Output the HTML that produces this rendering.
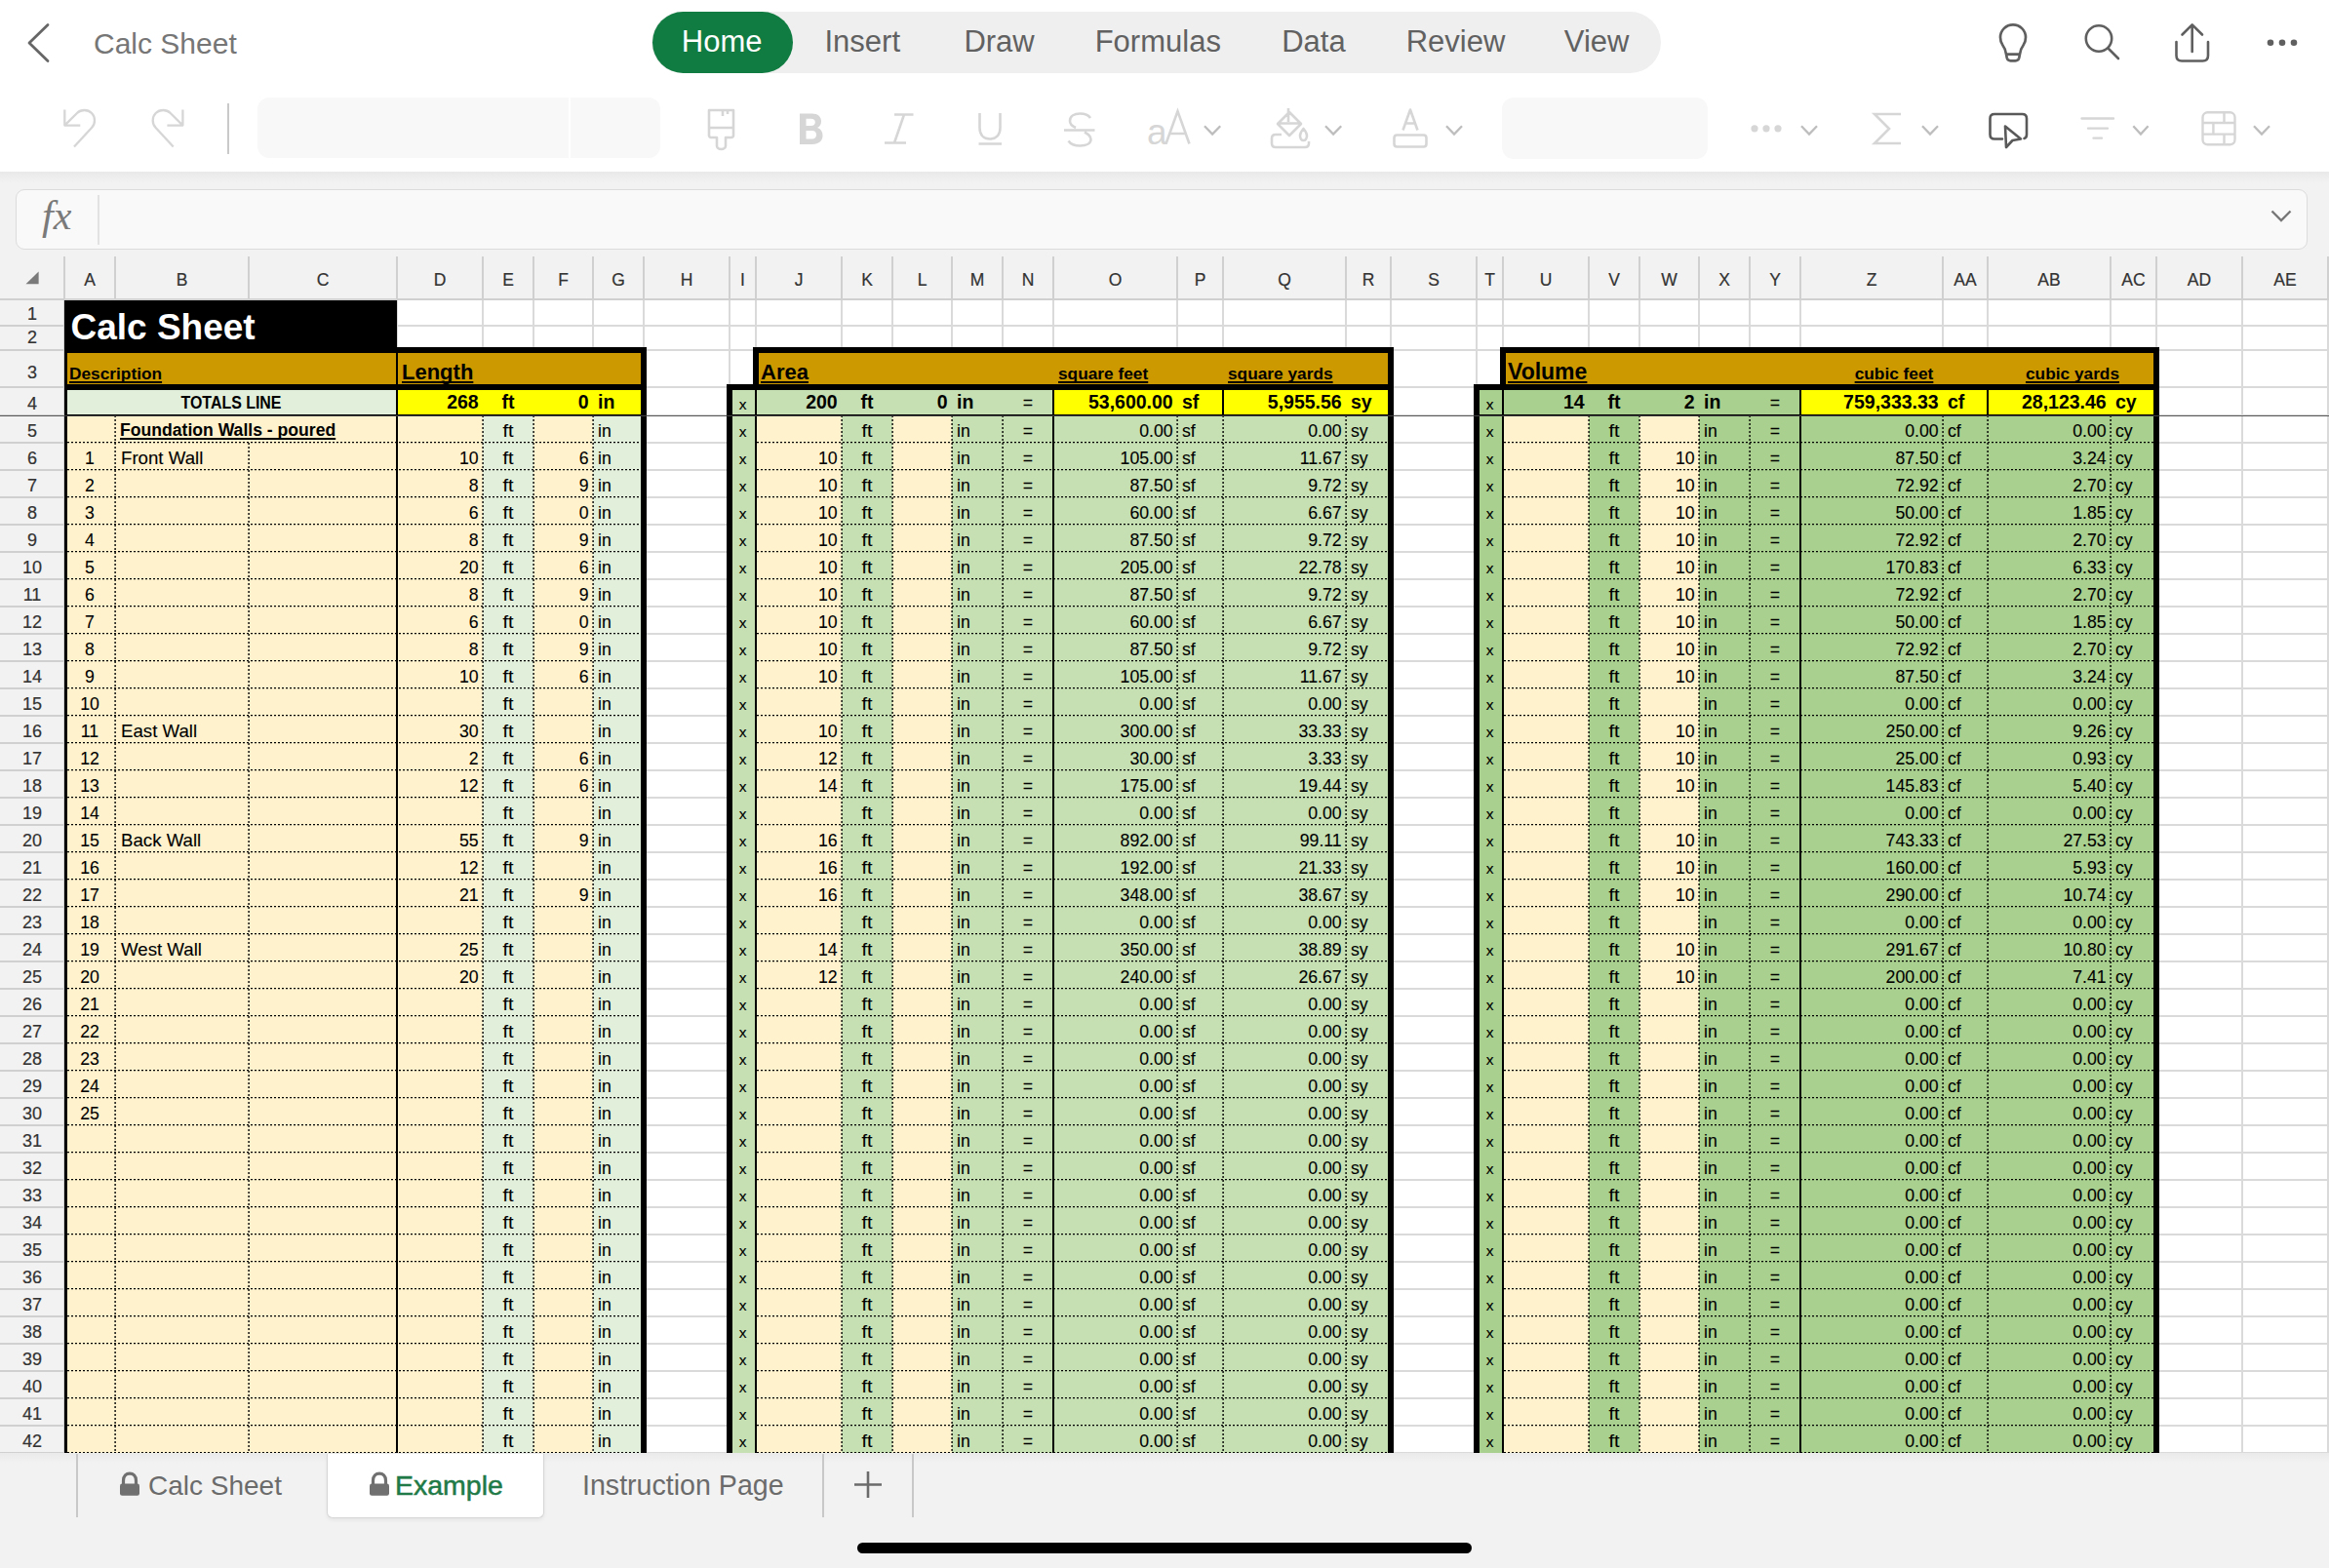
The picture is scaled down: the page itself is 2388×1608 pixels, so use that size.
<!DOCTYPE html>
<html><head><meta charset="utf-8"><title>Calc Sheet</title>
<style>
html,body{margin:0;padding:0;}
body{width:2388px;height:1608px;position:relative;overflow:hidden;background:#fff;font-family:"Liberation Sans", sans-serif;}
div{box-sizing:border-box;}
.hd{position:absolute;height:1.3px;background:repeating-linear-gradient(90deg,#000 0,#000 2px,transparent 2px,transparent 4px);}
.vd{position:absolute;width:1.3px;background:repeating-linear-gradient(180deg,#000 0,#000 2px,transparent 2px,transparent 4px);}
svg{position:absolute;overflow:visible;}
</style></head><body>

<svg style="left:0;top:0" width="2388" height="176" viewBox="0 0 2388 176">
<polyline points="49,25.5 30,44 49,62.5" fill="none" stroke="#666" stroke-width="2.8" stroke-linecap="round" stroke-linejoin="round"/>
<rect x="668" y="12" width="1035" height="63" rx="31.5" fill="#EFEFEF"/>
<rect x="669" y="12" width="144" height="63" rx="31.5" fill="#107C41"/>
<path d="M2056.5,55.6 L2071.5,55.6 M2057,55.6 C2056.5,51.5 2055.5,49 2053.5,46.5 C2051.8,44.3 2051,41.5 2051,38.3 A13,13 0 1 1 2077,38.3 C2077,41.5 2076.2,44.3 2074.5,46.5 C2072.5,49 2071.5,51.5 2071,55.6 L2070.2,59.5 C2069.7,61.5 2068.5,62.3 2066.5,62.3 L2061.5,62.3 C2059.5,62.3 2058.3,61.5 2057.8,59.5 Z" fill="none" stroke="#5f5f5f" stroke-width="2.7" stroke-linejoin="round"/>
<circle cx="2152" cy="39.5" r="13.2" fill="none" stroke="#5f5f5f" stroke-width="2.6"/>
<line x1="2162" y1="50" x2="2172" y2="60" stroke="#5f5f5f" stroke-width="2.6" stroke-linecap="round"/>
<path d="M2231.5,43 L2231.5,57 C2231.5,60.5 2233.5,62.5 2237,62.5 L2258.5,62.5 C2262,62.5 2264,60.5 2264,57 L2264,43" fill="none" stroke="#5f5f5f" stroke-width="2.6" stroke-linecap="round"/>
<path d="M2247.7,53 L2247.7,25.5 M2237.5,35.5 L2247.7,25.3 L2258,35.5" fill="none" stroke="#5f5f5f" stroke-width="2.6" stroke-linecap="round" stroke-linejoin="round"/>
<circle cx="2328" cy="43.8" r="3.3" fill="#5f5f5f"/>
<circle cx="2340" cy="43.8" r="3.3" fill="#5f5f5f"/>
<circle cx="2352" cy="43.8" r="3.3" fill="#5f5f5f"/>
<path d="M66.3,112.5 L66.3,128.6 L82.3,128.6 M66.5,128.4 L79,116 C83,112 90,112 94,116 C98,120 98,127 94,131 L76,150.5" fill="none" stroke="#D6D6D6" stroke-width="2.3" stroke-linejoin="round"/>
<g transform="translate(253.7,0) scale(-1,1)"><path d="M66.3,112.5 L66.3,128.6 L82.3,128.6 M66.5,128.4 L79,116 C83,112 90,112 94,116 C98,120 98,127 94,131 L76,150.5" fill="none" stroke="#D6D6D6" stroke-width="2.3" stroke-linejoin="round"/></g>
<rect x="233" y="106" width="2" height="52" fill="#C9C9C9"/>
<rect x="264" y="100" width="319" height="62" rx="12" fill="#F8F8F8"/>
<rect x="571" y="100" width="12" height="62" fill="#F8F8F8"/>
<rect x="585" y="100" width="92" height="62" rx="12" fill="#F8F8F8"/>
<rect x="585" y="100" width="12" height="62" fill="#F8F8F8"/>
<path d="M727,113 L752,113 L752,139 C752,140 751,141 750,141 L744,141 L744,149.5 C744,151.5 742,153 739.5,153 C737,153 735,151.5 735,149.5 L735,141 L729,141 C728,141 727,140 727,139 Z M727,131 L752,131 M741,113.5 L741,119 M746,113.5 L746,117" fill="none" stroke="#D6D6D6" stroke-width="2.6" stroke-linejoin="round"/>
<path d="M820,116.5 L832.5,116.5 C839,116.5 842,120 842,124.5 C842,127.5 840.5,130 838,131 C841.5,132 843.5,135 843.5,139 C843.5,144.5 839.5,148 833,148 L820,148 Z M826.5,121.8 L826.5,129 L831.5,129 C834.5,129 835.8,127.5 835.8,125.3 C835.8,123 834.5,121.8 831.5,121.8 Z M826.5,134 L826.5,142.5 L832.5,142.5 C835.5,142.5 837,141 837,138.3 C837,135.5 835.5,134 832.5,134 Z" fill="#D6D6D6" fill-rule="evenodd"/>
<path d="M917,117.5 L936.5,117.5 M907,146.5 L929,146.5 M927,117.5 L917,146.5" fill="none" stroke="#D6D6D6" stroke-width="2.6"/>
<path d="M1004.5,116 L1004.5,131 C1004.5,138.5 1009,142.5 1015,142.5 C1021,142.5 1025.5,138.5 1025.5,131 L1025.5,116 M1003.5,147.5 L1027,147.5" fill="none" stroke="#D6D6D6" stroke-width="2.6"/>
<path d="M1118,121 C1116,118 1112,116.5 1107.5,116.5 C1101,116.5 1097,119.5 1097,124 C1097,127.5 1099.5,129.5 1103,131 M1112,135.5 C1116,137.5 1118.5,139.5 1118.5,143 C1118.5,147 1114,149.5 1107.5,149.5 C1101.5,149.5 1097.5,147.5 1095.5,144.5 M1091,133.5 L1122.5,133.5" fill="none" stroke="#D6D6D6" stroke-width="2.6"/>
<text x="1176" y="147.5" font-family="Liberation Sans" font-size="37" fill="#D6D6D6">a</text>
<path d="M1195.5,147.5 L1207.5,114 L1219.5,147.5 M1199.5,137 L1215.5,137" fill="none" stroke="#D6D6D6" stroke-width="2.6"/>
<polyline points="1235,129.3 1243.1,137.5 1251.2,129.3" fill="none" stroke="#BDBDBD" stroke-width="2.3"/>
<path d="M1321,111 L1321,125 M1310,127 L1322,115 L1334,127 L1322,139 Z M1310.5,126.5 L1333.5,126.5 M1340,139 C1340,142 1338.5,144 1336.5,144 C1334.5,144 1333,142 1333,139 C1333,136 1336.5,132 1336.5,132 C1336.5,132 1340,136 1340,139 Z M1314,138 L1308,138 C1305,138 1304,140 1304,142 L1304,147 C1304,149.5 1305.5,151 1308,151 L1338,151 C1340.5,151 1342,149.5 1342,147 L1342,145" fill="none" stroke="#D6D6D6" stroke-width="2.6" stroke-linejoin="round"/>
<polyline points="1359,129.3 1367.1,137.5 1375.2,129.3" fill="none" stroke="#BDBDBD" stroke-width="2.3"/>
<path d="M1438.5,133.5 L1446,112.5 L1453.5,133.5 M1441,126.5 L1451,126.5 M1432.5,138.5 L1459.5,138.5 C1461.5,138.5 1462.5,139.5 1462.5,141.5 L1462.5,147.5 C1462.5,149.5 1461.5,150.5 1459.5,150.5 L1432.5,150.5 C1430.5,150.5 1429.5,149.5 1429.5,147.5 L1429.5,141.5 C1429.5,139.5 1430.5,138.5 1432.5,138.5 Z" fill="none" stroke="#D6D6D6" stroke-width="2.6" stroke-linejoin="round"/>
<polyline points="1483,129.3 1491.0,137.5 1499,129.3" fill="none" stroke="#BDBDBD" stroke-width="2.3"/>
<rect x="1540" y="100" width="211" height="63" rx="12" fill="#F8F8F8"/>
<circle cx="1799" cy="131.8" r="3.6" fill="#D6D6D6"/>
<circle cx="1811" cy="131.8" r="3.6" fill="#D6D6D6"/>
<circle cx="1823" cy="131.8" r="3.6" fill="#D6D6D6"/>
<polyline points="1847,129.3 1855.0,137.5 1863,129.3" fill="none" stroke="#BDBDBD" stroke-width="2.3"/>
<path d="M1949,117 L1922,117 L1937,132 L1922,147 L1949,147" fill="none" stroke="#D6D6D6" stroke-width="2.6"/>
<polyline points="1971,129.3 1979.0,137.5 1987,129.3" fill="none" stroke="#BDBDBD" stroke-width="2.3"/>
<path d="M2053,142.5 L2045,142.5 C2042,142.5 2040.5,141 2040.5,138 L2040.5,121.5 C2040.5,118.5 2042,117 2045,117 L2073.5,117 C2076.5,117 2078,118.5 2078,121.5 L2078,138 C2078,140 2077.5,141.5 2075.5,142" fill="none" stroke="#595959" stroke-width="2.6" stroke-linecap="round"/>
<path d="M2056,129.5 L2072,142.5 L2063.5,144 L2057,151 Z" fill="none" stroke="#595959" stroke-width="2.6" stroke-linejoin="round"/>
<path d="M2134.5,121.5 L2167,121.5 M2141,131.6 L2161,131.6 M2146.5,141.6 L2155,141.6" fill="none" stroke="#D6D6D6" stroke-width="2.4" stroke-linecap="round"/>
<polyline points="2187.3,129.3 2194.95,137.5 2202.6,129.3" fill="none" stroke="#BDBDBD" stroke-width="2.3"/>
<rect x="2258.5" y="115.3" width="33" height="33" rx="5" fill="none" stroke="#D6D6D6" stroke-width="2.4"/>
<path d="M2258.5,126 L2291.5,126 M2258.5,137.6 L2291.5,137.6 M2280.5,115.3 L2280.5,126 M2269.4,126 L2269.4,137.6 M2280.5,137.6 L2280.5,148.3" fill="none" stroke="#D6D6D6" stroke-width="2.4"/>
<polyline points="2311,129.3 2319.0,137.5 2327,129.3" fill="none" stroke="#BDBDBD" stroke-width="2.3"/>
</svg>
<div style="position:absolute;top:29.81px;font-size:30px;line-height:30px;white-space:nowrap;color:#767676;left:96.00px;">Calc Sheet</div>
<div style="position:absolute;top:26.96px;font-size:31px;line-height:31px;white-space:nowrap;color:#fff;left:698.80px;">Home</div>
<div style="position:absolute;top:26.96px;font-size:31px;line-height:31px;white-space:nowrap;color:#616161;left:845.50px;">Insert</div>
<div style="position:absolute;top:26.96px;font-size:31px;line-height:31px;white-space:nowrap;color:#616161;left:988.40px;">Draw</div>
<div style="position:absolute;top:26.96px;font-size:31px;line-height:31px;white-space:nowrap;color:#616161;left:1122.70px;">Formulas</div>
<div style="position:absolute;top:26.96px;font-size:31px;line-height:31px;white-space:nowrap;color:#616161;left:1314.20px;">Data</div>
<div style="position:absolute;top:26.96px;font-size:31px;line-height:31px;white-space:nowrap;color:#616161;left:1441.70px;">Review</div>
<div style="position:absolute;top:26.96px;font-size:31px;line-height:31px;white-space:nowrap;color:#616161;left:1603.80px;">View</div>
<div style="position:absolute;left:0px;top:176px;width:2388px;height:86px;background:#F2F2F2;"></div>
<div style="position:absolute;left:0px;top:176px;width:2388px;height:12px;background:linear-gradient(#E9E9E9,#F2F2F2);"></div>
<div style="position:absolute;left:16px;top:194px;width:2350px;height:62px;border:1.5px solid #DCDCDC;border-radius:9px;background:#F9F9F9"></div>
<div style="position:absolute;left:100px;top:200px;width:2px;height:51px;background:#E2E2E2;"></div>
<div style="position:absolute;top:200.45px;font-size:42px;line-height:42px;white-space:nowrap;color:#7A7A7A;font-style:italic;font-family:'Liberation Serif', serif;left:43.00px;">fx</div>
<svg style="left:0;top:0" width="2388" height="262"><polyline points="2329.5,216.5 2339,226 2348.5,216.5" fill="none" stroke="#777" stroke-width="2.4"/></svg>
<div style="position:absolute;left:0px;top:262px;width:2388px;height:45px;background:#F2F2F2;"></div>
<div style="position:absolute;left:0px;top:306px;width:2388px;height:2px;background:#D0D0D0;"></div>
<div style="position:absolute;left:65px;top:263px;width:2px;height:44px;background:#D0D0D0;"></div>
<div style="position:absolute;left:117px;top:263px;width:2px;height:44px;background:#D0D0D0;"></div>
<div style="position:absolute;left:254px;top:263px;width:2px;height:44px;background:#D0D0D0;"></div>
<div style="position:absolute;left:406px;top:263px;width:2px;height:44px;background:#D0D0D0;"></div>
<div style="position:absolute;left:494px;top:263px;width:2px;height:44px;background:#D0D0D0;"></div>
<div style="position:absolute;left:546px;top:263px;width:2px;height:44px;background:#D0D0D0;"></div>
<div style="position:absolute;left:607px;top:263px;width:2px;height:44px;background:#D0D0D0;"></div>
<div style="position:absolute;left:659px;top:263px;width:2px;height:44px;background:#D0D0D0;"></div>
<div style="position:absolute;left:747px;top:263px;width:2px;height:44px;background:#D0D0D0;"></div>
<div style="position:absolute;left:774px;top:263px;width:2px;height:44px;background:#D0D0D0;"></div>
<div style="position:absolute;left:862px;top:263px;width:2px;height:44px;background:#D0D0D0;"></div>
<div style="position:absolute;left:914px;top:263px;width:2px;height:44px;background:#D0D0D0;"></div>
<div style="position:absolute;left:975px;top:263px;width:2px;height:44px;background:#D0D0D0;"></div>
<div style="position:absolute;left:1027px;top:263px;width:2px;height:44px;background:#D0D0D0;"></div>
<div style="position:absolute;left:1079px;top:263px;width:2px;height:44px;background:#D0D0D0;"></div>
<div style="position:absolute;left:1206px;top:263px;width:2px;height:44px;background:#D0D0D0;"></div>
<div style="position:absolute;left:1253px;top:263px;width:2px;height:44px;background:#D0D0D0;"></div>
<div style="position:absolute;left:1379px;top:263px;width:2px;height:44px;background:#D0D0D0;"></div>
<div style="position:absolute;left:1425px;top:263px;width:2px;height:44px;background:#D0D0D0;"></div>
<div style="position:absolute;left:1513px;top:263px;width:2px;height:44px;background:#D0D0D0;"></div>
<div style="position:absolute;left:1540px;top:263px;width:2px;height:44px;background:#D0D0D0;"></div>
<div style="position:absolute;left:1628px;top:263px;width:2px;height:44px;background:#D0D0D0;"></div>
<div style="position:absolute;left:1680px;top:263px;width:2px;height:44px;background:#D0D0D0;"></div>
<div style="position:absolute;left:1741px;top:263px;width:2px;height:44px;background:#D0D0D0;"></div>
<div style="position:absolute;left:1793px;top:263px;width:2px;height:44px;background:#D0D0D0;"></div>
<div style="position:absolute;left:1845px;top:263px;width:2px;height:44px;background:#D0D0D0;"></div>
<div style="position:absolute;left:1991px;top:263px;width:2px;height:44px;background:#D0D0D0;"></div>
<div style="position:absolute;left:2037px;top:263px;width:2px;height:44px;background:#D0D0D0;"></div>
<div style="position:absolute;left:2163px;top:263px;width:2px;height:44px;background:#D0D0D0;"></div>
<div style="position:absolute;left:2210px;top:263px;width:2px;height:44px;background:#D0D0D0;"></div>
<div style="position:absolute;left:2298px;top:263px;width:2px;height:44px;background:#D0D0D0;"></div>
<div style="position:absolute;left:2386px;top:263px;width:2px;height:44px;background:#D0D0D0;"></div>
<svg style="left:0;top:0" width="80" height="310"><polygon points="26.5,291.2 39.6,291.2 39.6,278.5" fill="#7A7A7A"/></svg>
<div style="position:absolute;top:278.59px;font-size:17.5px;line-height:17.5px;white-space:nowrap;color:#333;left:-208.00px;width:600px;text-align:center;-webkit-text-stroke:0.2px #333;">A</div>
<div style="position:absolute;top:278.59px;font-size:17.5px;line-height:17.5px;white-space:nowrap;color:#333;left:-113.50px;width:600px;text-align:center;-webkit-text-stroke:0.2px #333;">B</div>
<div style="position:absolute;top:278.59px;font-size:17.5px;line-height:17.5px;white-space:nowrap;color:#333;left:31.00px;width:600px;text-align:center;-webkit-text-stroke:0.2px #333;">C</div>
<div style="position:absolute;top:278.59px;font-size:17.5px;line-height:17.5px;white-space:nowrap;color:#333;left:151.00px;width:600px;text-align:center;-webkit-text-stroke:0.2px #333;">D</div>
<div style="position:absolute;top:278.59px;font-size:17.5px;line-height:17.5px;white-space:nowrap;color:#333;left:221.00px;width:600px;text-align:center;-webkit-text-stroke:0.2px #333;">E</div>
<div style="position:absolute;top:278.59px;font-size:17.5px;line-height:17.5px;white-space:nowrap;color:#333;left:277.50px;width:600px;text-align:center;-webkit-text-stroke:0.2px #333;">F</div>
<div style="position:absolute;top:278.59px;font-size:17.5px;line-height:17.5px;white-space:nowrap;color:#333;left:334.00px;width:600px;text-align:center;-webkit-text-stroke:0.2px #333;">G</div>
<div style="position:absolute;top:278.59px;font-size:17.5px;line-height:17.5px;white-space:nowrap;color:#333;left:404.00px;width:600px;text-align:center;-webkit-text-stroke:0.2px #333;">H</div>
<div style="position:absolute;top:278.59px;font-size:17.5px;line-height:17.5px;white-space:nowrap;color:#333;left:461.50px;width:600px;text-align:center;-webkit-text-stroke:0.2px #333;">I</div>
<div style="position:absolute;top:278.59px;font-size:17.5px;line-height:17.5px;white-space:nowrap;color:#333;left:519.00px;width:600px;text-align:center;-webkit-text-stroke:0.2px #333;">J</div>
<div style="position:absolute;top:278.59px;font-size:17.5px;line-height:17.5px;white-space:nowrap;color:#333;left:589.00px;width:600px;text-align:center;-webkit-text-stroke:0.2px #333;">K</div>
<div style="position:absolute;top:278.59px;font-size:17.5px;line-height:17.5px;white-space:nowrap;color:#333;left:645.50px;width:600px;text-align:center;-webkit-text-stroke:0.2px #333;">L</div>
<div style="position:absolute;top:278.59px;font-size:17.5px;line-height:17.5px;white-space:nowrap;color:#333;left:702.00px;width:600px;text-align:center;-webkit-text-stroke:0.2px #333;">M</div>
<div style="position:absolute;top:278.59px;font-size:17.5px;line-height:17.5px;white-space:nowrap;color:#333;left:754.00px;width:600px;text-align:center;-webkit-text-stroke:0.2px #333;">N</div>
<div style="position:absolute;top:278.59px;font-size:17.5px;line-height:17.5px;white-space:nowrap;color:#333;left:843.50px;width:600px;text-align:center;-webkit-text-stroke:0.2px #333;">O</div>
<div style="position:absolute;top:278.59px;font-size:17.5px;line-height:17.5px;white-space:nowrap;color:#333;left:930.50px;width:600px;text-align:center;-webkit-text-stroke:0.2px #333;">P</div>
<div style="position:absolute;top:278.59px;font-size:17.5px;line-height:17.5px;white-space:nowrap;color:#333;left:1017.00px;width:600px;text-align:center;-webkit-text-stroke:0.2px #333;">Q</div>
<div style="position:absolute;top:278.59px;font-size:17.5px;line-height:17.5px;white-space:nowrap;color:#333;left:1103.00px;width:600px;text-align:center;-webkit-text-stroke:0.2px #333;">R</div>
<div style="position:absolute;top:278.59px;font-size:17.5px;line-height:17.5px;white-space:nowrap;color:#333;left:1170.00px;width:600px;text-align:center;-webkit-text-stroke:0.2px #333;">S</div>
<div style="position:absolute;top:278.59px;font-size:17.5px;line-height:17.5px;white-space:nowrap;color:#333;left:1227.50px;width:600px;text-align:center;-webkit-text-stroke:0.2px #333;">T</div>
<div style="position:absolute;top:278.59px;font-size:17.5px;line-height:17.5px;white-space:nowrap;color:#333;left:1285.00px;width:600px;text-align:center;-webkit-text-stroke:0.2px #333;">U</div>
<div style="position:absolute;top:278.59px;font-size:17.5px;line-height:17.5px;white-space:nowrap;color:#333;left:1355.00px;width:600px;text-align:center;-webkit-text-stroke:0.2px #333;">V</div>
<div style="position:absolute;top:278.59px;font-size:17.5px;line-height:17.5px;white-space:nowrap;color:#333;left:1411.50px;width:600px;text-align:center;-webkit-text-stroke:0.2px #333;">W</div>
<div style="position:absolute;top:278.59px;font-size:17.5px;line-height:17.5px;white-space:nowrap;color:#333;left:1468.00px;width:600px;text-align:center;-webkit-text-stroke:0.2px #333;">X</div>
<div style="position:absolute;top:278.59px;font-size:17.5px;line-height:17.5px;white-space:nowrap;color:#333;left:1520.00px;width:600px;text-align:center;-webkit-text-stroke:0.2px #333;">Y</div>
<div style="position:absolute;top:278.59px;font-size:17.5px;line-height:17.5px;white-space:nowrap;color:#333;left:1619.00px;width:600px;text-align:center;-webkit-text-stroke:0.2px #333;">Z</div>
<div style="position:absolute;top:278.59px;font-size:17.5px;line-height:17.5px;white-space:nowrap;color:#333;left:1715.00px;width:600px;text-align:center;-webkit-text-stroke:0.2px #333;">AA</div>
<div style="position:absolute;top:278.59px;font-size:17.5px;line-height:17.5px;white-space:nowrap;color:#333;left:1801.00px;width:600px;text-align:center;-webkit-text-stroke:0.2px #333;">AB</div>
<div style="position:absolute;top:278.59px;font-size:17.5px;line-height:17.5px;white-space:nowrap;color:#333;left:1887.50px;width:600px;text-align:center;-webkit-text-stroke:0.2px #333;">AC</div>
<div style="position:absolute;top:278.59px;font-size:17.5px;line-height:17.5px;white-space:nowrap;color:#333;left:1955.00px;width:600px;text-align:center;-webkit-text-stroke:0.2px #333;">AD</div>
<div style="position:absolute;top:278.59px;font-size:17.5px;line-height:17.5px;white-space:nowrap;color:#333;left:2043.00px;width:600px;text-align:center;-webkit-text-stroke:0.2px #333;">AE</div>
<div style="position:absolute;left:0px;top:308px;width:66px;height:1182px;background:#F2F2F2;"></div>
<div style="position:absolute;left:65px;top:308px;width:2px;height:1182px;background:#D0D0D0;"></div>
<div style="position:absolute;left:0px;top:333.25px;width:65px;height:1.5px;background:#D0D0D0;"></div>
<div style="position:absolute;top:312.76px;font-size:18px;line-height:18px;white-space:nowrap;color:#333;left:-267.00px;width:600px;text-align:center;-webkit-text-stroke:0.2px #333;">1</div>
<div style="position:absolute;left:0px;top:358.25px;width:65px;height:1.5px;background:#D0D0D0;"></div>
<div style="position:absolute;top:336.56px;font-size:18px;line-height:18px;white-space:nowrap;color:#333;left:-267.00px;width:600px;text-align:center;-webkit-text-stroke:0.2px #333;">2</div>
<div style="position:absolute;left:0px;top:396.25px;width:65px;height:1.5px;background:#D0D0D0;"></div>
<div style="position:absolute;top:373.36px;font-size:18px;line-height:18px;white-space:nowrap;color:#333;left:-267.00px;width:600px;text-align:center;-webkit-text-stroke:0.2px #333;">3</div>
<div style="position:absolute;left:0px;top:425.25px;width:65px;height:1.5px;background:#D0D0D0;"></div>
<div style="position:absolute;top:404.76px;font-size:18px;line-height:18px;white-space:nowrap;color:#333;left:-267.00px;width:600px;text-align:center;-webkit-text-stroke:0.2px #333;">4</div>
<div style="position:absolute;left:0px;top:453.25px;width:65px;height:1.5px;background:#D0D0D0;"></div>
<div style="position:absolute;top:432.76px;font-size:18px;line-height:18px;white-space:nowrap;color:#333;left:-267.00px;width:600px;text-align:center;-webkit-text-stroke:0.2px #333;">5</div>
<div style="position:absolute;left:0px;top:481.25px;width:65px;height:1.5px;background:#D0D0D0;"></div>
<div style="position:absolute;top:460.76px;font-size:18px;line-height:18px;white-space:nowrap;color:#333;left:-267.00px;width:600px;text-align:center;-webkit-text-stroke:0.2px #333;">6</div>
<div style="position:absolute;left:0px;top:509.25px;width:65px;height:1.5px;background:#D0D0D0;"></div>
<div style="position:absolute;top:488.76px;font-size:18px;line-height:18px;white-space:nowrap;color:#333;left:-267.00px;width:600px;text-align:center;-webkit-text-stroke:0.2px #333;">7</div>
<div style="position:absolute;left:0px;top:537.25px;width:65px;height:1.5px;background:#D0D0D0;"></div>
<div style="position:absolute;top:516.76px;font-size:18px;line-height:18px;white-space:nowrap;color:#333;left:-267.00px;width:600px;text-align:center;-webkit-text-stroke:0.2px #333;">8</div>
<div style="position:absolute;left:0px;top:565.25px;width:65px;height:1.5px;background:#D0D0D0;"></div>
<div style="position:absolute;top:544.76px;font-size:18px;line-height:18px;white-space:nowrap;color:#333;left:-267.00px;width:600px;text-align:center;-webkit-text-stroke:0.2px #333;">9</div>
<div style="position:absolute;left:0px;top:593.25px;width:65px;height:1.5px;background:#D0D0D0;"></div>
<div style="position:absolute;top:572.76px;font-size:18px;line-height:18px;white-space:nowrap;color:#333;left:-267.00px;width:600px;text-align:center;-webkit-text-stroke:0.2px #333;">10</div>
<div style="position:absolute;left:0px;top:621.25px;width:65px;height:1.5px;background:#D0D0D0;"></div>
<div style="position:absolute;top:600.76px;font-size:18px;line-height:18px;white-space:nowrap;color:#333;left:-267.00px;width:600px;text-align:center;-webkit-text-stroke:0.2px #333;">11</div>
<div style="position:absolute;left:0px;top:649.25px;width:65px;height:1.5px;background:#D0D0D0;"></div>
<div style="position:absolute;top:628.76px;font-size:18px;line-height:18px;white-space:nowrap;color:#333;left:-267.00px;width:600px;text-align:center;-webkit-text-stroke:0.2px #333;">12</div>
<div style="position:absolute;left:0px;top:677.25px;width:65px;height:1.5px;background:#D0D0D0;"></div>
<div style="position:absolute;top:656.76px;font-size:18px;line-height:18px;white-space:nowrap;color:#333;left:-267.00px;width:600px;text-align:center;-webkit-text-stroke:0.2px #333;">13</div>
<div style="position:absolute;left:0px;top:705.25px;width:65px;height:1.5px;background:#D0D0D0;"></div>
<div style="position:absolute;top:684.76px;font-size:18px;line-height:18px;white-space:nowrap;color:#333;left:-267.00px;width:600px;text-align:center;-webkit-text-stroke:0.2px #333;">14</div>
<div style="position:absolute;left:0px;top:733.25px;width:65px;height:1.5px;background:#D0D0D0;"></div>
<div style="position:absolute;top:712.76px;font-size:18px;line-height:18px;white-space:nowrap;color:#333;left:-267.00px;width:600px;text-align:center;-webkit-text-stroke:0.2px #333;">15</div>
<div style="position:absolute;left:0px;top:761.25px;width:65px;height:1.5px;background:#D0D0D0;"></div>
<div style="position:absolute;top:740.76px;font-size:18px;line-height:18px;white-space:nowrap;color:#333;left:-267.00px;width:600px;text-align:center;-webkit-text-stroke:0.2px #333;">16</div>
<div style="position:absolute;left:0px;top:789.25px;width:65px;height:1.5px;background:#D0D0D0;"></div>
<div style="position:absolute;top:768.76px;font-size:18px;line-height:18px;white-space:nowrap;color:#333;left:-267.00px;width:600px;text-align:center;-webkit-text-stroke:0.2px #333;">17</div>
<div style="position:absolute;left:0px;top:817.25px;width:65px;height:1.5px;background:#D0D0D0;"></div>
<div style="position:absolute;top:796.76px;font-size:18px;line-height:18px;white-space:nowrap;color:#333;left:-267.00px;width:600px;text-align:center;-webkit-text-stroke:0.2px #333;">18</div>
<div style="position:absolute;left:0px;top:845.25px;width:65px;height:1.5px;background:#D0D0D0;"></div>
<div style="position:absolute;top:824.76px;font-size:18px;line-height:18px;white-space:nowrap;color:#333;left:-267.00px;width:600px;text-align:center;-webkit-text-stroke:0.2px #333;">19</div>
<div style="position:absolute;left:0px;top:873.25px;width:65px;height:1.5px;background:#D0D0D0;"></div>
<div style="position:absolute;top:852.76px;font-size:18px;line-height:18px;white-space:nowrap;color:#333;left:-267.00px;width:600px;text-align:center;-webkit-text-stroke:0.2px #333;">20</div>
<div style="position:absolute;left:0px;top:901.25px;width:65px;height:1.5px;background:#D0D0D0;"></div>
<div style="position:absolute;top:880.76px;font-size:18px;line-height:18px;white-space:nowrap;color:#333;left:-267.00px;width:600px;text-align:center;-webkit-text-stroke:0.2px #333;">21</div>
<div style="position:absolute;left:0px;top:929.25px;width:65px;height:1.5px;background:#D0D0D0;"></div>
<div style="position:absolute;top:908.76px;font-size:18px;line-height:18px;white-space:nowrap;color:#333;left:-267.00px;width:600px;text-align:center;-webkit-text-stroke:0.2px #333;">22</div>
<div style="position:absolute;left:0px;top:957.25px;width:65px;height:1.5px;background:#D0D0D0;"></div>
<div style="position:absolute;top:936.76px;font-size:18px;line-height:18px;white-space:nowrap;color:#333;left:-267.00px;width:600px;text-align:center;-webkit-text-stroke:0.2px #333;">23</div>
<div style="position:absolute;left:0px;top:985.25px;width:65px;height:1.5px;background:#D0D0D0;"></div>
<div style="position:absolute;top:964.76px;font-size:18px;line-height:18px;white-space:nowrap;color:#333;left:-267.00px;width:600px;text-align:center;-webkit-text-stroke:0.2px #333;">24</div>
<div style="position:absolute;left:0px;top:1013.25px;width:65px;height:1.5px;background:#D0D0D0;"></div>
<div style="position:absolute;top:992.76px;font-size:18px;line-height:18px;white-space:nowrap;color:#333;left:-267.00px;width:600px;text-align:center;-webkit-text-stroke:0.2px #333;">25</div>
<div style="position:absolute;left:0px;top:1041.25px;width:65px;height:1.5px;background:#D0D0D0;"></div>
<div style="position:absolute;top:1020.76px;font-size:18px;line-height:18px;white-space:nowrap;color:#333;left:-267.00px;width:600px;text-align:center;-webkit-text-stroke:0.2px #333;">26</div>
<div style="position:absolute;left:0px;top:1069.25px;width:65px;height:1.5px;background:#D0D0D0;"></div>
<div style="position:absolute;top:1048.76px;font-size:18px;line-height:18px;white-space:nowrap;color:#333;left:-267.00px;width:600px;text-align:center;-webkit-text-stroke:0.2px #333;">27</div>
<div style="position:absolute;left:0px;top:1097.25px;width:65px;height:1.5px;background:#D0D0D0;"></div>
<div style="position:absolute;top:1076.76px;font-size:18px;line-height:18px;white-space:nowrap;color:#333;left:-267.00px;width:600px;text-align:center;-webkit-text-stroke:0.2px #333;">28</div>
<div style="position:absolute;left:0px;top:1125.25px;width:65px;height:1.5px;background:#D0D0D0;"></div>
<div style="position:absolute;top:1104.76px;font-size:18px;line-height:18px;white-space:nowrap;color:#333;left:-267.00px;width:600px;text-align:center;-webkit-text-stroke:0.2px #333;">29</div>
<div style="position:absolute;left:0px;top:1153.25px;width:65px;height:1.5px;background:#D0D0D0;"></div>
<div style="position:absolute;top:1132.76px;font-size:18px;line-height:18px;white-space:nowrap;color:#333;left:-267.00px;width:600px;text-align:center;-webkit-text-stroke:0.2px #333;">30</div>
<div style="position:absolute;left:0px;top:1181.25px;width:65px;height:1.5px;background:#D0D0D0;"></div>
<div style="position:absolute;top:1160.76px;font-size:18px;line-height:18px;white-space:nowrap;color:#333;left:-267.00px;width:600px;text-align:center;-webkit-text-stroke:0.2px #333;">31</div>
<div style="position:absolute;left:0px;top:1209.25px;width:65px;height:1.5px;background:#D0D0D0;"></div>
<div style="position:absolute;top:1188.76px;font-size:18px;line-height:18px;white-space:nowrap;color:#333;left:-267.00px;width:600px;text-align:center;-webkit-text-stroke:0.2px #333;">32</div>
<div style="position:absolute;left:0px;top:1237.25px;width:65px;height:1.5px;background:#D0D0D0;"></div>
<div style="position:absolute;top:1216.76px;font-size:18px;line-height:18px;white-space:nowrap;color:#333;left:-267.00px;width:600px;text-align:center;-webkit-text-stroke:0.2px #333;">33</div>
<div style="position:absolute;left:0px;top:1265.25px;width:65px;height:1.5px;background:#D0D0D0;"></div>
<div style="position:absolute;top:1244.76px;font-size:18px;line-height:18px;white-space:nowrap;color:#333;left:-267.00px;width:600px;text-align:center;-webkit-text-stroke:0.2px #333;">34</div>
<div style="position:absolute;left:0px;top:1293.25px;width:65px;height:1.5px;background:#D0D0D0;"></div>
<div style="position:absolute;top:1272.76px;font-size:18px;line-height:18px;white-space:nowrap;color:#333;left:-267.00px;width:600px;text-align:center;-webkit-text-stroke:0.2px #333;">35</div>
<div style="position:absolute;left:0px;top:1321.25px;width:65px;height:1.5px;background:#D0D0D0;"></div>
<div style="position:absolute;top:1300.76px;font-size:18px;line-height:18px;white-space:nowrap;color:#333;left:-267.00px;width:600px;text-align:center;-webkit-text-stroke:0.2px #333;">36</div>
<div style="position:absolute;left:0px;top:1349.25px;width:65px;height:1.5px;background:#D0D0D0;"></div>
<div style="position:absolute;top:1328.76px;font-size:18px;line-height:18px;white-space:nowrap;color:#333;left:-267.00px;width:600px;text-align:center;-webkit-text-stroke:0.2px #333;">37</div>
<div style="position:absolute;left:0px;top:1377.25px;width:65px;height:1.5px;background:#D0D0D0;"></div>
<div style="position:absolute;top:1356.76px;font-size:18px;line-height:18px;white-space:nowrap;color:#333;left:-267.00px;width:600px;text-align:center;-webkit-text-stroke:0.2px #333;">38</div>
<div style="position:absolute;left:0px;top:1405.25px;width:65px;height:1.5px;background:#D0D0D0;"></div>
<div style="position:absolute;top:1384.76px;font-size:18px;line-height:18px;white-space:nowrap;color:#333;left:-267.00px;width:600px;text-align:center;-webkit-text-stroke:0.2px #333;">39</div>
<div style="position:absolute;left:0px;top:1433.25px;width:65px;height:1.5px;background:#D0D0D0;"></div>
<div style="position:absolute;top:1412.76px;font-size:18px;line-height:18px;white-space:nowrap;color:#333;left:-267.00px;width:600px;text-align:center;-webkit-text-stroke:0.2px #333;">40</div>
<div style="position:absolute;left:0px;top:1461.25px;width:65px;height:1.5px;background:#D0D0D0;"></div>
<div style="position:absolute;top:1440.76px;font-size:18px;line-height:18px;white-space:nowrap;color:#333;left:-267.00px;width:600px;text-align:center;-webkit-text-stroke:0.2px #333;">41</div>
<div style="position:absolute;left:0px;top:1489.25px;width:65px;height:1.5px;background:#D0D0D0;"></div>
<div style="position:absolute;top:1468.76px;font-size:18px;line-height:18px;white-space:nowrap;color:#333;left:-267.00px;width:600px;text-align:center;-webkit-text-stroke:0.2px #333;">42</div>
<div style="position:absolute;left:117px;top:308px;width:2px;height:1182px;background:#DADADA;"></div>
<div style="position:absolute;left:254px;top:308px;width:2px;height:1182px;background:#DADADA;"></div>
<div style="position:absolute;left:406px;top:308px;width:2px;height:1182px;background:#DADADA;"></div>
<div style="position:absolute;left:494px;top:308px;width:2px;height:1182px;background:#DADADA;"></div>
<div style="position:absolute;left:546px;top:308px;width:2px;height:1182px;background:#DADADA;"></div>
<div style="position:absolute;left:607px;top:308px;width:2px;height:1182px;background:#DADADA;"></div>
<div style="position:absolute;left:659px;top:308px;width:2px;height:1182px;background:#DADADA;"></div>
<div style="position:absolute;left:747px;top:308px;width:2px;height:1182px;background:#DADADA;"></div>
<div style="position:absolute;left:774px;top:308px;width:2px;height:1182px;background:#DADADA;"></div>
<div style="position:absolute;left:862px;top:308px;width:2px;height:1182px;background:#DADADA;"></div>
<div style="position:absolute;left:914px;top:308px;width:2px;height:1182px;background:#DADADA;"></div>
<div style="position:absolute;left:975px;top:308px;width:2px;height:1182px;background:#DADADA;"></div>
<div style="position:absolute;left:1027px;top:308px;width:2px;height:1182px;background:#DADADA;"></div>
<div style="position:absolute;left:1079px;top:308px;width:2px;height:1182px;background:#DADADA;"></div>
<div style="position:absolute;left:1206px;top:308px;width:2px;height:1182px;background:#DADADA;"></div>
<div style="position:absolute;left:1253px;top:308px;width:2px;height:1182px;background:#DADADA;"></div>
<div style="position:absolute;left:1379px;top:308px;width:2px;height:1182px;background:#DADADA;"></div>
<div style="position:absolute;left:1425px;top:308px;width:2px;height:1182px;background:#DADADA;"></div>
<div style="position:absolute;left:1513px;top:308px;width:2px;height:1182px;background:#DADADA;"></div>
<div style="position:absolute;left:1540px;top:308px;width:2px;height:1182px;background:#DADADA;"></div>
<div style="position:absolute;left:1628px;top:308px;width:2px;height:1182px;background:#DADADA;"></div>
<div style="position:absolute;left:1680px;top:308px;width:2px;height:1182px;background:#DADADA;"></div>
<div style="position:absolute;left:1741px;top:308px;width:2px;height:1182px;background:#DADADA;"></div>
<div style="position:absolute;left:1793px;top:308px;width:2px;height:1182px;background:#DADADA;"></div>
<div style="position:absolute;left:1845px;top:308px;width:2px;height:1182px;background:#DADADA;"></div>
<div style="position:absolute;left:1991px;top:308px;width:2px;height:1182px;background:#DADADA;"></div>
<div style="position:absolute;left:2037px;top:308px;width:2px;height:1182px;background:#DADADA;"></div>
<div style="position:absolute;left:2163px;top:308px;width:2px;height:1182px;background:#DADADA;"></div>
<div style="position:absolute;left:2210px;top:308px;width:2px;height:1182px;background:#DADADA;"></div>
<div style="position:absolute;left:2298px;top:308px;width:2px;height:1182px;background:#DADADA;"></div>
<div style="position:absolute;left:2386px;top:308px;width:2px;height:1182px;background:#DADADA;"></div>
<div style="position:absolute;left:67px;top:333px;width:2321px;height:2px;background:#DADADA;"></div>
<div style="position:absolute;left:67px;top:358px;width:2321px;height:2px;background:#DADADA;"></div>
<div style="position:absolute;left:67px;top:396px;width:2321px;height:2px;background:#DADADA;"></div>
<div style="position:absolute;left:67px;top:425px;width:2321px;height:2px;background:#DADADA;"></div>
<div style="position:absolute;left:67px;top:453px;width:2321px;height:2px;background:#DADADA;"></div>
<div style="position:absolute;left:67px;top:481px;width:2321px;height:2px;background:#DADADA;"></div>
<div style="position:absolute;left:67px;top:509px;width:2321px;height:2px;background:#DADADA;"></div>
<div style="position:absolute;left:67px;top:537px;width:2321px;height:2px;background:#DADADA;"></div>
<div style="position:absolute;left:67px;top:565px;width:2321px;height:2px;background:#DADADA;"></div>
<div style="position:absolute;left:67px;top:593px;width:2321px;height:2px;background:#DADADA;"></div>
<div style="position:absolute;left:67px;top:621px;width:2321px;height:2px;background:#DADADA;"></div>
<div style="position:absolute;left:67px;top:649px;width:2321px;height:2px;background:#DADADA;"></div>
<div style="position:absolute;left:67px;top:677px;width:2321px;height:2px;background:#DADADA;"></div>
<div style="position:absolute;left:67px;top:705px;width:2321px;height:2px;background:#DADADA;"></div>
<div style="position:absolute;left:67px;top:733px;width:2321px;height:2px;background:#DADADA;"></div>
<div style="position:absolute;left:67px;top:761px;width:2321px;height:2px;background:#DADADA;"></div>
<div style="position:absolute;left:67px;top:789px;width:2321px;height:2px;background:#DADADA;"></div>
<div style="position:absolute;left:67px;top:817px;width:2321px;height:2px;background:#DADADA;"></div>
<div style="position:absolute;left:67px;top:845px;width:2321px;height:2px;background:#DADADA;"></div>
<div style="position:absolute;left:67px;top:873px;width:2321px;height:2px;background:#DADADA;"></div>
<div style="position:absolute;left:67px;top:901px;width:2321px;height:2px;background:#DADADA;"></div>
<div style="position:absolute;left:67px;top:929px;width:2321px;height:2px;background:#DADADA;"></div>
<div style="position:absolute;left:67px;top:957px;width:2321px;height:2px;background:#DADADA;"></div>
<div style="position:absolute;left:67px;top:985px;width:2321px;height:2px;background:#DADADA;"></div>
<div style="position:absolute;left:67px;top:1013px;width:2321px;height:2px;background:#DADADA;"></div>
<div style="position:absolute;left:67px;top:1041px;width:2321px;height:2px;background:#DADADA;"></div>
<div style="position:absolute;left:67px;top:1069px;width:2321px;height:2px;background:#DADADA;"></div>
<div style="position:absolute;left:67px;top:1097px;width:2321px;height:2px;background:#DADADA;"></div>
<div style="position:absolute;left:67px;top:1125px;width:2321px;height:2px;background:#DADADA;"></div>
<div style="position:absolute;left:67px;top:1153px;width:2321px;height:2px;background:#DADADA;"></div>
<div style="position:absolute;left:67px;top:1181px;width:2321px;height:2px;background:#DADADA;"></div>
<div style="position:absolute;left:67px;top:1209px;width:2321px;height:2px;background:#DADADA;"></div>
<div style="position:absolute;left:67px;top:1237px;width:2321px;height:2px;background:#DADADA;"></div>
<div style="position:absolute;left:67px;top:1265px;width:2321px;height:2px;background:#DADADA;"></div>
<div style="position:absolute;left:67px;top:1293px;width:2321px;height:2px;background:#DADADA;"></div>
<div style="position:absolute;left:67px;top:1321px;width:2321px;height:2px;background:#DADADA;"></div>
<div style="position:absolute;left:67px;top:1349px;width:2321px;height:2px;background:#DADADA;"></div>
<div style="position:absolute;left:67px;top:1377px;width:2321px;height:2px;background:#DADADA;"></div>
<div style="position:absolute;left:67px;top:1405px;width:2321px;height:2px;background:#DADADA;"></div>
<div style="position:absolute;left:67px;top:1433px;width:2321px;height:2px;background:#DADADA;"></div>
<div style="position:absolute;left:67px;top:1461px;width:2321px;height:2px;background:#DADADA;"></div>
<div style="position:absolute;left:67px;top:1489px;width:2321px;height:2px;background:#DADADA;"></div>
<div style="position:absolute;left:66px;top:308px;width:341px;height:51px;background:#000;"></div>
<div style="position:absolute;left:66px;top:359px;width:594px;height:38px;background:#CC9900;"></div>
<div style="position:absolute;left:775px;top:359px;width:651px;height:38px;background:#CC9900;"></div>
<div style="position:absolute;left:1541px;top:359px;width:670px;height:38px;background:#CC9900;"></div>
<div style="position:absolute;left:66px;top:397px;width:341px;height:29px;background:#E2EFDA;"></div>
<div style="position:absolute;left:407px;top:397px;width:253px;height:29px;background:#FFFF00;"></div>
<div style="position:absolute;left:748px;top:397px;width:332px;height:29px;background:#C6E0B4;"></div>
<div style="position:absolute;left:1080px;top:397px;width:346px;height:29px;background:#FFFF00;"></div>
<div style="position:absolute;left:1514px;top:397px;width:332px;height:29px;background:#A9D08E;"></div>
<div style="position:absolute;left:1846px;top:397px;width:365px;height:29px;background:#FFFF00;"></div>
<div style="position:absolute;left:66px;top:426px;width:429px;height:1064px;background:#FFF2CC;"></div>
<div style="position:absolute;left:495px;top:426px;width:52px;height:1064px;background:#E2EFDA;"></div>
<div style="position:absolute;left:547px;top:426px;width:61px;height:1064px;background:#FFF2CC;"></div>
<div style="position:absolute;left:608px;top:426px;width:52px;height:1064px;background:#E2EFDA;"></div>
<div style="position:absolute;left:748px;top:426px;width:27px;height:1064px;background:#C6E0B4;"></div>
<div style="position:absolute;left:775px;top:426px;width:88px;height:1064px;background:#FFF2CC;"></div>
<div style="position:absolute;left:863px;top:426px;width:52px;height:1064px;background:#C6E0B4;"></div>
<div style="position:absolute;left:915px;top:426px;width:61px;height:1064px;background:#FFF2CC;"></div>
<div style="position:absolute;left:976px;top:426px;width:450px;height:1064px;background:#C6E0B4;"></div>
<div style="position:absolute;left:1514px;top:426px;width:27px;height:1064px;background:#A9D08E;"></div>
<div style="position:absolute;left:1541px;top:426px;width:88px;height:1064px;background:#FFF2CC;"></div>
<div style="position:absolute;left:1629px;top:426px;width:52px;height:1064px;background:#A9D08E;"></div>
<div style="position:absolute;left:1681px;top:426px;width:61px;height:1064px;background:#FFF2CC;"></div>
<div style="position:absolute;left:1742px;top:426px;width:469px;height:1064px;background:#A9D08E;"></div>
<svg style="left:0;top:0" width="2388" height="1608"><path d="M118.10,426V1490M255.10,454V1490M495.10,426V1490M547.10,426V1490M608.10,426V1490M863.10,426V1490M915.10,426V1490M976.10,426V1490M1028.10,426V1490M1207.10,426V1490M1254.10,426V1490M1380.10,426V1490M1629.10,426V1490M1681.10,426V1490M1742.10,426V1490M1794.10,426V1490M1992.10,426V1490M2038.10,426V1490M2164.10,426V1490M69,453.60H657M776,453.60H1423M1542,453.60H2208M69,481.60H657M776,481.60H1423M1542,481.60H2208M69,509.60H657M776,509.60H1423M1542,509.60H2208M69,537.60H657M776,537.60H1423M1542,537.60H2208M69,565.60H657M776,565.60H1423M1542,565.60H2208M69,593.60H657M776,593.60H1423M1542,593.60H2208M69,621.60H657M776,621.60H1423M1542,621.60H2208M69,649.60H657M776,649.60H1423M1542,649.60H2208M69,677.60H657M776,677.60H1423M1542,677.60H2208M69,705.60H657M776,705.60H1423M1542,705.60H2208M69,733.60H657M776,733.60H1423M1542,733.60H2208M69,761.60H657M776,761.60H1423M1542,761.60H2208M69,789.60H657M776,789.60H1423M1542,789.60H2208M69,817.60H657M776,817.60H1423M1542,817.60H2208M69,845.60H657M776,845.60H1423M1542,845.60H2208M69,873.60H657M776,873.60H1423M1542,873.60H2208M69,901.60H657M776,901.60H1423M1542,901.60H2208M69,929.60H657M776,929.60H1423M1542,929.60H2208M69,957.60H657M776,957.60H1423M1542,957.60H2208M69,985.60H657M776,985.60H1423M1542,985.60H2208M69,1013.60H657M776,1013.60H1423M1542,1013.60H2208M69,1041.60H657M776,1041.60H1423M1542,1041.60H2208M69,1069.60H657M776,1069.60H1423M1542,1069.60H2208M69,1097.60H657M776,1097.60H1423M1542,1097.60H2208M69,1125.60H657M776,1125.60H1423M1542,1125.60H2208M69,1153.60H657M776,1153.60H1423M1542,1153.60H2208M69,1181.60H657M776,1181.60H1423M1542,1181.60H2208M69,1209.60H657M776,1209.60H1423M1542,1209.60H2208M69,1237.60H657M776,1237.60H1423M1542,1237.60H2208M69,1265.60H657M776,1265.60H1423M1542,1265.60H2208M69,1293.60H657M776,1293.60H1423M1542,1293.60H2208M69,1321.60H657M776,1321.60H1423M1542,1321.60H2208M69,1349.60H657M776,1349.60H1423M1542,1349.60H2208M69,1377.60H657M776,1377.60H1423M1542,1377.60H2208M69,1405.60H657M776,1405.60H1423M1542,1405.60H2208M69,1433.60H657M776,1433.60H1423M1542,1433.60H2208M69,1461.60H657M776,1461.60H1423M1542,1461.60H2208M69,1489.60H657M776,1489.60H1423M1542,1489.60H2208" stroke="#000" stroke-width="1.4" stroke-dasharray="2 2" fill="none"/></svg>
<div style="position:absolute;left:406.0px;top:359px;width:2.0px;height:1131px;background:#000;"></div>
<div style="position:absolute;left:774.0px;top:397px;width:2.0px;height:1093px;background:#000;"></div>
<div style="position:absolute;left:1079.0px;top:397px;width:2.0px;height:1093px;background:#000;"></div>
<div style="position:absolute;left:1540.0px;top:397px;width:2.0px;height:1093px;background:#000;"></div>
<div style="position:absolute;left:1845.0px;top:397px;width:2.0px;height:1093px;background:#000;"></div>
<div style="position:absolute;left:1253.0px;top:397px;width:2.0px;height:29px;background:#000;"></div>
<div style="position:absolute;left:2037.0px;top:397px;width:2.0px;height:29px;background:#000;"></div>
<div style="position:absolute;left:66px;top:425.0px;width:597px;height:2.0px;background:#000;"></div>
<div style="position:absolute;left:745px;top:425.0px;width:684px;height:2.0px;background:#000;"></div>
<div style="position:absolute;left:1511px;top:425.0px;width:703px;height:2.0px;background:#000;"></div>
<div style="position:absolute;left:66px;top:308px;width:3px;height:1182px;background:#000;"></div>
<div style="position:absolute;left:66px;top:356.0px;width:597px;height:6.0px;background:#000;"></div>
<div style="position:absolute;left:66px;top:394.0px;width:597px;height:6.0px;background:#000;"></div>
<div style="position:absolute;left:772px;top:356.0px;width:657px;height:6.0px;background:#000;"></div>
<div style="position:absolute;left:745px;top:394.0px;width:684px;height:6.0px;background:#000;"></div>
<div style="position:absolute;left:1538px;top:356.0px;width:676px;height:6.0px;background:#000;"></div>
<div style="position:absolute;left:1511px;top:394.0px;width:703px;height:6.0px;background:#000;"></div>
<div style="position:absolute;left:657.0px;top:356px;width:6.0px;height:1134px;background:#000;"></div>
<div style="position:absolute;left:772.0px;top:356px;width:6.0px;height:44px;background:#000;"></div>
<div style="position:absolute;left:745.0px;top:394px;width:6.0px;height:1096px;background:#000;"></div>
<div style="position:absolute;left:1423.0px;top:356px;width:6.0px;height:1134px;background:#000;"></div>
<div style="position:absolute;left:1538.0px;top:356px;width:6.0px;height:44px;background:#000;"></div>
<div style="position:absolute;left:1511.0px;top:394px;width:6.0px;height:1096px;background:#000;"></div>
<div style="position:absolute;left:2208.0px;top:356px;width:6.0px;height:1134px;background:#000;"></div>
<div style="position:absolute;left:0px;top:425.5px;width:2388px;height:1.5px;background:#4A4A4A;opacity:0.9"></div>
<div style="position:absolute;top:316.68px;font-size:37px;line-height:37px;white-space:nowrap;color:#fff;font-weight:bold;left:72.50px;">Calc Sheet</div>
<div style="position:absolute;top:374.66px;font-size:17.3px;line-height:17.3px;white-space:nowrap;color:#000;font-weight:bold;text-decoration:underline;text-decoration-thickness:1.6px;text-underline-offset:1.5px;text-decoration-skip-ink:none;left:71.00px;">Description</div>
<div style="position:absolute;top:370.68px;font-size:22px;line-height:22px;white-space:nowrap;color:#000;font-weight:bold;text-decoration:underline;text-decoration-thickness:1.6px;text-underline-offset:1.5px;text-decoration-skip-ink:none;left:412.00px;">Length</div>
<div style="position:absolute;top:370.68px;font-size:22px;line-height:22px;white-space:nowrap;color:#000;font-weight:bold;text-decoration:underline;text-decoration-thickness:1.6px;text-underline-offset:1.5px;text-decoration-skip-ink:none;left:780.00px;">Area</div>
<div style="position:absolute;top:374.66px;font-size:17.3px;line-height:17.3px;white-space:nowrap;color:#000;font-weight:bold;text-decoration:underline;text-decoration-thickness:1.6px;text-underline-offset:1.5px;text-decoration-skip-ink:none;left:1085.00px;">square feet</div>
<div style="position:absolute;top:374.66px;font-size:17.3px;line-height:17.3px;white-space:nowrap;color:#000;font-weight:bold;text-decoration:underline;text-decoration-thickness:1.6px;text-underline-offset:1.5px;text-decoration-skip-ink:none;left:1259.00px;">square yards</div>
<div style="position:absolute;top:369.83px;font-size:23px;line-height:23px;white-space:nowrap;color:#000;font-weight:bold;text-decoration:underline;text-decoration-thickness:1.6px;text-underline-offset:1.5px;text-decoration-skip-ink:none;left:1546.00px;">Volume</div>
<div style="position:absolute;top:374.66px;font-size:17.3px;line-height:17.3px;white-space:nowrap;color:#000;font-weight:bold;text-decoration:underline;text-decoration-thickness:1.6px;text-underline-offset:1.5px;text-decoration-skip-ink:none;left:1642.00px;width:600px;text-align:center;">cubic feet</div>
<div style="position:absolute;top:374.66px;font-size:17.3px;line-height:17.3px;white-space:nowrap;color:#000;font-weight:bold;text-decoration:underline;text-decoration-thickness:1.6px;text-underline-offset:1.5px;text-decoration-skip-ink:none;left:1825.00px;width:600px;text-align:center;">cubic yards</div>
<div style="position:absolute;top:405.19px;font-size:17.5px;line-height:17.5px;white-space:nowrap;color:#000;font-weight:bold;left:-63.50px;width:600px;text-align:center;transform:scaleX(0.91);transform-origin:center 0;">TOTALS LINE</div>
<div style="position:absolute;top:403.49px;font-size:19.5px;line-height:19.5px;white-space:nowrap;color:#000;font-weight:bold;right:1897.30px;">268</div>
<div style="position:absolute;top:403.49px;font-size:19.5px;line-height:19.5px;white-space:nowrap;color:#000;font-weight:bold;left:221.00px;width:600px;text-align:center;">ft</div>
<div style="position:absolute;top:403.49px;font-size:19.5px;line-height:19.5px;white-space:nowrap;color:#000;font-weight:bold;right:1784.30px;">0</div>
<div style="position:absolute;top:403.49px;font-size:19.5px;line-height:19.5px;white-space:nowrap;color:#000;font-weight:bold;left:613.00px;">in</div>
<div style="position:absolute;top:406.58px;font-size:15.5px;line-height:15.5px;white-space:nowrap;color:#000;left:461.50px;width:600px;text-align:center;-webkit-text-stroke:0.1px #000;">x</div>
<div style="position:absolute;top:403.49px;font-size:19.5px;line-height:19.5px;white-space:nowrap;color:#000;font-weight:bold;right:1529.30px;">200</div>
<div style="position:absolute;top:403.49px;font-size:19.5px;line-height:19.5px;white-space:nowrap;color:#000;font-weight:bold;left:589.00px;width:600px;text-align:center;">ft</div>
<div style="position:absolute;top:403.49px;font-size:19.5px;line-height:19.5px;white-space:nowrap;color:#000;font-weight:bold;right:1416.30px;">0</div>
<div style="position:absolute;top:403.49px;font-size:19.5px;line-height:19.5px;white-space:nowrap;color:#000;font-weight:bold;left:981.00px;">in</div>
<div style="position:absolute;top:405.02px;font-size:17.7px;line-height:17.7px;white-space:nowrap;color:#000;left:754.00px;width:600px;text-align:center;-webkit-text-stroke:0.1px #000;">=</div>
<div style="position:absolute;top:403.49px;font-size:19.5px;line-height:19.5px;white-space:nowrap;color:#000;font-weight:bold;right:1185.30px;">53,600.00</div>
<div style="position:absolute;top:403.49px;font-size:19.5px;line-height:19.5px;white-space:nowrap;color:#000;font-weight:bold;left:1212.00px;">sf</div>
<div style="position:absolute;top:403.49px;font-size:19.5px;line-height:19.5px;white-space:nowrap;color:#000;font-weight:bold;right:1012.30px;">5,955.56</div>
<div style="position:absolute;top:403.49px;font-size:19.5px;line-height:19.5px;white-space:nowrap;color:#000;font-weight:bold;left:1385.00px;">sy</div>
<div style="position:absolute;top:406.58px;font-size:15.5px;line-height:15.5px;white-space:nowrap;color:#000;left:1227.50px;width:600px;text-align:center;-webkit-text-stroke:0.1px #000;">x</div>
<div style="position:absolute;top:403.49px;font-size:19.5px;line-height:19.5px;white-space:nowrap;color:#000;font-weight:bold;right:763.30px;">14</div>
<div style="position:absolute;top:403.49px;font-size:19.5px;line-height:19.5px;white-space:nowrap;color:#000;font-weight:bold;left:1355.00px;width:600px;text-align:center;">ft</div>
<div style="position:absolute;top:403.49px;font-size:19.5px;line-height:19.5px;white-space:nowrap;color:#000;font-weight:bold;right:650.30px;">2</div>
<div style="position:absolute;top:403.49px;font-size:19.5px;line-height:19.5px;white-space:nowrap;color:#000;font-weight:bold;left:1747.00px;">in</div>
<div style="position:absolute;top:405.02px;font-size:17.7px;line-height:17.7px;white-space:nowrap;color:#000;left:1520.00px;width:600px;text-align:center;-webkit-text-stroke:0.1px #000;">=</div>
<div style="position:absolute;top:403.49px;font-size:19.5px;line-height:19.5px;white-space:nowrap;color:#000;font-weight:bold;right:400.30px;">759,333.33</div>
<div style="position:absolute;top:403.49px;font-size:19.5px;line-height:19.5px;white-space:nowrap;color:#000;font-weight:bold;left:1997.00px;">cf</div>
<div style="position:absolute;top:403.49px;font-size:19.5px;line-height:19.5px;white-space:nowrap;color:#000;font-weight:bold;right:228.30px;">28,123.46</div>
<div style="position:absolute;top:403.49px;font-size:19.5px;line-height:19.5px;white-space:nowrap;color:#000;font-weight:bold;left:2169.00px;">cy</div>
<div style="position:absolute;top:433.82px;font-size:17.7px;line-height:17.7px;white-space:nowrap;color:#000;left:221.00px;width:600px;text-align:center;transform:scaleX(1.12);transform-origin:center 0;-webkit-text-stroke:0.1px #000;">ft</div>
<div style="position:absolute;top:433.82px;font-size:17.7px;line-height:17.7px;white-space:nowrap;color:#000;left:613.00px;-webkit-text-stroke:0.1px #000;">in</div>
<div style="position:absolute;top:435.38px;font-size:15.5px;line-height:15.5px;white-space:nowrap;color:#000;left:461.50px;width:600px;text-align:center;-webkit-text-stroke:0.1px #000;">x</div>
<div style="position:absolute;top:433.82px;font-size:17.7px;line-height:17.7px;white-space:nowrap;color:#000;left:589.00px;width:600px;text-align:center;transform:scaleX(1.12);transform-origin:center 0;-webkit-text-stroke:0.1px #000;">ft</div>
<div style="position:absolute;top:433.82px;font-size:17.7px;line-height:17.7px;white-space:nowrap;color:#000;left:981.00px;-webkit-text-stroke:0.1px #000;">in</div>
<div style="position:absolute;top:433.82px;font-size:17.7px;line-height:17.7px;white-space:nowrap;color:#000;left:754.00px;width:600px;text-align:center;-webkit-text-stroke:0.1px #000;">=</div>
<div style="position:absolute;top:433.82px;font-size:17.7px;line-height:17.7px;white-space:nowrap;color:#000;right:1185.30px;-webkit-text-stroke:0.1px #000;">0.00</div>
<div style="position:absolute;top:433.82px;font-size:17.7px;line-height:17.7px;white-space:nowrap;color:#000;left:1212.00px;-webkit-text-stroke:0.1px #000;">sf</div>
<div style="position:absolute;top:433.82px;font-size:17.7px;line-height:17.7px;white-space:nowrap;color:#000;right:1012.30px;-webkit-text-stroke:0.1px #000;">0.00</div>
<div style="position:absolute;top:433.82px;font-size:17.7px;line-height:17.7px;white-space:nowrap;color:#000;left:1385.00px;-webkit-text-stroke:0.1px #000;">sy</div>
<div style="position:absolute;top:435.38px;font-size:15.5px;line-height:15.5px;white-space:nowrap;color:#000;left:1227.50px;width:600px;text-align:center;-webkit-text-stroke:0.1px #000;">x</div>
<div style="position:absolute;top:433.82px;font-size:17.7px;line-height:17.7px;white-space:nowrap;color:#000;left:1355.00px;width:600px;text-align:center;transform:scaleX(1.12);transform-origin:center 0;-webkit-text-stroke:0.1px #000;">ft</div>
<div style="position:absolute;top:433.82px;font-size:17.7px;line-height:17.7px;white-space:nowrap;color:#000;left:1747.00px;-webkit-text-stroke:0.1px #000;">in</div>
<div style="position:absolute;top:433.82px;font-size:17.7px;line-height:17.7px;white-space:nowrap;color:#000;left:1520.00px;width:600px;text-align:center;-webkit-text-stroke:0.1px #000;">=</div>
<div style="position:absolute;top:433.82px;font-size:17.7px;line-height:17.7px;white-space:nowrap;color:#000;right:400.30px;-webkit-text-stroke:0.1px #000;">0.00</div>
<div style="position:absolute;top:433.82px;font-size:17.7px;line-height:17.7px;white-space:nowrap;color:#000;left:1997.00px;-webkit-text-stroke:0.1px #000;">cf</div>
<div style="position:absolute;top:433.82px;font-size:17.7px;line-height:17.7px;white-space:nowrap;color:#000;right:228.30px;-webkit-text-stroke:0.1px #000;">0.00</div>
<div style="position:absolute;top:433.82px;font-size:17.7px;line-height:17.7px;white-space:nowrap;color:#000;left:2169.00px;-webkit-text-stroke:0.1px #000;">cy</div>
<div style="position:absolute;top:461.82px;font-size:17.7px;line-height:17.7px;white-space:nowrap;color:#000;left:-208.00px;width:600px;text-align:center;-webkit-text-stroke:0.1px #000;">1</div>
<div style="position:absolute;top:461.82px;font-size:17.7px;line-height:17.7px;white-space:nowrap;color:#000;left:124.00px;transform:scaleX(1.055);transform-origin:left 0;-webkit-text-stroke:0.1px #000;">Front Wall</div>
<div style="position:absolute;top:461.82px;font-size:17.7px;line-height:17.7px;white-space:nowrap;color:#000;right:1897.30px;-webkit-text-stroke:0.1px #000;">10</div>
<div style="position:absolute;top:461.82px;font-size:17.7px;line-height:17.7px;white-space:nowrap;color:#000;left:221.00px;width:600px;text-align:center;transform:scaleX(1.12);transform-origin:center 0;-webkit-text-stroke:0.1px #000;">ft</div>
<div style="position:absolute;top:461.82px;font-size:17.7px;line-height:17.7px;white-space:nowrap;color:#000;right:1784.30px;-webkit-text-stroke:0.1px #000;">6</div>
<div style="position:absolute;top:461.82px;font-size:17.7px;line-height:17.7px;white-space:nowrap;color:#000;left:613.00px;-webkit-text-stroke:0.1px #000;">in</div>
<div style="position:absolute;top:463.38px;font-size:15.5px;line-height:15.5px;white-space:nowrap;color:#000;left:461.50px;width:600px;text-align:center;-webkit-text-stroke:0.1px #000;">x</div>
<div style="position:absolute;top:461.82px;font-size:17.7px;line-height:17.7px;white-space:nowrap;color:#000;right:1529.30px;-webkit-text-stroke:0.1px #000;">10</div>
<div style="position:absolute;top:461.82px;font-size:17.7px;line-height:17.7px;white-space:nowrap;color:#000;left:589.00px;width:600px;text-align:center;transform:scaleX(1.12);transform-origin:center 0;-webkit-text-stroke:0.1px #000;">ft</div>
<div style="position:absolute;top:461.82px;font-size:17.7px;line-height:17.7px;white-space:nowrap;color:#000;left:981.00px;-webkit-text-stroke:0.1px #000;">in</div>
<div style="position:absolute;top:461.82px;font-size:17.7px;line-height:17.7px;white-space:nowrap;color:#000;left:754.00px;width:600px;text-align:center;-webkit-text-stroke:0.1px #000;">=</div>
<div style="position:absolute;top:461.82px;font-size:17.7px;line-height:17.7px;white-space:nowrap;color:#000;right:1185.30px;-webkit-text-stroke:0.1px #000;">105.00</div>
<div style="position:absolute;top:461.82px;font-size:17.7px;line-height:17.7px;white-space:nowrap;color:#000;left:1212.00px;-webkit-text-stroke:0.1px #000;">sf</div>
<div style="position:absolute;top:461.82px;font-size:17.7px;line-height:17.7px;white-space:nowrap;color:#000;right:1012.30px;-webkit-text-stroke:0.1px #000;">11.67</div>
<div style="position:absolute;top:461.82px;font-size:17.7px;line-height:17.7px;white-space:nowrap;color:#000;left:1385.00px;-webkit-text-stroke:0.1px #000;">sy</div>
<div style="position:absolute;top:463.38px;font-size:15.5px;line-height:15.5px;white-space:nowrap;color:#000;left:1227.50px;width:600px;text-align:center;-webkit-text-stroke:0.1px #000;">x</div>
<div style="position:absolute;top:461.82px;font-size:17.7px;line-height:17.7px;white-space:nowrap;color:#000;left:1355.00px;width:600px;text-align:center;transform:scaleX(1.12);transform-origin:center 0;-webkit-text-stroke:0.1px #000;">ft</div>
<div style="position:absolute;top:461.82px;font-size:17.7px;line-height:17.7px;white-space:nowrap;color:#000;right:650.30px;-webkit-text-stroke:0.1px #000;">10</div>
<div style="position:absolute;top:461.82px;font-size:17.7px;line-height:17.7px;white-space:nowrap;color:#000;left:1747.00px;-webkit-text-stroke:0.1px #000;">in</div>
<div style="position:absolute;top:461.82px;font-size:17.7px;line-height:17.7px;white-space:nowrap;color:#000;left:1520.00px;width:600px;text-align:center;-webkit-text-stroke:0.1px #000;">=</div>
<div style="position:absolute;top:461.82px;font-size:17.7px;line-height:17.7px;white-space:nowrap;color:#000;right:400.30px;-webkit-text-stroke:0.1px #000;">87.50</div>
<div style="position:absolute;top:461.82px;font-size:17.7px;line-height:17.7px;white-space:nowrap;color:#000;left:1997.00px;-webkit-text-stroke:0.1px #000;">cf</div>
<div style="position:absolute;top:461.82px;font-size:17.7px;line-height:17.7px;white-space:nowrap;color:#000;right:228.30px;-webkit-text-stroke:0.1px #000;">3.24</div>
<div style="position:absolute;top:461.82px;font-size:17.7px;line-height:17.7px;white-space:nowrap;color:#000;left:2169.00px;-webkit-text-stroke:0.1px #000;">cy</div>
<div style="position:absolute;top:489.82px;font-size:17.7px;line-height:17.7px;white-space:nowrap;color:#000;left:-208.00px;width:600px;text-align:center;-webkit-text-stroke:0.1px #000;">2</div>
<div style="position:absolute;top:489.82px;font-size:17.7px;line-height:17.7px;white-space:nowrap;color:#000;right:1897.30px;-webkit-text-stroke:0.1px #000;">8</div>
<div style="position:absolute;top:489.82px;font-size:17.7px;line-height:17.7px;white-space:nowrap;color:#000;left:221.00px;width:600px;text-align:center;transform:scaleX(1.12);transform-origin:center 0;-webkit-text-stroke:0.1px #000;">ft</div>
<div style="position:absolute;top:489.82px;font-size:17.7px;line-height:17.7px;white-space:nowrap;color:#000;right:1784.30px;-webkit-text-stroke:0.1px #000;">9</div>
<div style="position:absolute;top:489.82px;font-size:17.7px;line-height:17.7px;white-space:nowrap;color:#000;left:613.00px;-webkit-text-stroke:0.1px #000;">in</div>
<div style="position:absolute;top:491.38px;font-size:15.5px;line-height:15.5px;white-space:nowrap;color:#000;left:461.50px;width:600px;text-align:center;-webkit-text-stroke:0.1px #000;">x</div>
<div style="position:absolute;top:489.82px;font-size:17.7px;line-height:17.7px;white-space:nowrap;color:#000;right:1529.30px;-webkit-text-stroke:0.1px #000;">10</div>
<div style="position:absolute;top:489.82px;font-size:17.7px;line-height:17.7px;white-space:nowrap;color:#000;left:589.00px;width:600px;text-align:center;transform:scaleX(1.12);transform-origin:center 0;-webkit-text-stroke:0.1px #000;">ft</div>
<div style="position:absolute;top:489.82px;font-size:17.7px;line-height:17.7px;white-space:nowrap;color:#000;left:981.00px;-webkit-text-stroke:0.1px #000;">in</div>
<div style="position:absolute;top:489.82px;font-size:17.7px;line-height:17.7px;white-space:nowrap;color:#000;left:754.00px;width:600px;text-align:center;-webkit-text-stroke:0.1px #000;">=</div>
<div style="position:absolute;top:489.82px;font-size:17.7px;line-height:17.7px;white-space:nowrap;color:#000;right:1185.30px;-webkit-text-stroke:0.1px #000;">87.50</div>
<div style="position:absolute;top:489.82px;font-size:17.7px;line-height:17.7px;white-space:nowrap;color:#000;left:1212.00px;-webkit-text-stroke:0.1px #000;">sf</div>
<div style="position:absolute;top:489.82px;font-size:17.7px;line-height:17.7px;white-space:nowrap;color:#000;right:1012.30px;-webkit-text-stroke:0.1px #000;">9.72</div>
<div style="position:absolute;top:489.82px;font-size:17.7px;line-height:17.7px;white-space:nowrap;color:#000;left:1385.00px;-webkit-text-stroke:0.1px #000;">sy</div>
<div style="position:absolute;top:491.38px;font-size:15.5px;line-height:15.5px;white-space:nowrap;color:#000;left:1227.50px;width:600px;text-align:center;-webkit-text-stroke:0.1px #000;">x</div>
<div style="position:absolute;top:489.82px;font-size:17.7px;line-height:17.7px;white-space:nowrap;color:#000;left:1355.00px;width:600px;text-align:center;transform:scaleX(1.12);transform-origin:center 0;-webkit-text-stroke:0.1px #000;">ft</div>
<div style="position:absolute;top:489.82px;font-size:17.7px;line-height:17.7px;white-space:nowrap;color:#000;right:650.30px;-webkit-text-stroke:0.1px #000;">10</div>
<div style="position:absolute;top:489.82px;font-size:17.7px;line-height:17.7px;white-space:nowrap;color:#000;left:1747.00px;-webkit-text-stroke:0.1px #000;">in</div>
<div style="position:absolute;top:489.82px;font-size:17.7px;line-height:17.7px;white-space:nowrap;color:#000;left:1520.00px;width:600px;text-align:center;-webkit-text-stroke:0.1px #000;">=</div>
<div style="position:absolute;top:489.82px;font-size:17.7px;line-height:17.7px;white-space:nowrap;color:#000;right:400.30px;-webkit-text-stroke:0.1px #000;">72.92</div>
<div style="position:absolute;top:489.82px;font-size:17.7px;line-height:17.7px;white-space:nowrap;color:#000;left:1997.00px;-webkit-text-stroke:0.1px #000;">cf</div>
<div style="position:absolute;top:489.82px;font-size:17.7px;line-height:17.7px;white-space:nowrap;color:#000;right:228.30px;-webkit-text-stroke:0.1px #000;">2.70</div>
<div style="position:absolute;top:489.82px;font-size:17.7px;line-height:17.7px;white-space:nowrap;color:#000;left:2169.00px;-webkit-text-stroke:0.1px #000;">cy</div>
<div style="position:absolute;top:517.82px;font-size:17.7px;line-height:17.7px;white-space:nowrap;color:#000;left:-208.00px;width:600px;text-align:center;-webkit-text-stroke:0.1px #000;">3</div>
<div style="position:absolute;top:517.82px;font-size:17.7px;line-height:17.7px;white-space:nowrap;color:#000;right:1897.30px;-webkit-text-stroke:0.1px #000;">6</div>
<div style="position:absolute;top:517.82px;font-size:17.7px;line-height:17.7px;white-space:nowrap;color:#000;left:221.00px;width:600px;text-align:center;transform:scaleX(1.12);transform-origin:center 0;-webkit-text-stroke:0.1px #000;">ft</div>
<div style="position:absolute;top:517.82px;font-size:17.7px;line-height:17.7px;white-space:nowrap;color:#000;right:1784.30px;-webkit-text-stroke:0.1px #000;">0</div>
<div style="position:absolute;top:517.82px;font-size:17.7px;line-height:17.7px;white-space:nowrap;color:#000;left:613.00px;-webkit-text-stroke:0.1px #000;">in</div>
<div style="position:absolute;top:519.38px;font-size:15.5px;line-height:15.5px;white-space:nowrap;color:#000;left:461.50px;width:600px;text-align:center;-webkit-text-stroke:0.1px #000;">x</div>
<div style="position:absolute;top:517.82px;font-size:17.7px;line-height:17.7px;white-space:nowrap;color:#000;right:1529.30px;-webkit-text-stroke:0.1px #000;">10</div>
<div style="position:absolute;top:517.82px;font-size:17.7px;line-height:17.7px;white-space:nowrap;color:#000;left:589.00px;width:600px;text-align:center;transform:scaleX(1.12);transform-origin:center 0;-webkit-text-stroke:0.1px #000;">ft</div>
<div style="position:absolute;top:517.82px;font-size:17.7px;line-height:17.7px;white-space:nowrap;color:#000;left:981.00px;-webkit-text-stroke:0.1px #000;">in</div>
<div style="position:absolute;top:517.82px;font-size:17.7px;line-height:17.7px;white-space:nowrap;color:#000;left:754.00px;width:600px;text-align:center;-webkit-text-stroke:0.1px #000;">=</div>
<div style="position:absolute;top:517.82px;font-size:17.7px;line-height:17.7px;white-space:nowrap;color:#000;right:1185.30px;-webkit-text-stroke:0.1px #000;">60.00</div>
<div style="position:absolute;top:517.82px;font-size:17.7px;line-height:17.7px;white-space:nowrap;color:#000;left:1212.00px;-webkit-text-stroke:0.1px #000;">sf</div>
<div style="position:absolute;top:517.82px;font-size:17.7px;line-height:17.7px;white-space:nowrap;color:#000;right:1012.30px;-webkit-text-stroke:0.1px #000;">6.67</div>
<div style="position:absolute;top:517.82px;font-size:17.7px;line-height:17.7px;white-space:nowrap;color:#000;left:1385.00px;-webkit-text-stroke:0.1px #000;">sy</div>
<div style="position:absolute;top:519.38px;font-size:15.5px;line-height:15.5px;white-space:nowrap;color:#000;left:1227.50px;width:600px;text-align:center;-webkit-text-stroke:0.1px #000;">x</div>
<div style="position:absolute;top:517.82px;font-size:17.7px;line-height:17.7px;white-space:nowrap;color:#000;left:1355.00px;width:600px;text-align:center;transform:scaleX(1.12);transform-origin:center 0;-webkit-text-stroke:0.1px #000;">ft</div>
<div style="position:absolute;top:517.82px;font-size:17.7px;line-height:17.7px;white-space:nowrap;color:#000;right:650.30px;-webkit-text-stroke:0.1px #000;">10</div>
<div style="position:absolute;top:517.82px;font-size:17.7px;line-height:17.7px;white-space:nowrap;color:#000;left:1747.00px;-webkit-text-stroke:0.1px #000;">in</div>
<div style="position:absolute;top:517.82px;font-size:17.7px;line-height:17.7px;white-space:nowrap;color:#000;left:1520.00px;width:600px;text-align:center;-webkit-text-stroke:0.1px #000;">=</div>
<div style="position:absolute;top:517.82px;font-size:17.7px;line-height:17.7px;white-space:nowrap;color:#000;right:400.30px;-webkit-text-stroke:0.1px #000;">50.00</div>
<div style="position:absolute;top:517.82px;font-size:17.7px;line-height:17.7px;white-space:nowrap;color:#000;left:1997.00px;-webkit-text-stroke:0.1px #000;">cf</div>
<div style="position:absolute;top:517.82px;font-size:17.7px;line-height:17.7px;white-space:nowrap;color:#000;right:228.30px;-webkit-text-stroke:0.1px #000;">1.85</div>
<div style="position:absolute;top:517.82px;font-size:17.7px;line-height:17.7px;white-space:nowrap;color:#000;left:2169.00px;-webkit-text-stroke:0.1px #000;">cy</div>
<div style="position:absolute;top:545.82px;font-size:17.7px;line-height:17.7px;white-space:nowrap;color:#000;left:-208.00px;width:600px;text-align:center;-webkit-text-stroke:0.1px #000;">4</div>
<div style="position:absolute;top:545.82px;font-size:17.7px;line-height:17.7px;white-space:nowrap;color:#000;right:1897.30px;-webkit-text-stroke:0.1px #000;">8</div>
<div style="position:absolute;top:545.82px;font-size:17.7px;line-height:17.7px;white-space:nowrap;color:#000;left:221.00px;width:600px;text-align:center;transform:scaleX(1.12);transform-origin:center 0;-webkit-text-stroke:0.1px #000;">ft</div>
<div style="position:absolute;top:545.82px;font-size:17.7px;line-height:17.7px;white-space:nowrap;color:#000;right:1784.30px;-webkit-text-stroke:0.1px #000;">9</div>
<div style="position:absolute;top:545.82px;font-size:17.7px;line-height:17.7px;white-space:nowrap;color:#000;left:613.00px;-webkit-text-stroke:0.1px #000;">in</div>
<div style="position:absolute;top:547.38px;font-size:15.5px;line-height:15.5px;white-space:nowrap;color:#000;left:461.50px;width:600px;text-align:center;-webkit-text-stroke:0.1px #000;">x</div>
<div style="position:absolute;top:545.82px;font-size:17.7px;line-height:17.7px;white-space:nowrap;color:#000;right:1529.30px;-webkit-text-stroke:0.1px #000;">10</div>
<div style="position:absolute;top:545.82px;font-size:17.7px;line-height:17.7px;white-space:nowrap;color:#000;left:589.00px;width:600px;text-align:center;transform:scaleX(1.12);transform-origin:center 0;-webkit-text-stroke:0.1px #000;">ft</div>
<div style="position:absolute;top:545.82px;font-size:17.7px;line-height:17.7px;white-space:nowrap;color:#000;left:981.00px;-webkit-text-stroke:0.1px #000;">in</div>
<div style="position:absolute;top:545.82px;font-size:17.7px;line-height:17.7px;white-space:nowrap;color:#000;left:754.00px;width:600px;text-align:center;-webkit-text-stroke:0.1px #000;">=</div>
<div style="position:absolute;top:545.82px;font-size:17.7px;line-height:17.7px;white-space:nowrap;color:#000;right:1185.30px;-webkit-text-stroke:0.1px #000;">87.50</div>
<div style="position:absolute;top:545.82px;font-size:17.7px;line-height:17.7px;white-space:nowrap;color:#000;left:1212.00px;-webkit-text-stroke:0.1px #000;">sf</div>
<div style="position:absolute;top:545.82px;font-size:17.7px;line-height:17.7px;white-space:nowrap;color:#000;right:1012.30px;-webkit-text-stroke:0.1px #000;">9.72</div>
<div style="position:absolute;top:545.82px;font-size:17.7px;line-height:17.7px;white-space:nowrap;color:#000;left:1385.00px;-webkit-text-stroke:0.1px #000;">sy</div>
<div style="position:absolute;top:547.38px;font-size:15.5px;line-height:15.5px;white-space:nowrap;color:#000;left:1227.50px;width:600px;text-align:center;-webkit-text-stroke:0.1px #000;">x</div>
<div style="position:absolute;top:545.82px;font-size:17.7px;line-height:17.7px;white-space:nowrap;color:#000;left:1355.00px;width:600px;text-align:center;transform:scaleX(1.12);transform-origin:center 0;-webkit-text-stroke:0.1px #000;">ft</div>
<div style="position:absolute;top:545.82px;font-size:17.7px;line-height:17.7px;white-space:nowrap;color:#000;right:650.30px;-webkit-text-stroke:0.1px #000;">10</div>
<div style="position:absolute;top:545.82px;font-size:17.7px;line-height:17.7px;white-space:nowrap;color:#000;left:1747.00px;-webkit-text-stroke:0.1px #000;">in</div>
<div style="position:absolute;top:545.82px;font-size:17.7px;line-height:17.7px;white-space:nowrap;color:#000;left:1520.00px;width:600px;text-align:center;-webkit-text-stroke:0.1px #000;">=</div>
<div style="position:absolute;top:545.82px;font-size:17.7px;line-height:17.7px;white-space:nowrap;color:#000;right:400.30px;-webkit-text-stroke:0.1px #000;">72.92</div>
<div style="position:absolute;top:545.82px;font-size:17.7px;line-height:17.7px;white-space:nowrap;color:#000;left:1997.00px;-webkit-text-stroke:0.1px #000;">cf</div>
<div style="position:absolute;top:545.82px;font-size:17.7px;line-height:17.7px;white-space:nowrap;color:#000;right:228.30px;-webkit-text-stroke:0.1px #000;">2.70</div>
<div style="position:absolute;top:545.82px;font-size:17.7px;line-height:17.7px;white-space:nowrap;color:#000;left:2169.00px;-webkit-text-stroke:0.1px #000;">cy</div>
<div style="position:absolute;top:573.82px;font-size:17.7px;line-height:17.7px;white-space:nowrap;color:#000;left:-208.00px;width:600px;text-align:center;-webkit-text-stroke:0.1px #000;">5</div>
<div style="position:absolute;top:573.82px;font-size:17.7px;line-height:17.7px;white-space:nowrap;color:#000;right:1897.30px;-webkit-text-stroke:0.1px #000;">20</div>
<div style="position:absolute;top:573.82px;font-size:17.7px;line-height:17.7px;white-space:nowrap;color:#000;left:221.00px;width:600px;text-align:center;transform:scaleX(1.12);transform-origin:center 0;-webkit-text-stroke:0.1px #000;">ft</div>
<div style="position:absolute;top:573.82px;font-size:17.7px;line-height:17.7px;white-space:nowrap;color:#000;right:1784.30px;-webkit-text-stroke:0.1px #000;">6</div>
<div style="position:absolute;top:573.82px;font-size:17.7px;line-height:17.7px;white-space:nowrap;color:#000;left:613.00px;-webkit-text-stroke:0.1px #000;">in</div>
<div style="position:absolute;top:575.38px;font-size:15.5px;line-height:15.5px;white-space:nowrap;color:#000;left:461.50px;width:600px;text-align:center;-webkit-text-stroke:0.1px #000;">x</div>
<div style="position:absolute;top:573.82px;font-size:17.7px;line-height:17.7px;white-space:nowrap;color:#000;right:1529.30px;-webkit-text-stroke:0.1px #000;">10</div>
<div style="position:absolute;top:573.82px;font-size:17.7px;line-height:17.7px;white-space:nowrap;color:#000;left:589.00px;width:600px;text-align:center;transform:scaleX(1.12);transform-origin:center 0;-webkit-text-stroke:0.1px #000;">ft</div>
<div style="position:absolute;top:573.82px;font-size:17.7px;line-height:17.7px;white-space:nowrap;color:#000;left:981.00px;-webkit-text-stroke:0.1px #000;">in</div>
<div style="position:absolute;top:573.82px;font-size:17.7px;line-height:17.7px;white-space:nowrap;color:#000;left:754.00px;width:600px;text-align:center;-webkit-text-stroke:0.1px #000;">=</div>
<div style="position:absolute;top:573.82px;font-size:17.7px;line-height:17.7px;white-space:nowrap;color:#000;right:1185.30px;-webkit-text-stroke:0.1px #000;">205.00</div>
<div style="position:absolute;top:573.82px;font-size:17.7px;line-height:17.7px;white-space:nowrap;color:#000;left:1212.00px;-webkit-text-stroke:0.1px #000;">sf</div>
<div style="position:absolute;top:573.82px;font-size:17.7px;line-height:17.7px;white-space:nowrap;color:#000;right:1012.30px;-webkit-text-stroke:0.1px #000;">22.78</div>
<div style="position:absolute;top:573.82px;font-size:17.7px;line-height:17.7px;white-space:nowrap;color:#000;left:1385.00px;-webkit-text-stroke:0.1px #000;">sy</div>
<div style="position:absolute;top:575.38px;font-size:15.5px;line-height:15.5px;white-space:nowrap;color:#000;left:1227.50px;width:600px;text-align:center;-webkit-text-stroke:0.1px #000;">x</div>
<div style="position:absolute;top:573.82px;font-size:17.7px;line-height:17.7px;white-space:nowrap;color:#000;left:1355.00px;width:600px;text-align:center;transform:scaleX(1.12);transform-origin:center 0;-webkit-text-stroke:0.1px #000;">ft</div>
<div style="position:absolute;top:573.82px;font-size:17.7px;line-height:17.7px;white-space:nowrap;color:#000;right:650.30px;-webkit-text-stroke:0.1px #000;">10</div>
<div style="position:absolute;top:573.82px;font-size:17.7px;line-height:17.7px;white-space:nowrap;color:#000;left:1747.00px;-webkit-text-stroke:0.1px #000;">in</div>
<div style="position:absolute;top:573.82px;font-size:17.7px;line-height:17.7px;white-space:nowrap;color:#000;left:1520.00px;width:600px;text-align:center;-webkit-text-stroke:0.1px #000;">=</div>
<div style="position:absolute;top:573.82px;font-size:17.7px;line-height:17.7px;white-space:nowrap;color:#000;right:400.30px;-webkit-text-stroke:0.1px #000;">170.83</div>
<div style="position:absolute;top:573.82px;font-size:17.7px;line-height:17.7px;white-space:nowrap;color:#000;left:1997.00px;-webkit-text-stroke:0.1px #000;">cf</div>
<div style="position:absolute;top:573.82px;font-size:17.7px;line-height:17.7px;white-space:nowrap;color:#000;right:228.30px;-webkit-text-stroke:0.1px #000;">6.33</div>
<div style="position:absolute;top:573.82px;font-size:17.7px;line-height:17.7px;white-space:nowrap;color:#000;left:2169.00px;-webkit-text-stroke:0.1px #000;">cy</div>
<div style="position:absolute;top:601.82px;font-size:17.7px;line-height:17.7px;white-space:nowrap;color:#000;left:-208.00px;width:600px;text-align:center;-webkit-text-stroke:0.1px #000;">6</div>
<div style="position:absolute;top:601.82px;font-size:17.7px;line-height:17.7px;white-space:nowrap;color:#000;right:1897.30px;-webkit-text-stroke:0.1px #000;">8</div>
<div style="position:absolute;top:601.82px;font-size:17.7px;line-height:17.7px;white-space:nowrap;color:#000;left:221.00px;width:600px;text-align:center;transform:scaleX(1.12);transform-origin:center 0;-webkit-text-stroke:0.1px #000;">ft</div>
<div style="position:absolute;top:601.82px;font-size:17.7px;line-height:17.7px;white-space:nowrap;color:#000;right:1784.30px;-webkit-text-stroke:0.1px #000;">9</div>
<div style="position:absolute;top:601.82px;font-size:17.7px;line-height:17.7px;white-space:nowrap;color:#000;left:613.00px;-webkit-text-stroke:0.1px #000;">in</div>
<div style="position:absolute;top:603.38px;font-size:15.5px;line-height:15.5px;white-space:nowrap;color:#000;left:461.50px;width:600px;text-align:center;-webkit-text-stroke:0.1px #000;">x</div>
<div style="position:absolute;top:601.82px;font-size:17.7px;line-height:17.7px;white-space:nowrap;color:#000;right:1529.30px;-webkit-text-stroke:0.1px #000;">10</div>
<div style="position:absolute;top:601.82px;font-size:17.7px;line-height:17.7px;white-space:nowrap;color:#000;left:589.00px;width:600px;text-align:center;transform:scaleX(1.12);transform-origin:center 0;-webkit-text-stroke:0.1px #000;">ft</div>
<div style="position:absolute;top:601.82px;font-size:17.7px;line-height:17.7px;white-space:nowrap;color:#000;left:981.00px;-webkit-text-stroke:0.1px #000;">in</div>
<div style="position:absolute;top:601.82px;font-size:17.7px;line-height:17.7px;white-space:nowrap;color:#000;left:754.00px;width:600px;text-align:center;-webkit-text-stroke:0.1px #000;">=</div>
<div style="position:absolute;top:601.82px;font-size:17.7px;line-height:17.7px;white-space:nowrap;color:#000;right:1185.30px;-webkit-text-stroke:0.1px #000;">87.50</div>
<div style="position:absolute;top:601.82px;font-size:17.7px;line-height:17.7px;white-space:nowrap;color:#000;left:1212.00px;-webkit-text-stroke:0.1px #000;">sf</div>
<div style="position:absolute;top:601.82px;font-size:17.7px;line-height:17.7px;white-space:nowrap;color:#000;right:1012.30px;-webkit-text-stroke:0.1px #000;">9.72</div>
<div style="position:absolute;top:601.82px;font-size:17.7px;line-height:17.7px;white-space:nowrap;color:#000;left:1385.00px;-webkit-text-stroke:0.1px #000;">sy</div>
<div style="position:absolute;top:603.38px;font-size:15.5px;line-height:15.5px;white-space:nowrap;color:#000;left:1227.50px;width:600px;text-align:center;-webkit-text-stroke:0.1px #000;">x</div>
<div style="position:absolute;top:601.82px;font-size:17.7px;line-height:17.7px;white-space:nowrap;color:#000;left:1355.00px;width:600px;text-align:center;transform:scaleX(1.12);transform-origin:center 0;-webkit-text-stroke:0.1px #000;">ft</div>
<div style="position:absolute;top:601.82px;font-size:17.7px;line-height:17.7px;white-space:nowrap;color:#000;right:650.30px;-webkit-text-stroke:0.1px #000;">10</div>
<div style="position:absolute;top:601.82px;font-size:17.7px;line-height:17.7px;white-space:nowrap;color:#000;left:1747.00px;-webkit-text-stroke:0.1px #000;">in</div>
<div style="position:absolute;top:601.82px;font-size:17.7px;line-height:17.7px;white-space:nowrap;color:#000;left:1520.00px;width:600px;text-align:center;-webkit-text-stroke:0.1px #000;">=</div>
<div style="position:absolute;top:601.82px;font-size:17.7px;line-height:17.7px;white-space:nowrap;color:#000;right:400.30px;-webkit-text-stroke:0.1px #000;">72.92</div>
<div style="position:absolute;top:601.82px;font-size:17.7px;line-height:17.7px;white-space:nowrap;color:#000;left:1997.00px;-webkit-text-stroke:0.1px #000;">cf</div>
<div style="position:absolute;top:601.82px;font-size:17.7px;line-height:17.7px;white-space:nowrap;color:#000;right:228.30px;-webkit-text-stroke:0.1px #000;">2.70</div>
<div style="position:absolute;top:601.82px;font-size:17.7px;line-height:17.7px;white-space:nowrap;color:#000;left:2169.00px;-webkit-text-stroke:0.1px #000;">cy</div>
<div style="position:absolute;top:629.82px;font-size:17.7px;line-height:17.7px;white-space:nowrap;color:#000;left:-208.00px;width:600px;text-align:center;-webkit-text-stroke:0.1px #000;">7</div>
<div style="position:absolute;top:629.82px;font-size:17.7px;line-height:17.7px;white-space:nowrap;color:#000;right:1897.30px;-webkit-text-stroke:0.1px #000;">6</div>
<div style="position:absolute;top:629.82px;font-size:17.7px;line-height:17.7px;white-space:nowrap;color:#000;left:221.00px;width:600px;text-align:center;transform:scaleX(1.12);transform-origin:center 0;-webkit-text-stroke:0.1px #000;">ft</div>
<div style="position:absolute;top:629.82px;font-size:17.7px;line-height:17.7px;white-space:nowrap;color:#000;right:1784.30px;-webkit-text-stroke:0.1px #000;">0</div>
<div style="position:absolute;top:629.82px;font-size:17.7px;line-height:17.7px;white-space:nowrap;color:#000;left:613.00px;-webkit-text-stroke:0.1px #000;">in</div>
<div style="position:absolute;top:631.38px;font-size:15.5px;line-height:15.5px;white-space:nowrap;color:#000;left:461.50px;width:600px;text-align:center;-webkit-text-stroke:0.1px #000;">x</div>
<div style="position:absolute;top:629.82px;font-size:17.7px;line-height:17.7px;white-space:nowrap;color:#000;right:1529.30px;-webkit-text-stroke:0.1px #000;">10</div>
<div style="position:absolute;top:629.82px;font-size:17.7px;line-height:17.7px;white-space:nowrap;color:#000;left:589.00px;width:600px;text-align:center;transform:scaleX(1.12);transform-origin:center 0;-webkit-text-stroke:0.1px #000;">ft</div>
<div style="position:absolute;top:629.82px;font-size:17.7px;line-height:17.7px;white-space:nowrap;color:#000;left:981.00px;-webkit-text-stroke:0.1px #000;">in</div>
<div style="position:absolute;top:629.82px;font-size:17.7px;line-height:17.7px;white-space:nowrap;color:#000;left:754.00px;width:600px;text-align:center;-webkit-text-stroke:0.1px #000;">=</div>
<div style="position:absolute;top:629.82px;font-size:17.7px;line-height:17.7px;white-space:nowrap;color:#000;right:1185.30px;-webkit-text-stroke:0.1px #000;">60.00</div>
<div style="position:absolute;top:629.82px;font-size:17.7px;line-height:17.7px;white-space:nowrap;color:#000;left:1212.00px;-webkit-text-stroke:0.1px #000;">sf</div>
<div style="position:absolute;top:629.82px;font-size:17.7px;line-height:17.7px;white-space:nowrap;color:#000;right:1012.30px;-webkit-text-stroke:0.1px #000;">6.67</div>
<div style="position:absolute;top:629.82px;font-size:17.7px;line-height:17.7px;white-space:nowrap;color:#000;left:1385.00px;-webkit-text-stroke:0.1px #000;">sy</div>
<div style="position:absolute;top:631.38px;font-size:15.5px;line-height:15.5px;white-space:nowrap;color:#000;left:1227.50px;width:600px;text-align:center;-webkit-text-stroke:0.1px #000;">x</div>
<div style="position:absolute;top:629.82px;font-size:17.7px;line-height:17.7px;white-space:nowrap;color:#000;left:1355.00px;width:600px;text-align:center;transform:scaleX(1.12);transform-origin:center 0;-webkit-text-stroke:0.1px #000;">ft</div>
<div style="position:absolute;top:629.82px;font-size:17.7px;line-height:17.7px;white-space:nowrap;color:#000;right:650.30px;-webkit-text-stroke:0.1px #000;">10</div>
<div style="position:absolute;top:629.82px;font-size:17.7px;line-height:17.7px;white-space:nowrap;color:#000;left:1747.00px;-webkit-text-stroke:0.1px #000;">in</div>
<div style="position:absolute;top:629.82px;font-size:17.7px;line-height:17.7px;white-space:nowrap;color:#000;left:1520.00px;width:600px;text-align:center;-webkit-text-stroke:0.1px #000;">=</div>
<div style="position:absolute;top:629.82px;font-size:17.7px;line-height:17.7px;white-space:nowrap;color:#000;right:400.30px;-webkit-text-stroke:0.1px #000;">50.00</div>
<div style="position:absolute;top:629.82px;font-size:17.7px;line-height:17.7px;white-space:nowrap;color:#000;left:1997.00px;-webkit-text-stroke:0.1px #000;">cf</div>
<div style="position:absolute;top:629.82px;font-size:17.7px;line-height:17.7px;white-space:nowrap;color:#000;right:228.30px;-webkit-text-stroke:0.1px #000;">1.85</div>
<div style="position:absolute;top:629.82px;font-size:17.7px;line-height:17.7px;white-space:nowrap;color:#000;left:2169.00px;-webkit-text-stroke:0.1px #000;">cy</div>
<div style="position:absolute;top:657.82px;font-size:17.7px;line-height:17.7px;white-space:nowrap;color:#000;left:-208.00px;width:600px;text-align:center;-webkit-text-stroke:0.1px #000;">8</div>
<div style="position:absolute;top:657.82px;font-size:17.7px;line-height:17.7px;white-space:nowrap;color:#000;right:1897.30px;-webkit-text-stroke:0.1px #000;">8</div>
<div style="position:absolute;top:657.82px;font-size:17.7px;line-height:17.7px;white-space:nowrap;color:#000;left:221.00px;width:600px;text-align:center;transform:scaleX(1.12);transform-origin:center 0;-webkit-text-stroke:0.1px #000;">ft</div>
<div style="position:absolute;top:657.82px;font-size:17.7px;line-height:17.7px;white-space:nowrap;color:#000;right:1784.30px;-webkit-text-stroke:0.1px #000;">9</div>
<div style="position:absolute;top:657.82px;font-size:17.7px;line-height:17.7px;white-space:nowrap;color:#000;left:613.00px;-webkit-text-stroke:0.1px #000;">in</div>
<div style="position:absolute;top:659.38px;font-size:15.5px;line-height:15.5px;white-space:nowrap;color:#000;left:461.50px;width:600px;text-align:center;-webkit-text-stroke:0.1px #000;">x</div>
<div style="position:absolute;top:657.82px;font-size:17.7px;line-height:17.7px;white-space:nowrap;color:#000;right:1529.30px;-webkit-text-stroke:0.1px #000;">10</div>
<div style="position:absolute;top:657.82px;font-size:17.7px;line-height:17.7px;white-space:nowrap;color:#000;left:589.00px;width:600px;text-align:center;transform:scaleX(1.12);transform-origin:center 0;-webkit-text-stroke:0.1px #000;">ft</div>
<div style="position:absolute;top:657.82px;font-size:17.7px;line-height:17.7px;white-space:nowrap;color:#000;left:981.00px;-webkit-text-stroke:0.1px #000;">in</div>
<div style="position:absolute;top:657.82px;font-size:17.7px;line-height:17.7px;white-space:nowrap;color:#000;left:754.00px;width:600px;text-align:center;-webkit-text-stroke:0.1px #000;">=</div>
<div style="position:absolute;top:657.82px;font-size:17.7px;line-height:17.7px;white-space:nowrap;color:#000;right:1185.30px;-webkit-text-stroke:0.1px #000;">87.50</div>
<div style="position:absolute;top:657.82px;font-size:17.7px;line-height:17.7px;white-space:nowrap;color:#000;left:1212.00px;-webkit-text-stroke:0.1px #000;">sf</div>
<div style="position:absolute;top:657.82px;font-size:17.7px;line-height:17.7px;white-space:nowrap;color:#000;right:1012.30px;-webkit-text-stroke:0.1px #000;">9.72</div>
<div style="position:absolute;top:657.82px;font-size:17.7px;line-height:17.7px;white-space:nowrap;color:#000;left:1385.00px;-webkit-text-stroke:0.1px #000;">sy</div>
<div style="position:absolute;top:659.38px;font-size:15.5px;line-height:15.5px;white-space:nowrap;color:#000;left:1227.50px;width:600px;text-align:center;-webkit-text-stroke:0.1px #000;">x</div>
<div style="position:absolute;top:657.82px;font-size:17.7px;line-height:17.7px;white-space:nowrap;color:#000;left:1355.00px;width:600px;text-align:center;transform:scaleX(1.12);transform-origin:center 0;-webkit-text-stroke:0.1px #000;">ft</div>
<div style="position:absolute;top:657.82px;font-size:17.7px;line-height:17.7px;white-space:nowrap;color:#000;right:650.30px;-webkit-text-stroke:0.1px #000;">10</div>
<div style="position:absolute;top:657.82px;font-size:17.7px;line-height:17.7px;white-space:nowrap;color:#000;left:1747.00px;-webkit-text-stroke:0.1px #000;">in</div>
<div style="position:absolute;top:657.82px;font-size:17.7px;line-height:17.7px;white-space:nowrap;color:#000;left:1520.00px;width:600px;text-align:center;-webkit-text-stroke:0.1px #000;">=</div>
<div style="position:absolute;top:657.82px;font-size:17.7px;line-height:17.7px;white-space:nowrap;color:#000;right:400.30px;-webkit-text-stroke:0.1px #000;">72.92</div>
<div style="position:absolute;top:657.82px;font-size:17.7px;line-height:17.7px;white-space:nowrap;color:#000;left:1997.00px;-webkit-text-stroke:0.1px #000;">cf</div>
<div style="position:absolute;top:657.82px;font-size:17.7px;line-height:17.7px;white-space:nowrap;color:#000;right:228.30px;-webkit-text-stroke:0.1px #000;">2.70</div>
<div style="position:absolute;top:657.82px;font-size:17.7px;line-height:17.7px;white-space:nowrap;color:#000;left:2169.00px;-webkit-text-stroke:0.1px #000;">cy</div>
<div style="position:absolute;top:685.82px;font-size:17.7px;line-height:17.7px;white-space:nowrap;color:#000;left:-208.00px;width:600px;text-align:center;-webkit-text-stroke:0.1px #000;">9</div>
<div style="position:absolute;top:685.82px;font-size:17.7px;line-height:17.7px;white-space:nowrap;color:#000;right:1897.30px;-webkit-text-stroke:0.1px #000;">10</div>
<div style="position:absolute;top:685.82px;font-size:17.7px;line-height:17.7px;white-space:nowrap;color:#000;left:221.00px;width:600px;text-align:center;transform:scaleX(1.12);transform-origin:center 0;-webkit-text-stroke:0.1px #000;">ft</div>
<div style="position:absolute;top:685.82px;font-size:17.7px;line-height:17.7px;white-space:nowrap;color:#000;right:1784.30px;-webkit-text-stroke:0.1px #000;">6</div>
<div style="position:absolute;top:685.82px;font-size:17.7px;line-height:17.7px;white-space:nowrap;color:#000;left:613.00px;-webkit-text-stroke:0.1px #000;">in</div>
<div style="position:absolute;top:687.38px;font-size:15.5px;line-height:15.5px;white-space:nowrap;color:#000;left:461.50px;width:600px;text-align:center;-webkit-text-stroke:0.1px #000;">x</div>
<div style="position:absolute;top:685.82px;font-size:17.7px;line-height:17.7px;white-space:nowrap;color:#000;right:1529.30px;-webkit-text-stroke:0.1px #000;">10</div>
<div style="position:absolute;top:685.82px;font-size:17.7px;line-height:17.7px;white-space:nowrap;color:#000;left:589.00px;width:600px;text-align:center;transform:scaleX(1.12);transform-origin:center 0;-webkit-text-stroke:0.1px #000;">ft</div>
<div style="position:absolute;top:685.82px;font-size:17.7px;line-height:17.7px;white-space:nowrap;color:#000;left:981.00px;-webkit-text-stroke:0.1px #000;">in</div>
<div style="position:absolute;top:685.82px;font-size:17.7px;line-height:17.7px;white-space:nowrap;color:#000;left:754.00px;width:600px;text-align:center;-webkit-text-stroke:0.1px #000;">=</div>
<div style="position:absolute;top:685.82px;font-size:17.7px;line-height:17.7px;white-space:nowrap;color:#000;right:1185.30px;-webkit-text-stroke:0.1px #000;">105.00</div>
<div style="position:absolute;top:685.82px;font-size:17.7px;line-height:17.7px;white-space:nowrap;color:#000;left:1212.00px;-webkit-text-stroke:0.1px #000;">sf</div>
<div style="position:absolute;top:685.82px;font-size:17.7px;line-height:17.7px;white-space:nowrap;color:#000;right:1012.30px;-webkit-text-stroke:0.1px #000;">11.67</div>
<div style="position:absolute;top:685.82px;font-size:17.7px;line-height:17.7px;white-space:nowrap;color:#000;left:1385.00px;-webkit-text-stroke:0.1px #000;">sy</div>
<div style="position:absolute;top:687.38px;font-size:15.5px;line-height:15.5px;white-space:nowrap;color:#000;left:1227.50px;width:600px;text-align:center;-webkit-text-stroke:0.1px #000;">x</div>
<div style="position:absolute;top:685.82px;font-size:17.7px;line-height:17.7px;white-space:nowrap;color:#000;left:1355.00px;width:600px;text-align:center;transform:scaleX(1.12);transform-origin:center 0;-webkit-text-stroke:0.1px #000;">ft</div>
<div style="position:absolute;top:685.82px;font-size:17.7px;line-height:17.7px;white-space:nowrap;color:#000;right:650.30px;-webkit-text-stroke:0.1px #000;">10</div>
<div style="position:absolute;top:685.82px;font-size:17.7px;line-height:17.7px;white-space:nowrap;color:#000;left:1747.00px;-webkit-text-stroke:0.1px #000;">in</div>
<div style="position:absolute;top:685.82px;font-size:17.7px;line-height:17.7px;white-space:nowrap;color:#000;left:1520.00px;width:600px;text-align:center;-webkit-text-stroke:0.1px #000;">=</div>
<div style="position:absolute;top:685.82px;font-size:17.7px;line-height:17.7px;white-space:nowrap;color:#000;right:400.30px;-webkit-text-stroke:0.1px #000;">87.50</div>
<div style="position:absolute;top:685.82px;font-size:17.7px;line-height:17.7px;white-space:nowrap;color:#000;left:1997.00px;-webkit-text-stroke:0.1px #000;">cf</div>
<div style="position:absolute;top:685.82px;font-size:17.7px;line-height:17.7px;white-space:nowrap;color:#000;right:228.30px;-webkit-text-stroke:0.1px #000;">3.24</div>
<div style="position:absolute;top:685.82px;font-size:17.7px;line-height:17.7px;white-space:nowrap;color:#000;left:2169.00px;-webkit-text-stroke:0.1px #000;">cy</div>
<div style="position:absolute;top:713.82px;font-size:17.7px;line-height:17.7px;white-space:nowrap;color:#000;left:-208.00px;width:600px;text-align:center;-webkit-text-stroke:0.1px #000;">10</div>
<div style="position:absolute;top:713.82px;font-size:17.7px;line-height:17.7px;white-space:nowrap;color:#000;left:221.00px;width:600px;text-align:center;transform:scaleX(1.12);transform-origin:center 0;-webkit-text-stroke:0.1px #000;">ft</div>
<div style="position:absolute;top:713.82px;font-size:17.7px;line-height:17.7px;white-space:nowrap;color:#000;left:613.00px;-webkit-text-stroke:0.1px #000;">in</div>
<div style="position:absolute;top:715.38px;font-size:15.5px;line-height:15.5px;white-space:nowrap;color:#000;left:461.50px;width:600px;text-align:center;-webkit-text-stroke:0.1px #000;">x</div>
<div style="position:absolute;top:713.82px;font-size:17.7px;line-height:17.7px;white-space:nowrap;color:#000;left:589.00px;width:600px;text-align:center;transform:scaleX(1.12);transform-origin:center 0;-webkit-text-stroke:0.1px #000;">ft</div>
<div style="position:absolute;top:713.82px;font-size:17.7px;line-height:17.7px;white-space:nowrap;color:#000;left:981.00px;-webkit-text-stroke:0.1px #000;">in</div>
<div style="position:absolute;top:713.82px;font-size:17.7px;line-height:17.7px;white-space:nowrap;color:#000;left:754.00px;width:600px;text-align:center;-webkit-text-stroke:0.1px #000;">=</div>
<div style="position:absolute;top:713.82px;font-size:17.7px;line-height:17.7px;white-space:nowrap;color:#000;right:1185.30px;-webkit-text-stroke:0.1px #000;">0.00</div>
<div style="position:absolute;top:713.82px;font-size:17.7px;line-height:17.7px;white-space:nowrap;color:#000;left:1212.00px;-webkit-text-stroke:0.1px #000;">sf</div>
<div style="position:absolute;top:713.82px;font-size:17.7px;line-height:17.7px;white-space:nowrap;color:#000;right:1012.30px;-webkit-text-stroke:0.1px #000;">0.00</div>
<div style="position:absolute;top:713.82px;font-size:17.7px;line-height:17.7px;white-space:nowrap;color:#000;left:1385.00px;-webkit-text-stroke:0.1px #000;">sy</div>
<div style="position:absolute;top:715.38px;font-size:15.5px;line-height:15.5px;white-space:nowrap;color:#000;left:1227.50px;width:600px;text-align:center;-webkit-text-stroke:0.1px #000;">x</div>
<div style="position:absolute;top:713.82px;font-size:17.7px;line-height:17.7px;white-space:nowrap;color:#000;left:1355.00px;width:600px;text-align:center;transform:scaleX(1.12);transform-origin:center 0;-webkit-text-stroke:0.1px #000;">ft</div>
<div style="position:absolute;top:713.82px;font-size:17.7px;line-height:17.7px;white-space:nowrap;color:#000;left:1747.00px;-webkit-text-stroke:0.1px #000;">in</div>
<div style="position:absolute;top:713.82px;font-size:17.7px;line-height:17.7px;white-space:nowrap;color:#000;left:1520.00px;width:600px;text-align:center;-webkit-text-stroke:0.1px #000;">=</div>
<div style="position:absolute;top:713.82px;font-size:17.7px;line-height:17.7px;white-space:nowrap;color:#000;right:400.30px;-webkit-text-stroke:0.1px #000;">0.00</div>
<div style="position:absolute;top:713.82px;font-size:17.7px;line-height:17.7px;white-space:nowrap;color:#000;left:1997.00px;-webkit-text-stroke:0.1px #000;">cf</div>
<div style="position:absolute;top:713.82px;font-size:17.7px;line-height:17.7px;white-space:nowrap;color:#000;right:228.30px;-webkit-text-stroke:0.1px #000;">0.00</div>
<div style="position:absolute;top:713.82px;font-size:17.7px;line-height:17.7px;white-space:nowrap;color:#000;left:2169.00px;-webkit-text-stroke:0.1px #000;">cy</div>
<div style="position:absolute;top:741.82px;font-size:17.7px;line-height:17.7px;white-space:nowrap;color:#000;left:-208.00px;width:600px;text-align:center;-webkit-text-stroke:0.1px #000;">11</div>
<div style="position:absolute;top:741.82px;font-size:17.7px;line-height:17.7px;white-space:nowrap;color:#000;left:124.00px;transform:scaleX(1.055);transform-origin:left 0;-webkit-text-stroke:0.1px #000;">East Wall</div>
<div style="position:absolute;top:741.82px;font-size:17.7px;line-height:17.7px;white-space:nowrap;color:#000;right:1897.30px;-webkit-text-stroke:0.1px #000;">30</div>
<div style="position:absolute;top:741.82px;font-size:17.7px;line-height:17.7px;white-space:nowrap;color:#000;left:221.00px;width:600px;text-align:center;transform:scaleX(1.12);transform-origin:center 0;-webkit-text-stroke:0.1px #000;">ft</div>
<div style="position:absolute;top:741.82px;font-size:17.7px;line-height:17.7px;white-space:nowrap;color:#000;left:613.00px;-webkit-text-stroke:0.1px #000;">in</div>
<div style="position:absolute;top:743.38px;font-size:15.5px;line-height:15.5px;white-space:nowrap;color:#000;left:461.50px;width:600px;text-align:center;-webkit-text-stroke:0.1px #000;">x</div>
<div style="position:absolute;top:741.82px;font-size:17.7px;line-height:17.7px;white-space:nowrap;color:#000;right:1529.30px;-webkit-text-stroke:0.1px #000;">10</div>
<div style="position:absolute;top:741.82px;font-size:17.7px;line-height:17.7px;white-space:nowrap;color:#000;left:589.00px;width:600px;text-align:center;transform:scaleX(1.12);transform-origin:center 0;-webkit-text-stroke:0.1px #000;">ft</div>
<div style="position:absolute;top:741.82px;font-size:17.7px;line-height:17.7px;white-space:nowrap;color:#000;left:981.00px;-webkit-text-stroke:0.1px #000;">in</div>
<div style="position:absolute;top:741.82px;font-size:17.7px;line-height:17.7px;white-space:nowrap;color:#000;left:754.00px;width:600px;text-align:center;-webkit-text-stroke:0.1px #000;">=</div>
<div style="position:absolute;top:741.82px;font-size:17.7px;line-height:17.7px;white-space:nowrap;color:#000;right:1185.30px;-webkit-text-stroke:0.1px #000;">300.00</div>
<div style="position:absolute;top:741.82px;font-size:17.7px;line-height:17.7px;white-space:nowrap;color:#000;left:1212.00px;-webkit-text-stroke:0.1px #000;">sf</div>
<div style="position:absolute;top:741.82px;font-size:17.7px;line-height:17.7px;white-space:nowrap;color:#000;right:1012.30px;-webkit-text-stroke:0.1px #000;">33.33</div>
<div style="position:absolute;top:741.82px;font-size:17.7px;line-height:17.7px;white-space:nowrap;color:#000;left:1385.00px;-webkit-text-stroke:0.1px #000;">sy</div>
<div style="position:absolute;top:743.38px;font-size:15.5px;line-height:15.5px;white-space:nowrap;color:#000;left:1227.50px;width:600px;text-align:center;-webkit-text-stroke:0.1px #000;">x</div>
<div style="position:absolute;top:741.82px;font-size:17.7px;line-height:17.7px;white-space:nowrap;color:#000;left:1355.00px;width:600px;text-align:center;transform:scaleX(1.12);transform-origin:center 0;-webkit-text-stroke:0.1px #000;">ft</div>
<div style="position:absolute;top:741.82px;font-size:17.7px;line-height:17.7px;white-space:nowrap;color:#000;right:650.30px;-webkit-text-stroke:0.1px #000;">10</div>
<div style="position:absolute;top:741.82px;font-size:17.7px;line-height:17.7px;white-space:nowrap;color:#000;left:1747.00px;-webkit-text-stroke:0.1px #000;">in</div>
<div style="position:absolute;top:741.82px;font-size:17.7px;line-height:17.7px;white-space:nowrap;color:#000;left:1520.00px;width:600px;text-align:center;-webkit-text-stroke:0.1px #000;">=</div>
<div style="position:absolute;top:741.82px;font-size:17.7px;line-height:17.7px;white-space:nowrap;color:#000;right:400.30px;-webkit-text-stroke:0.1px #000;">250.00</div>
<div style="position:absolute;top:741.82px;font-size:17.7px;line-height:17.7px;white-space:nowrap;color:#000;left:1997.00px;-webkit-text-stroke:0.1px #000;">cf</div>
<div style="position:absolute;top:741.82px;font-size:17.7px;line-height:17.7px;white-space:nowrap;color:#000;right:228.30px;-webkit-text-stroke:0.1px #000;">9.26</div>
<div style="position:absolute;top:741.82px;font-size:17.7px;line-height:17.7px;white-space:nowrap;color:#000;left:2169.00px;-webkit-text-stroke:0.1px #000;">cy</div>
<div style="position:absolute;top:769.82px;font-size:17.7px;line-height:17.7px;white-space:nowrap;color:#000;left:-208.00px;width:600px;text-align:center;-webkit-text-stroke:0.1px #000;">12</div>
<div style="position:absolute;top:769.82px;font-size:17.7px;line-height:17.7px;white-space:nowrap;color:#000;right:1897.30px;-webkit-text-stroke:0.1px #000;">2</div>
<div style="position:absolute;top:769.82px;font-size:17.7px;line-height:17.7px;white-space:nowrap;color:#000;left:221.00px;width:600px;text-align:center;transform:scaleX(1.12);transform-origin:center 0;-webkit-text-stroke:0.1px #000;">ft</div>
<div style="position:absolute;top:769.82px;font-size:17.7px;line-height:17.7px;white-space:nowrap;color:#000;right:1784.30px;-webkit-text-stroke:0.1px #000;">6</div>
<div style="position:absolute;top:769.82px;font-size:17.7px;line-height:17.7px;white-space:nowrap;color:#000;left:613.00px;-webkit-text-stroke:0.1px #000;">in</div>
<div style="position:absolute;top:771.38px;font-size:15.5px;line-height:15.5px;white-space:nowrap;color:#000;left:461.50px;width:600px;text-align:center;-webkit-text-stroke:0.1px #000;">x</div>
<div style="position:absolute;top:769.82px;font-size:17.7px;line-height:17.7px;white-space:nowrap;color:#000;right:1529.30px;-webkit-text-stroke:0.1px #000;">12</div>
<div style="position:absolute;top:769.82px;font-size:17.7px;line-height:17.7px;white-space:nowrap;color:#000;left:589.00px;width:600px;text-align:center;transform:scaleX(1.12);transform-origin:center 0;-webkit-text-stroke:0.1px #000;">ft</div>
<div style="position:absolute;top:769.82px;font-size:17.7px;line-height:17.7px;white-space:nowrap;color:#000;left:981.00px;-webkit-text-stroke:0.1px #000;">in</div>
<div style="position:absolute;top:769.82px;font-size:17.7px;line-height:17.7px;white-space:nowrap;color:#000;left:754.00px;width:600px;text-align:center;-webkit-text-stroke:0.1px #000;">=</div>
<div style="position:absolute;top:769.82px;font-size:17.7px;line-height:17.7px;white-space:nowrap;color:#000;right:1185.30px;-webkit-text-stroke:0.1px #000;">30.00</div>
<div style="position:absolute;top:769.82px;font-size:17.7px;line-height:17.7px;white-space:nowrap;color:#000;left:1212.00px;-webkit-text-stroke:0.1px #000;">sf</div>
<div style="position:absolute;top:769.82px;font-size:17.7px;line-height:17.7px;white-space:nowrap;color:#000;right:1012.30px;-webkit-text-stroke:0.1px #000;">3.33</div>
<div style="position:absolute;top:769.82px;font-size:17.7px;line-height:17.7px;white-space:nowrap;color:#000;left:1385.00px;-webkit-text-stroke:0.1px #000;">sy</div>
<div style="position:absolute;top:771.38px;font-size:15.5px;line-height:15.5px;white-space:nowrap;color:#000;left:1227.50px;width:600px;text-align:center;-webkit-text-stroke:0.1px #000;">x</div>
<div style="position:absolute;top:769.82px;font-size:17.7px;line-height:17.7px;white-space:nowrap;color:#000;left:1355.00px;width:600px;text-align:center;transform:scaleX(1.12);transform-origin:center 0;-webkit-text-stroke:0.1px #000;">ft</div>
<div style="position:absolute;top:769.82px;font-size:17.7px;line-height:17.7px;white-space:nowrap;color:#000;right:650.30px;-webkit-text-stroke:0.1px #000;">10</div>
<div style="position:absolute;top:769.82px;font-size:17.7px;line-height:17.7px;white-space:nowrap;color:#000;left:1747.00px;-webkit-text-stroke:0.1px #000;">in</div>
<div style="position:absolute;top:769.82px;font-size:17.7px;line-height:17.7px;white-space:nowrap;color:#000;left:1520.00px;width:600px;text-align:center;-webkit-text-stroke:0.1px #000;">=</div>
<div style="position:absolute;top:769.82px;font-size:17.7px;line-height:17.7px;white-space:nowrap;color:#000;right:400.30px;-webkit-text-stroke:0.1px #000;">25.00</div>
<div style="position:absolute;top:769.82px;font-size:17.7px;line-height:17.7px;white-space:nowrap;color:#000;left:1997.00px;-webkit-text-stroke:0.1px #000;">cf</div>
<div style="position:absolute;top:769.82px;font-size:17.7px;line-height:17.7px;white-space:nowrap;color:#000;right:228.30px;-webkit-text-stroke:0.1px #000;">0.93</div>
<div style="position:absolute;top:769.82px;font-size:17.7px;line-height:17.7px;white-space:nowrap;color:#000;left:2169.00px;-webkit-text-stroke:0.1px #000;">cy</div>
<div style="position:absolute;top:797.82px;font-size:17.7px;line-height:17.7px;white-space:nowrap;color:#000;left:-208.00px;width:600px;text-align:center;-webkit-text-stroke:0.1px #000;">13</div>
<div style="position:absolute;top:797.82px;font-size:17.7px;line-height:17.7px;white-space:nowrap;color:#000;right:1897.30px;-webkit-text-stroke:0.1px #000;">12</div>
<div style="position:absolute;top:797.82px;font-size:17.7px;line-height:17.7px;white-space:nowrap;color:#000;left:221.00px;width:600px;text-align:center;transform:scaleX(1.12);transform-origin:center 0;-webkit-text-stroke:0.1px #000;">ft</div>
<div style="position:absolute;top:797.82px;font-size:17.7px;line-height:17.7px;white-space:nowrap;color:#000;right:1784.30px;-webkit-text-stroke:0.1px #000;">6</div>
<div style="position:absolute;top:797.82px;font-size:17.7px;line-height:17.7px;white-space:nowrap;color:#000;left:613.00px;-webkit-text-stroke:0.1px #000;">in</div>
<div style="position:absolute;top:799.38px;font-size:15.5px;line-height:15.5px;white-space:nowrap;color:#000;left:461.50px;width:600px;text-align:center;-webkit-text-stroke:0.1px #000;">x</div>
<div style="position:absolute;top:797.82px;font-size:17.7px;line-height:17.7px;white-space:nowrap;color:#000;right:1529.30px;-webkit-text-stroke:0.1px #000;">14</div>
<div style="position:absolute;top:797.82px;font-size:17.7px;line-height:17.7px;white-space:nowrap;color:#000;left:589.00px;width:600px;text-align:center;transform:scaleX(1.12);transform-origin:center 0;-webkit-text-stroke:0.1px #000;">ft</div>
<div style="position:absolute;top:797.82px;font-size:17.7px;line-height:17.7px;white-space:nowrap;color:#000;left:981.00px;-webkit-text-stroke:0.1px #000;">in</div>
<div style="position:absolute;top:797.82px;font-size:17.7px;line-height:17.7px;white-space:nowrap;color:#000;left:754.00px;width:600px;text-align:center;-webkit-text-stroke:0.1px #000;">=</div>
<div style="position:absolute;top:797.82px;font-size:17.7px;line-height:17.7px;white-space:nowrap;color:#000;right:1185.30px;-webkit-text-stroke:0.1px #000;">175.00</div>
<div style="position:absolute;top:797.82px;font-size:17.7px;line-height:17.7px;white-space:nowrap;color:#000;left:1212.00px;-webkit-text-stroke:0.1px #000;">sf</div>
<div style="position:absolute;top:797.82px;font-size:17.7px;line-height:17.7px;white-space:nowrap;color:#000;right:1012.30px;-webkit-text-stroke:0.1px #000;">19.44</div>
<div style="position:absolute;top:797.82px;font-size:17.7px;line-height:17.7px;white-space:nowrap;color:#000;left:1385.00px;-webkit-text-stroke:0.1px #000;">sy</div>
<div style="position:absolute;top:799.38px;font-size:15.5px;line-height:15.5px;white-space:nowrap;color:#000;left:1227.50px;width:600px;text-align:center;-webkit-text-stroke:0.1px #000;">x</div>
<div style="position:absolute;top:797.82px;font-size:17.7px;line-height:17.7px;white-space:nowrap;color:#000;left:1355.00px;width:600px;text-align:center;transform:scaleX(1.12);transform-origin:center 0;-webkit-text-stroke:0.1px #000;">ft</div>
<div style="position:absolute;top:797.82px;font-size:17.7px;line-height:17.7px;white-space:nowrap;color:#000;right:650.30px;-webkit-text-stroke:0.1px #000;">10</div>
<div style="position:absolute;top:797.82px;font-size:17.7px;line-height:17.7px;white-space:nowrap;color:#000;left:1747.00px;-webkit-text-stroke:0.1px #000;">in</div>
<div style="position:absolute;top:797.82px;font-size:17.7px;line-height:17.7px;white-space:nowrap;color:#000;left:1520.00px;width:600px;text-align:center;-webkit-text-stroke:0.1px #000;">=</div>
<div style="position:absolute;top:797.82px;font-size:17.7px;line-height:17.7px;white-space:nowrap;color:#000;right:400.30px;-webkit-text-stroke:0.1px #000;">145.83</div>
<div style="position:absolute;top:797.82px;font-size:17.7px;line-height:17.7px;white-space:nowrap;color:#000;left:1997.00px;-webkit-text-stroke:0.1px #000;">cf</div>
<div style="position:absolute;top:797.82px;font-size:17.7px;line-height:17.7px;white-space:nowrap;color:#000;right:228.30px;-webkit-text-stroke:0.1px #000;">5.40</div>
<div style="position:absolute;top:797.82px;font-size:17.7px;line-height:17.7px;white-space:nowrap;color:#000;left:2169.00px;-webkit-text-stroke:0.1px #000;">cy</div>
<div style="position:absolute;top:825.82px;font-size:17.7px;line-height:17.7px;white-space:nowrap;color:#000;left:-208.00px;width:600px;text-align:center;-webkit-text-stroke:0.1px #000;">14</div>
<div style="position:absolute;top:825.82px;font-size:17.7px;line-height:17.7px;white-space:nowrap;color:#000;left:221.00px;width:600px;text-align:center;transform:scaleX(1.12);transform-origin:center 0;-webkit-text-stroke:0.1px #000;">ft</div>
<div style="position:absolute;top:825.82px;font-size:17.7px;line-height:17.7px;white-space:nowrap;color:#000;left:613.00px;-webkit-text-stroke:0.1px #000;">in</div>
<div style="position:absolute;top:827.38px;font-size:15.5px;line-height:15.5px;white-space:nowrap;color:#000;left:461.50px;width:600px;text-align:center;-webkit-text-stroke:0.1px #000;">x</div>
<div style="position:absolute;top:825.82px;font-size:17.7px;line-height:17.7px;white-space:nowrap;color:#000;left:589.00px;width:600px;text-align:center;transform:scaleX(1.12);transform-origin:center 0;-webkit-text-stroke:0.1px #000;">ft</div>
<div style="position:absolute;top:825.82px;font-size:17.7px;line-height:17.7px;white-space:nowrap;color:#000;left:981.00px;-webkit-text-stroke:0.1px #000;">in</div>
<div style="position:absolute;top:825.82px;font-size:17.7px;line-height:17.7px;white-space:nowrap;color:#000;left:754.00px;width:600px;text-align:center;-webkit-text-stroke:0.1px #000;">=</div>
<div style="position:absolute;top:825.82px;font-size:17.7px;line-height:17.7px;white-space:nowrap;color:#000;right:1185.30px;-webkit-text-stroke:0.1px #000;">0.00</div>
<div style="position:absolute;top:825.82px;font-size:17.7px;line-height:17.7px;white-space:nowrap;color:#000;left:1212.00px;-webkit-text-stroke:0.1px #000;">sf</div>
<div style="position:absolute;top:825.82px;font-size:17.7px;line-height:17.7px;white-space:nowrap;color:#000;right:1012.30px;-webkit-text-stroke:0.1px #000;">0.00</div>
<div style="position:absolute;top:825.82px;font-size:17.7px;line-height:17.7px;white-space:nowrap;color:#000;left:1385.00px;-webkit-text-stroke:0.1px #000;">sy</div>
<div style="position:absolute;top:827.38px;font-size:15.5px;line-height:15.5px;white-space:nowrap;color:#000;left:1227.50px;width:600px;text-align:center;-webkit-text-stroke:0.1px #000;">x</div>
<div style="position:absolute;top:825.82px;font-size:17.7px;line-height:17.7px;white-space:nowrap;color:#000;left:1355.00px;width:600px;text-align:center;transform:scaleX(1.12);transform-origin:center 0;-webkit-text-stroke:0.1px #000;">ft</div>
<div style="position:absolute;top:825.82px;font-size:17.7px;line-height:17.7px;white-space:nowrap;color:#000;left:1747.00px;-webkit-text-stroke:0.1px #000;">in</div>
<div style="position:absolute;top:825.82px;font-size:17.7px;line-height:17.7px;white-space:nowrap;color:#000;left:1520.00px;width:600px;text-align:center;-webkit-text-stroke:0.1px #000;">=</div>
<div style="position:absolute;top:825.82px;font-size:17.7px;line-height:17.7px;white-space:nowrap;color:#000;right:400.30px;-webkit-text-stroke:0.1px #000;">0.00</div>
<div style="position:absolute;top:825.82px;font-size:17.7px;line-height:17.7px;white-space:nowrap;color:#000;left:1997.00px;-webkit-text-stroke:0.1px #000;">cf</div>
<div style="position:absolute;top:825.82px;font-size:17.7px;line-height:17.7px;white-space:nowrap;color:#000;right:228.30px;-webkit-text-stroke:0.1px #000;">0.00</div>
<div style="position:absolute;top:825.82px;font-size:17.7px;line-height:17.7px;white-space:nowrap;color:#000;left:2169.00px;-webkit-text-stroke:0.1px #000;">cy</div>
<div style="position:absolute;top:853.82px;font-size:17.7px;line-height:17.7px;white-space:nowrap;color:#000;left:-208.00px;width:600px;text-align:center;-webkit-text-stroke:0.1px #000;">15</div>
<div style="position:absolute;top:853.82px;font-size:17.7px;line-height:17.7px;white-space:nowrap;color:#000;left:124.00px;transform:scaleX(1.055);transform-origin:left 0;-webkit-text-stroke:0.1px #000;">Back Wall</div>
<div style="position:absolute;top:853.82px;font-size:17.7px;line-height:17.7px;white-space:nowrap;color:#000;right:1897.30px;-webkit-text-stroke:0.1px #000;">55</div>
<div style="position:absolute;top:853.82px;font-size:17.7px;line-height:17.7px;white-space:nowrap;color:#000;left:221.00px;width:600px;text-align:center;transform:scaleX(1.12);transform-origin:center 0;-webkit-text-stroke:0.1px #000;">ft</div>
<div style="position:absolute;top:853.82px;font-size:17.7px;line-height:17.7px;white-space:nowrap;color:#000;right:1784.30px;-webkit-text-stroke:0.1px #000;">9</div>
<div style="position:absolute;top:853.82px;font-size:17.7px;line-height:17.7px;white-space:nowrap;color:#000;left:613.00px;-webkit-text-stroke:0.1px #000;">in</div>
<div style="position:absolute;top:855.38px;font-size:15.5px;line-height:15.5px;white-space:nowrap;color:#000;left:461.50px;width:600px;text-align:center;-webkit-text-stroke:0.1px #000;">x</div>
<div style="position:absolute;top:853.82px;font-size:17.7px;line-height:17.7px;white-space:nowrap;color:#000;right:1529.30px;-webkit-text-stroke:0.1px #000;">16</div>
<div style="position:absolute;top:853.82px;font-size:17.7px;line-height:17.7px;white-space:nowrap;color:#000;left:589.00px;width:600px;text-align:center;transform:scaleX(1.12);transform-origin:center 0;-webkit-text-stroke:0.1px #000;">ft</div>
<div style="position:absolute;top:853.82px;font-size:17.7px;line-height:17.7px;white-space:nowrap;color:#000;left:981.00px;-webkit-text-stroke:0.1px #000;">in</div>
<div style="position:absolute;top:853.82px;font-size:17.7px;line-height:17.7px;white-space:nowrap;color:#000;left:754.00px;width:600px;text-align:center;-webkit-text-stroke:0.1px #000;">=</div>
<div style="position:absolute;top:853.82px;font-size:17.7px;line-height:17.7px;white-space:nowrap;color:#000;right:1185.30px;-webkit-text-stroke:0.1px #000;">892.00</div>
<div style="position:absolute;top:853.82px;font-size:17.7px;line-height:17.7px;white-space:nowrap;color:#000;left:1212.00px;-webkit-text-stroke:0.1px #000;">sf</div>
<div style="position:absolute;top:853.82px;font-size:17.7px;line-height:17.7px;white-space:nowrap;color:#000;right:1012.30px;-webkit-text-stroke:0.1px #000;">99.11</div>
<div style="position:absolute;top:853.82px;font-size:17.7px;line-height:17.7px;white-space:nowrap;color:#000;left:1385.00px;-webkit-text-stroke:0.1px #000;">sy</div>
<div style="position:absolute;top:855.38px;font-size:15.5px;line-height:15.5px;white-space:nowrap;color:#000;left:1227.50px;width:600px;text-align:center;-webkit-text-stroke:0.1px #000;">x</div>
<div style="position:absolute;top:853.82px;font-size:17.7px;line-height:17.7px;white-space:nowrap;color:#000;left:1355.00px;width:600px;text-align:center;transform:scaleX(1.12);transform-origin:center 0;-webkit-text-stroke:0.1px #000;">ft</div>
<div style="position:absolute;top:853.82px;font-size:17.7px;line-height:17.7px;white-space:nowrap;color:#000;right:650.30px;-webkit-text-stroke:0.1px #000;">10</div>
<div style="position:absolute;top:853.82px;font-size:17.7px;line-height:17.7px;white-space:nowrap;color:#000;left:1747.00px;-webkit-text-stroke:0.1px #000;">in</div>
<div style="position:absolute;top:853.82px;font-size:17.7px;line-height:17.7px;white-space:nowrap;color:#000;left:1520.00px;width:600px;text-align:center;-webkit-text-stroke:0.1px #000;">=</div>
<div style="position:absolute;top:853.82px;font-size:17.7px;line-height:17.7px;white-space:nowrap;color:#000;right:400.30px;-webkit-text-stroke:0.1px #000;">743.33</div>
<div style="position:absolute;top:853.82px;font-size:17.7px;line-height:17.7px;white-space:nowrap;color:#000;left:1997.00px;-webkit-text-stroke:0.1px #000;">cf</div>
<div style="position:absolute;top:853.82px;font-size:17.7px;line-height:17.7px;white-space:nowrap;color:#000;right:228.30px;-webkit-text-stroke:0.1px #000;">27.53</div>
<div style="position:absolute;top:853.82px;font-size:17.7px;line-height:17.7px;white-space:nowrap;color:#000;left:2169.00px;-webkit-text-stroke:0.1px #000;">cy</div>
<div style="position:absolute;top:881.82px;font-size:17.7px;line-height:17.7px;white-space:nowrap;color:#000;left:-208.00px;width:600px;text-align:center;-webkit-text-stroke:0.1px #000;">16</div>
<div style="position:absolute;top:881.82px;font-size:17.7px;line-height:17.7px;white-space:nowrap;color:#000;right:1897.30px;-webkit-text-stroke:0.1px #000;">12</div>
<div style="position:absolute;top:881.82px;font-size:17.7px;line-height:17.7px;white-space:nowrap;color:#000;left:221.00px;width:600px;text-align:center;transform:scaleX(1.12);transform-origin:center 0;-webkit-text-stroke:0.1px #000;">ft</div>
<div style="position:absolute;top:881.82px;font-size:17.7px;line-height:17.7px;white-space:nowrap;color:#000;left:613.00px;-webkit-text-stroke:0.1px #000;">in</div>
<div style="position:absolute;top:883.38px;font-size:15.5px;line-height:15.5px;white-space:nowrap;color:#000;left:461.50px;width:600px;text-align:center;-webkit-text-stroke:0.1px #000;">x</div>
<div style="position:absolute;top:881.82px;font-size:17.7px;line-height:17.7px;white-space:nowrap;color:#000;right:1529.30px;-webkit-text-stroke:0.1px #000;">16</div>
<div style="position:absolute;top:881.82px;font-size:17.7px;line-height:17.7px;white-space:nowrap;color:#000;left:589.00px;width:600px;text-align:center;transform:scaleX(1.12);transform-origin:center 0;-webkit-text-stroke:0.1px #000;">ft</div>
<div style="position:absolute;top:881.82px;font-size:17.7px;line-height:17.7px;white-space:nowrap;color:#000;left:981.00px;-webkit-text-stroke:0.1px #000;">in</div>
<div style="position:absolute;top:881.82px;font-size:17.7px;line-height:17.7px;white-space:nowrap;color:#000;left:754.00px;width:600px;text-align:center;-webkit-text-stroke:0.1px #000;">=</div>
<div style="position:absolute;top:881.82px;font-size:17.7px;line-height:17.7px;white-space:nowrap;color:#000;right:1185.30px;-webkit-text-stroke:0.1px #000;">192.00</div>
<div style="position:absolute;top:881.82px;font-size:17.7px;line-height:17.7px;white-space:nowrap;color:#000;left:1212.00px;-webkit-text-stroke:0.1px #000;">sf</div>
<div style="position:absolute;top:881.82px;font-size:17.7px;line-height:17.7px;white-space:nowrap;color:#000;right:1012.30px;-webkit-text-stroke:0.1px #000;">21.33</div>
<div style="position:absolute;top:881.82px;font-size:17.7px;line-height:17.7px;white-space:nowrap;color:#000;left:1385.00px;-webkit-text-stroke:0.1px #000;">sy</div>
<div style="position:absolute;top:883.38px;font-size:15.5px;line-height:15.5px;white-space:nowrap;color:#000;left:1227.50px;width:600px;text-align:center;-webkit-text-stroke:0.1px #000;">x</div>
<div style="position:absolute;top:881.82px;font-size:17.7px;line-height:17.7px;white-space:nowrap;color:#000;left:1355.00px;width:600px;text-align:center;transform:scaleX(1.12);transform-origin:center 0;-webkit-text-stroke:0.1px #000;">ft</div>
<div style="position:absolute;top:881.82px;font-size:17.7px;line-height:17.7px;white-space:nowrap;color:#000;right:650.30px;-webkit-text-stroke:0.1px #000;">10</div>
<div style="position:absolute;top:881.82px;font-size:17.7px;line-height:17.7px;white-space:nowrap;color:#000;left:1747.00px;-webkit-text-stroke:0.1px #000;">in</div>
<div style="position:absolute;top:881.82px;font-size:17.7px;line-height:17.7px;white-space:nowrap;color:#000;left:1520.00px;width:600px;text-align:center;-webkit-text-stroke:0.1px #000;">=</div>
<div style="position:absolute;top:881.82px;font-size:17.7px;line-height:17.7px;white-space:nowrap;color:#000;right:400.30px;-webkit-text-stroke:0.1px #000;">160.00</div>
<div style="position:absolute;top:881.82px;font-size:17.7px;line-height:17.7px;white-space:nowrap;color:#000;left:1997.00px;-webkit-text-stroke:0.1px #000;">cf</div>
<div style="position:absolute;top:881.82px;font-size:17.7px;line-height:17.7px;white-space:nowrap;color:#000;right:228.30px;-webkit-text-stroke:0.1px #000;">5.93</div>
<div style="position:absolute;top:881.82px;font-size:17.7px;line-height:17.7px;white-space:nowrap;color:#000;left:2169.00px;-webkit-text-stroke:0.1px #000;">cy</div>
<div style="position:absolute;top:909.82px;font-size:17.7px;line-height:17.7px;white-space:nowrap;color:#000;left:-208.00px;width:600px;text-align:center;-webkit-text-stroke:0.1px #000;">17</div>
<div style="position:absolute;top:909.82px;font-size:17.7px;line-height:17.7px;white-space:nowrap;color:#000;right:1897.30px;-webkit-text-stroke:0.1px #000;">21</div>
<div style="position:absolute;top:909.82px;font-size:17.7px;line-height:17.7px;white-space:nowrap;color:#000;left:221.00px;width:600px;text-align:center;transform:scaleX(1.12);transform-origin:center 0;-webkit-text-stroke:0.1px #000;">ft</div>
<div style="position:absolute;top:909.82px;font-size:17.7px;line-height:17.7px;white-space:nowrap;color:#000;right:1784.30px;-webkit-text-stroke:0.1px #000;">9</div>
<div style="position:absolute;top:909.82px;font-size:17.7px;line-height:17.7px;white-space:nowrap;color:#000;left:613.00px;-webkit-text-stroke:0.1px #000;">in</div>
<div style="position:absolute;top:911.38px;font-size:15.5px;line-height:15.5px;white-space:nowrap;color:#000;left:461.50px;width:600px;text-align:center;-webkit-text-stroke:0.1px #000;">x</div>
<div style="position:absolute;top:909.82px;font-size:17.7px;line-height:17.7px;white-space:nowrap;color:#000;right:1529.30px;-webkit-text-stroke:0.1px #000;">16</div>
<div style="position:absolute;top:909.82px;font-size:17.7px;line-height:17.7px;white-space:nowrap;color:#000;left:589.00px;width:600px;text-align:center;transform:scaleX(1.12);transform-origin:center 0;-webkit-text-stroke:0.1px #000;">ft</div>
<div style="position:absolute;top:909.82px;font-size:17.7px;line-height:17.7px;white-space:nowrap;color:#000;left:981.00px;-webkit-text-stroke:0.1px #000;">in</div>
<div style="position:absolute;top:909.82px;font-size:17.7px;line-height:17.7px;white-space:nowrap;color:#000;left:754.00px;width:600px;text-align:center;-webkit-text-stroke:0.1px #000;">=</div>
<div style="position:absolute;top:909.82px;font-size:17.7px;line-height:17.7px;white-space:nowrap;color:#000;right:1185.30px;-webkit-text-stroke:0.1px #000;">348.00</div>
<div style="position:absolute;top:909.82px;font-size:17.7px;line-height:17.7px;white-space:nowrap;color:#000;left:1212.00px;-webkit-text-stroke:0.1px #000;">sf</div>
<div style="position:absolute;top:909.82px;font-size:17.7px;line-height:17.7px;white-space:nowrap;color:#000;right:1012.30px;-webkit-text-stroke:0.1px #000;">38.67</div>
<div style="position:absolute;top:909.82px;font-size:17.7px;line-height:17.7px;white-space:nowrap;color:#000;left:1385.00px;-webkit-text-stroke:0.1px #000;">sy</div>
<div style="position:absolute;top:911.38px;font-size:15.5px;line-height:15.5px;white-space:nowrap;color:#000;left:1227.50px;width:600px;text-align:center;-webkit-text-stroke:0.1px #000;">x</div>
<div style="position:absolute;top:909.82px;font-size:17.7px;line-height:17.7px;white-space:nowrap;color:#000;left:1355.00px;width:600px;text-align:center;transform:scaleX(1.12);transform-origin:center 0;-webkit-text-stroke:0.1px #000;">ft</div>
<div style="position:absolute;top:909.82px;font-size:17.7px;line-height:17.7px;white-space:nowrap;color:#000;right:650.30px;-webkit-text-stroke:0.1px #000;">10</div>
<div style="position:absolute;top:909.82px;font-size:17.7px;line-height:17.7px;white-space:nowrap;color:#000;left:1747.00px;-webkit-text-stroke:0.1px #000;">in</div>
<div style="position:absolute;top:909.82px;font-size:17.7px;line-height:17.7px;white-space:nowrap;color:#000;left:1520.00px;width:600px;text-align:center;-webkit-text-stroke:0.1px #000;">=</div>
<div style="position:absolute;top:909.82px;font-size:17.7px;line-height:17.7px;white-space:nowrap;color:#000;right:400.30px;-webkit-text-stroke:0.1px #000;">290.00</div>
<div style="position:absolute;top:909.82px;font-size:17.7px;line-height:17.7px;white-space:nowrap;color:#000;left:1997.00px;-webkit-text-stroke:0.1px #000;">cf</div>
<div style="position:absolute;top:909.82px;font-size:17.7px;line-height:17.7px;white-space:nowrap;color:#000;right:228.30px;-webkit-text-stroke:0.1px #000;">10.74</div>
<div style="position:absolute;top:909.82px;font-size:17.7px;line-height:17.7px;white-space:nowrap;color:#000;left:2169.00px;-webkit-text-stroke:0.1px #000;">cy</div>
<div style="position:absolute;top:937.82px;font-size:17.7px;line-height:17.7px;white-space:nowrap;color:#000;left:-208.00px;width:600px;text-align:center;-webkit-text-stroke:0.1px #000;">18</div>
<div style="position:absolute;top:937.82px;font-size:17.7px;line-height:17.7px;white-space:nowrap;color:#000;left:221.00px;width:600px;text-align:center;transform:scaleX(1.12);transform-origin:center 0;-webkit-text-stroke:0.1px #000;">ft</div>
<div style="position:absolute;top:937.82px;font-size:17.7px;line-height:17.7px;white-space:nowrap;color:#000;left:613.00px;-webkit-text-stroke:0.1px #000;">in</div>
<div style="position:absolute;top:939.38px;font-size:15.5px;line-height:15.5px;white-space:nowrap;color:#000;left:461.50px;width:600px;text-align:center;-webkit-text-stroke:0.1px #000;">x</div>
<div style="position:absolute;top:937.82px;font-size:17.7px;line-height:17.7px;white-space:nowrap;color:#000;left:589.00px;width:600px;text-align:center;transform:scaleX(1.12);transform-origin:center 0;-webkit-text-stroke:0.1px #000;">ft</div>
<div style="position:absolute;top:937.82px;font-size:17.7px;line-height:17.7px;white-space:nowrap;color:#000;left:981.00px;-webkit-text-stroke:0.1px #000;">in</div>
<div style="position:absolute;top:937.82px;font-size:17.7px;line-height:17.7px;white-space:nowrap;color:#000;left:754.00px;width:600px;text-align:center;-webkit-text-stroke:0.1px #000;">=</div>
<div style="position:absolute;top:937.82px;font-size:17.7px;line-height:17.7px;white-space:nowrap;color:#000;right:1185.30px;-webkit-text-stroke:0.1px #000;">0.00</div>
<div style="position:absolute;top:937.82px;font-size:17.7px;line-height:17.7px;white-space:nowrap;color:#000;left:1212.00px;-webkit-text-stroke:0.1px #000;">sf</div>
<div style="position:absolute;top:937.82px;font-size:17.7px;line-height:17.7px;white-space:nowrap;color:#000;right:1012.30px;-webkit-text-stroke:0.1px #000;">0.00</div>
<div style="position:absolute;top:937.82px;font-size:17.7px;line-height:17.7px;white-space:nowrap;color:#000;left:1385.00px;-webkit-text-stroke:0.1px #000;">sy</div>
<div style="position:absolute;top:939.38px;font-size:15.5px;line-height:15.5px;white-space:nowrap;color:#000;left:1227.50px;width:600px;text-align:center;-webkit-text-stroke:0.1px #000;">x</div>
<div style="position:absolute;top:937.82px;font-size:17.7px;line-height:17.7px;white-space:nowrap;color:#000;left:1355.00px;width:600px;text-align:center;transform:scaleX(1.12);transform-origin:center 0;-webkit-text-stroke:0.1px #000;">ft</div>
<div style="position:absolute;top:937.82px;font-size:17.7px;line-height:17.7px;white-space:nowrap;color:#000;left:1747.00px;-webkit-text-stroke:0.1px #000;">in</div>
<div style="position:absolute;top:937.82px;font-size:17.7px;line-height:17.7px;white-space:nowrap;color:#000;left:1520.00px;width:600px;text-align:center;-webkit-text-stroke:0.1px #000;">=</div>
<div style="position:absolute;top:937.82px;font-size:17.7px;line-height:17.7px;white-space:nowrap;color:#000;right:400.30px;-webkit-text-stroke:0.1px #000;">0.00</div>
<div style="position:absolute;top:937.82px;font-size:17.7px;line-height:17.7px;white-space:nowrap;color:#000;left:1997.00px;-webkit-text-stroke:0.1px #000;">cf</div>
<div style="position:absolute;top:937.82px;font-size:17.7px;line-height:17.7px;white-space:nowrap;color:#000;right:228.30px;-webkit-text-stroke:0.1px #000;">0.00</div>
<div style="position:absolute;top:937.82px;font-size:17.7px;line-height:17.7px;white-space:nowrap;color:#000;left:2169.00px;-webkit-text-stroke:0.1px #000;">cy</div>
<div style="position:absolute;top:965.82px;font-size:17.7px;line-height:17.7px;white-space:nowrap;color:#000;left:-208.00px;width:600px;text-align:center;-webkit-text-stroke:0.1px #000;">19</div>
<div style="position:absolute;top:965.82px;font-size:17.7px;line-height:17.7px;white-space:nowrap;color:#000;left:124.00px;transform:scaleX(1.055);transform-origin:left 0;-webkit-text-stroke:0.1px #000;">West Wall</div>
<div style="position:absolute;top:965.82px;font-size:17.7px;line-height:17.7px;white-space:nowrap;color:#000;right:1897.30px;-webkit-text-stroke:0.1px #000;">25</div>
<div style="position:absolute;top:965.82px;font-size:17.7px;line-height:17.7px;white-space:nowrap;color:#000;left:221.00px;width:600px;text-align:center;transform:scaleX(1.12);transform-origin:center 0;-webkit-text-stroke:0.1px #000;">ft</div>
<div style="position:absolute;top:965.82px;font-size:17.7px;line-height:17.7px;white-space:nowrap;color:#000;left:613.00px;-webkit-text-stroke:0.1px #000;">in</div>
<div style="position:absolute;top:967.38px;font-size:15.5px;line-height:15.5px;white-space:nowrap;color:#000;left:461.50px;width:600px;text-align:center;-webkit-text-stroke:0.1px #000;">x</div>
<div style="position:absolute;top:965.82px;font-size:17.7px;line-height:17.7px;white-space:nowrap;color:#000;right:1529.30px;-webkit-text-stroke:0.1px #000;">14</div>
<div style="position:absolute;top:965.82px;font-size:17.7px;line-height:17.7px;white-space:nowrap;color:#000;left:589.00px;width:600px;text-align:center;transform:scaleX(1.12);transform-origin:center 0;-webkit-text-stroke:0.1px #000;">ft</div>
<div style="position:absolute;top:965.82px;font-size:17.7px;line-height:17.7px;white-space:nowrap;color:#000;left:981.00px;-webkit-text-stroke:0.1px #000;">in</div>
<div style="position:absolute;top:965.82px;font-size:17.7px;line-height:17.7px;white-space:nowrap;color:#000;left:754.00px;width:600px;text-align:center;-webkit-text-stroke:0.1px #000;">=</div>
<div style="position:absolute;top:965.82px;font-size:17.7px;line-height:17.7px;white-space:nowrap;color:#000;right:1185.30px;-webkit-text-stroke:0.1px #000;">350.00</div>
<div style="position:absolute;top:965.82px;font-size:17.7px;line-height:17.7px;white-space:nowrap;color:#000;left:1212.00px;-webkit-text-stroke:0.1px #000;">sf</div>
<div style="position:absolute;top:965.82px;font-size:17.7px;line-height:17.7px;white-space:nowrap;color:#000;right:1012.30px;-webkit-text-stroke:0.1px #000;">38.89</div>
<div style="position:absolute;top:965.82px;font-size:17.7px;line-height:17.7px;white-space:nowrap;color:#000;left:1385.00px;-webkit-text-stroke:0.1px #000;">sy</div>
<div style="position:absolute;top:967.38px;font-size:15.5px;line-height:15.5px;white-space:nowrap;color:#000;left:1227.50px;width:600px;text-align:center;-webkit-text-stroke:0.1px #000;">x</div>
<div style="position:absolute;top:965.82px;font-size:17.7px;line-height:17.7px;white-space:nowrap;color:#000;left:1355.00px;width:600px;text-align:center;transform:scaleX(1.12);transform-origin:center 0;-webkit-text-stroke:0.1px #000;">ft</div>
<div style="position:absolute;top:965.82px;font-size:17.7px;line-height:17.7px;white-space:nowrap;color:#000;right:650.30px;-webkit-text-stroke:0.1px #000;">10</div>
<div style="position:absolute;top:965.82px;font-size:17.7px;line-height:17.7px;white-space:nowrap;color:#000;left:1747.00px;-webkit-text-stroke:0.1px #000;">in</div>
<div style="position:absolute;top:965.82px;font-size:17.7px;line-height:17.7px;white-space:nowrap;color:#000;left:1520.00px;width:600px;text-align:center;-webkit-text-stroke:0.1px #000;">=</div>
<div style="position:absolute;top:965.82px;font-size:17.7px;line-height:17.7px;white-space:nowrap;color:#000;right:400.30px;-webkit-text-stroke:0.1px #000;">291.67</div>
<div style="position:absolute;top:965.82px;font-size:17.7px;line-height:17.7px;white-space:nowrap;color:#000;left:1997.00px;-webkit-text-stroke:0.1px #000;">cf</div>
<div style="position:absolute;top:965.82px;font-size:17.7px;line-height:17.7px;white-space:nowrap;color:#000;right:228.30px;-webkit-text-stroke:0.1px #000;">10.80</div>
<div style="position:absolute;top:965.82px;font-size:17.7px;line-height:17.7px;white-space:nowrap;color:#000;left:2169.00px;-webkit-text-stroke:0.1px #000;">cy</div>
<div style="position:absolute;top:993.82px;font-size:17.7px;line-height:17.7px;white-space:nowrap;color:#000;left:-208.00px;width:600px;text-align:center;-webkit-text-stroke:0.1px #000;">20</div>
<div style="position:absolute;top:993.82px;font-size:17.7px;line-height:17.7px;white-space:nowrap;color:#000;right:1897.30px;-webkit-text-stroke:0.1px #000;">20</div>
<div style="position:absolute;top:993.82px;font-size:17.7px;line-height:17.7px;white-space:nowrap;color:#000;left:221.00px;width:600px;text-align:center;transform:scaleX(1.12);transform-origin:center 0;-webkit-text-stroke:0.1px #000;">ft</div>
<div style="position:absolute;top:993.82px;font-size:17.7px;line-height:17.7px;white-space:nowrap;color:#000;left:613.00px;-webkit-text-stroke:0.1px #000;">in</div>
<div style="position:absolute;top:995.38px;font-size:15.5px;line-height:15.5px;white-space:nowrap;color:#000;left:461.50px;width:600px;text-align:center;-webkit-text-stroke:0.1px #000;">x</div>
<div style="position:absolute;top:993.82px;font-size:17.7px;line-height:17.7px;white-space:nowrap;color:#000;right:1529.30px;-webkit-text-stroke:0.1px #000;">12</div>
<div style="position:absolute;top:993.82px;font-size:17.7px;line-height:17.7px;white-space:nowrap;color:#000;left:589.00px;width:600px;text-align:center;transform:scaleX(1.12);transform-origin:center 0;-webkit-text-stroke:0.1px #000;">ft</div>
<div style="position:absolute;top:993.82px;font-size:17.7px;line-height:17.7px;white-space:nowrap;color:#000;left:981.00px;-webkit-text-stroke:0.1px #000;">in</div>
<div style="position:absolute;top:993.82px;font-size:17.7px;line-height:17.7px;white-space:nowrap;color:#000;left:754.00px;width:600px;text-align:center;-webkit-text-stroke:0.1px #000;">=</div>
<div style="position:absolute;top:993.82px;font-size:17.7px;line-height:17.7px;white-space:nowrap;color:#000;right:1185.30px;-webkit-text-stroke:0.1px #000;">240.00</div>
<div style="position:absolute;top:993.82px;font-size:17.7px;line-height:17.7px;white-space:nowrap;color:#000;left:1212.00px;-webkit-text-stroke:0.1px #000;">sf</div>
<div style="position:absolute;top:993.82px;font-size:17.7px;line-height:17.7px;white-space:nowrap;color:#000;right:1012.30px;-webkit-text-stroke:0.1px #000;">26.67</div>
<div style="position:absolute;top:993.82px;font-size:17.7px;line-height:17.7px;white-space:nowrap;color:#000;left:1385.00px;-webkit-text-stroke:0.1px #000;">sy</div>
<div style="position:absolute;top:995.38px;font-size:15.5px;line-height:15.5px;white-space:nowrap;color:#000;left:1227.50px;width:600px;text-align:center;-webkit-text-stroke:0.1px #000;">x</div>
<div style="position:absolute;top:993.82px;font-size:17.7px;line-height:17.7px;white-space:nowrap;color:#000;left:1355.00px;width:600px;text-align:center;transform:scaleX(1.12);transform-origin:center 0;-webkit-text-stroke:0.1px #000;">ft</div>
<div style="position:absolute;top:993.82px;font-size:17.7px;line-height:17.7px;white-space:nowrap;color:#000;right:650.30px;-webkit-text-stroke:0.1px #000;">10</div>
<div style="position:absolute;top:993.82px;font-size:17.7px;line-height:17.7px;white-space:nowrap;color:#000;left:1747.00px;-webkit-text-stroke:0.1px #000;">in</div>
<div style="position:absolute;top:993.82px;font-size:17.7px;line-height:17.7px;white-space:nowrap;color:#000;left:1520.00px;width:600px;text-align:center;-webkit-text-stroke:0.1px #000;">=</div>
<div style="position:absolute;top:993.82px;font-size:17.7px;line-height:17.7px;white-space:nowrap;color:#000;right:400.30px;-webkit-text-stroke:0.1px #000;">200.00</div>
<div style="position:absolute;top:993.82px;font-size:17.7px;line-height:17.7px;white-space:nowrap;color:#000;left:1997.00px;-webkit-text-stroke:0.1px #000;">cf</div>
<div style="position:absolute;top:993.82px;font-size:17.7px;line-height:17.7px;white-space:nowrap;color:#000;right:228.30px;-webkit-text-stroke:0.1px #000;">7.41</div>
<div style="position:absolute;top:993.82px;font-size:17.7px;line-height:17.7px;white-space:nowrap;color:#000;left:2169.00px;-webkit-text-stroke:0.1px #000;">cy</div>
<div style="position:absolute;top:1021.82px;font-size:17.7px;line-height:17.7px;white-space:nowrap;color:#000;left:-208.00px;width:600px;text-align:center;-webkit-text-stroke:0.1px #000;">21</div>
<div style="position:absolute;top:1021.82px;font-size:17.7px;line-height:17.7px;white-space:nowrap;color:#000;left:221.00px;width:600px;text-align:center;transform:scaleX(1.12);transform-origin:center 0;-webkit-text-stroke:0.1px #000;">ft</div>
<div style="position:absolute;top:1021.82px;font-size:17.7px;line-height:17.7px;white-space:nowrap;color:#000;left:613.00px;-webkit-text-stroke:0.1px #000;">in</div>
<div style="position:absolute;top:1023.38px;font-size:15.5px;line-height:15.5px;white-space:nowrap;color:#000;left:461.50px;width:600px;text-align:center;-webkit-text-stroke:0.1px #000;">x</div>
<div style="position:absolute;top:1021.82px;font-size:17.7px;line-height:17.7px;white-space:nowrap;color:#000;left:589.00px;width:600px;text-align:center;transform:scaleX(1.12);transform-origin:center 0;-webkit-text-stroke:0.1px #000;">ft</div>
<div style="position:absolute;top:1021.82px;font-size:17.7px;line-height:17.7px;white-space:nowrap;color:#000;left:981.00px;-webkit-text-stroke:0.1px #000;">in</div>
<div style="position:absolute;top:1021.82px;font-size:17.7px;line-height:17.7px;white-space:nowrap;color:#000;left:754.00px;width:600px;text-align:center;-webkit-text-stroke:0.1px #000;">=</div>
<div style="position:absolute;top:1021.82px;font-size:17.7px;line-height:17.7px;white-space:nowrap;color:#000;right:1185.30px;-webkit-text-stroke:0.1px #000;">0.00</div>
<div style="position:absolute;top:1021.82px;font-size:17.7px;line-height:17.7px;white-space:nowrap;color:#000;left:1212.00px;-webkit-text-stroke:0.1px #000;">sf</div>
<div style="position:absolute;top:1021.82px;font-size:17.7px;line-height:17.7px;white-space:nowrap;color:#000;right:1012.30px;-webkit-text-stroke:0.1px #000;">0.00</div>
<div style="position:absolute;top:1021.82px;font-size:17.7px;line-height:17.7px;white-space:nowrap;color:#000;left:1385.00px;-webkit-text-stroke:0.1px #000;">sy</div>
<div style="position:absolute;top:1023.38px;font-size:15.5px;line-height:15.5px;white-space:nowrap;color:#000;left:1227.50px;width:600px;text-align:center;-webkit-text-stroke:0.1px #000;">x</div>
<div style="position:absolute;top:1021.82px;font-size:17.7px;line-height:17.7px;white-space:nowrap;color:#000;left:1355.00px;width:600px;text-align:center;transform:scaleX(1.12);transform-origin:center 0;-webkit-text-stroke:0.1px #000;">ft</div>
<div style="position:absolute;top:1021.82px;font-size:17.7px;line-height:17.7px;white-space:nowrap;color:#000;left:1747.00px;-webkit-text-stroke:0.1px #000;">in</div>
<div style="position:absolute;top:1021.82px;font-size:17.7px;line-height:17.7px;white-space:nowrap;color:#000;left:1520.00px;width:600px;text-align:center;-webkit-text-stroke:0.1px #000;">=</div>
<div style="position:absolute;top:1021.82px;font-size:17.7px;line-height:17.7px;white-space:nowrap;color:#000;right:400.30px;-webkit-text-stroke:0.1px #000;">0.00</div>
<div style="position:absolute;top:1021.82px;font-size:17.7px;line-height:17.7px;white-space:nowrap;color:#000;left:1997.00px;-webkit-text-stroke:0.1px #000;">cf</div>
<div style="position:absolute;top:1021.82px;font-size:17.7px;line-height:17.7px;white-space:nowrap;color:#000;right:228.30px;-webkit-text-stroke:0.1px #000;">0.00</div>
<div style="position:absolute;top:1021.82px;font-size:17.7px;line-height:17.7px;white-space:nowrap;color:#000;left:2169.00px;-webkit-text-stroke:0.1px #000;">cy</div>
<div style="position:absolute;top:1049.82px;font-size:17.7px;line-height:17.7px;white-space:nowrap;color:#000;left:-208.00px;width:600px;text-align:center;-webkit-text-stroke:0.1px #000;">22</div>
<div style="position:absolute;top:1049.82px;font-size:17.7px;line-height:17.7px;white-space:nowrap;color:#000;left:221.00px;width:600px;text-align:center;transform:scaleX(1.12);transform-origin:center 0;-webkit-text-stroke:0.1px #000;">ft</div>
<div style="position:absolute;top:1049.82px;font-size:17.7px;line-height:17.7px;white-space:nowrap;color:#000;left:613.00px;-webkit-text-stroke:0.1px #000;">in</div>
<div style="position:absolute;top:1051.38px;font-size:15.5px;line-height:15.5px;white-space:nowrap;color:#000;left:461.50px;width:600px;text-align:center;-webkit-text-stroke:0.1px #000;">x</div>
<div style="position:absolute;top:1049.82px;font-size:17.7px;line-height:17.7px;white-space:nowrap;color:#000;left:589.00px;width:600px;text-align:center;transform:scaleX(1.12);transform-origin:center 0;-webkit-text-stroke:0.1px #000;">ft</div>
<div style="position:absolute;top:1049.82px;font-size:17.7px;line-height:17.7px;white-space:nowrap;color:#000;left:981.00px;-webkit-text-stroke:0.1px #000;">in</div>
<div style="position:absolute;top:1049.82px;font-size:17.7px;line-height:17.7px;white-space:nowrap;color:#000;left:754.00px;width:600px;text-align:center;-webkit-text-stroke:0.1px #000;">=</div>
<div style="position:absolute;top:1049.82px;font-size:17.7px;line-height:17.7px;white-space:nowrap;color:#000;right:1185.30px;-webkit-text-stroke:0.1px #000;">0.00</div>
<div style="position:absolute;top:1049.82px;font-size:17.7px;line-height:17.7px;white-space:nowrap;color:#000;left:1212.00px;-webkit-text-stroke:0.1px #000;">sf</div>
<div style="position:absolute;top:1049.82px;font-size:17.7px;line-height:17.7px;white-space:nowrap;color:#000;right:1012.30px;-webkit-text-stroke:0.1px #000;">0.00</div>
<div style="position:absolute;top:1049.82px;font-size:17.7px;line-height:17.7px;white-space:nowrap;color:#000;left:1385.00px;-webkit-text-stroke:0.1px #000;">sy</div>
<div style="position:absolute;top:1051.38px;font-size:15.5px;line-height:15.5px;white-space:nowrap;color:#000;left:1227.50px;width:600px;text-align:center;-webkit-text-stroke:0.1px #000;">x</div>
<div style="position:absolute;top:1049.82px;font-size:17.7px;line-height:17.7px;white-space:nowrap;color:#000;left:1355.00px;width:600px;text-align:center;transform:scaleX(1.12);transform-origin:center 0;-webkit-text-stroke:0.1px #000;">ft</div>
<div style="position:absolute;top:1049.82px;font-size:17.7px;line-height:17.7px;white-space:nowrap;color:#000;left:1747.00px;-webkit-text-stroke:0.1px #000;">in</div>
<div style="position:absolute;top:1049.82px;font-size:17.7px;line-height:17.7px;white-space:nowrap;color:#000;left:1520.00px;width:600px;text-align:center;-webkit-text-stroke:0.1px #000;">=</div>
<div style="position:absolute;top:1049.82px;font-size:17.7px;line-height:17.7px;white-space:nowrap;color:#000;right:400.30px;-webkit-text-stroke:0.1px #000;">0.00</div>
<div style="position:absolute;top:1049.82px;font-size:17.7px;line-height:17.7px;white-space:nowrap;color:#000;left:1997.00px;-webkit-text-stroke:0.1px #000;">cf</div>
<div style="position:absolute;top:1049.82px;font-size:17.7px;line-height:17.7px;white-space:nowrap;color:#000;right:228.30px;-webkit-text-stroke:0.1px #000;">0.00</div>
<div style="position:absolute;top:1049.82px;font-size:17.7px;line-height:17.7px;white-space:nowrap;color:#000;left:2169.00px;-webkit-text-stroke:0.1px #000;">cy</div>
<div style="position:absolute;top:1077.82px;font-size:17.7px;line-height:17.7px;white-space:nowrap;color:#000;left:-208.00px;width:600px;text-align:center;-webkit-text-stroke:0.1px #000;">23</div>
<div style="position:absolute;top:1077.82px;font-size:17.7px;line-height:17.7px;white-space:nowrap;color:#000;left:221.00px;width:600px;text-align:center;transform:scaleX(1.12);transform-origin:center 0;-webkit-text-stroke:0.1px #000;">ft</div>
<div style="position:absolute;top:1077.82px;font-size:17.7px;line-height:17.7px;white-space:nowrap;color:#000;left:613.00px;-webkit-text-stroke:0.1px #000;">in</div>
<div style="position:absolute;top:1079.38px;font-size:15.5px;line-height:15.5px;white-space:nowrap;color:#000;left:461.50px;width:600px;text-align:center;-webkit-text-stroke:0.1px #000;">x</div>
<div style="position:absolute;top:1077.82px;font-size:17.7px;line-height:17.7px;white-space:nowrap;color:#000;left:589.00px;width:600px;text-align:center;transform:scaleX(1.12);transform-origin:center 0;-webkit-text-stroke:0.1px #000;">ft</div>
<div style="position:absolute;top:1077.82px;font-size:17.7px;line-height:17.7px;white-space:nowrap;color:#000;left:981.00px;-webkit-text-stroke:0.1px #000;">in</div>
<div style="position:absolute;top:1077.82px;font-size:17.7px;line-height:17.7px;white-space:nowrap;color:#000;left:754.00px;width:600px;text-align:center;-webkit-text-stroke:0.1px #000;">=</div>
<div style="position:absolute;top:1077.82px;font-size:17.7px;line-height:17.7px;white-space:nowrap;color:#000;right:1185.30px;-webkit-text-stroke:0.1px #000;">0.00</div>
<div style="position:absolute;top:1077.82px;font-size:17.7px;line-height:17.7px;white-space:nowrap;color:#000;left:1212.00px;-webkit-text-stroke:0.1px #000;">sf</div>
<div style="position:absolute;top:1077.82px;font-size:17.7px;line-height:17.7px;white-space:nowrap;color:#000;right:1012.30px;-webkit-text-stroke:0.1px #000;">0.00</div>
<div style="position:absolute;top:1077.82px;font-size:17.7px;line-height:17.7px;white-space:nowrap;color:#000;left:1385.00px;-webkit-text-stroke:0.1px #000;">sy</div>
<div style="position:absolute;top:1079.38px;font-size:15.5px;line-height:15.5px;white-space:nowrap;color:#000;left:1227.50px;width:600px;text-align:center;-webkit-text-stroke:0.1px #000;">x</div>
<div style="position:absolute;top:1077.82px;font-size:17.7px;line-height:17.7px;white-space:nowrap;color:#000;left:1355.00px;width:600px;text-align:center;transform:scaleX(1.12);transform-origin:center 0;-webkit-text-stroke:0.1px #000;">ft</div>
<div style="position:absolute;top:1077.82px;font-size:17.7px;line-height:17.7px;white-space:nowrap;color:#000;left:1747.00px;-webkit-text-stroke:0.1px #000;">in</div>
<div style="position:absolute;top:1077.82px;font-size:17.7px;line-height:17.7px;white-space:nowrap;color:#000;left:1520.00px;width:600px;text-align:center;-webkit-text-stroke:0.1px #000;">=</div>
<div style="position:absolute;top:1077.82px;font-size:17.7px;line-height:17.7px;white-space:nowrap;color:#000;right:400.30px;-webkit-text-stroke:0.1px #000;">0.00</div>
<div style="position:absolute;top:1077.82px;font-size:17.7px;line-height:17.7px;white-space:nowrap;color:#000;left:1997.00px;-webkit-text-stroke:0.1px #000;">cf</div>
<div style="position:absolute;top:1077.82px;font-size:17.7px;line-height:17.7px;white-space:nowrap;color:#000;right:228.30px;-webkit-text-stroke:0.1px #000;">0.00</div>
<div style="position:absolute;top:1077.82px;font-size:17.7px;line-height:17.7px;white-space:nowrap;color:#000;left:2169.00px;-webkit-text-stroke:0.1px #000;">cy</div>
<div style="position:absolute;top:1105.82px;font-size:17.7px;line-height:17.7px;white-space:nowrap;color:#000;left:-208.00px;width:600px;text-align:center;-webkit-text-stroke:0.1px #000;">24</div>
<div style="position:absolute;top:1105.82px;font-size:17.7px;line-height:17.7px;white-space:nowrap;color:#000;left:221.00px;width:600px;text-align:center;transform:scaleX(1.12);transform-origin:center 0;-webkit-text-stroke:0.1px #000;">ft</div>
<div style="position:absolute;top:1105.82px;font-size:17.7px;line-height:17.7px;white-space:nowrap;color:#000;left:613.00px;-webkit-text-stroke:0.1px #000;">in</div>
<div style="position:absolute;top:1107.38px;font-size:15.5px;line-height:15.5px;white-space:nowrap;color:#000;left:461.50px;width:600px;text-align:center;-webkit-text-stroke:0.1px #000;">x</div>
<div style="position:absolute;top:1105.82px;font-size:17.7px;line-height:17.7px;white-space:nowrap;color:#000;left:589.00px;width:600px;text-align:center;transform:scaleX(1.12);transform-origin:center 0;-webkit-text-stroke:0.1px #000;">ft</div>
<div style="position:absolute;top:1105.82px;font-size:17.7px;line-height:17.7px;white-space:nowrap;color:#000;left:981.00px;-webkit-text-stroke:0.1px #000;">in</div>
<div style="position:absolute;top:1105.82px;font-size:17.7px;line-height:17.7px;white-space:nowrap;color:#000;left:754.00px;width:600px;text-align:center;-webkit-text-stroke:0.1px #000;">=</div>
<div style="position:absolute;top:1105.82px;font-size:17.7px;line-height:17.7px;white-space:nowrap;color:#000;right:1185.30px;-webkit-text-stroke:0.1px #000;">0.00</div>
<div style="position:absolute;top:1105.82px;font-size:17.7px;line-height:17.7px;white-space:nowrap;color:#000;left:1212.00px;-webkit-text-stroke:0.1px #000;">sf</div>
<div style="position:absolute;top:1105.82px;font-size:17.7px;line-height:17.7px;white-space:nowrap;color:#000;right:1012.30px;-webkit-text-stroke:0.1px #000;">0.00</div>
<div style="position:absolute;top:1105.82px;font-size:17.7px;line-height:17.7px;white-space:nowrap;color:#000;left:1385.00px;-webkit-text-stroke:0.1px #000;">sy</div>
<div style="position:absolute;top:1107.38px;font-size:15.5px;line-height:15.5px;white-space:nowrap;color:#000;left:1227.50px;width:600px;text-align:center;-webkit-text-stroke:0.1px #000;">x</div>
<div style="position:absolute;top:1105.82px;font-size:17.7px;line-height:17.7px;white-space:nowrap;color:#000;left:1355.00px;width:600px;text-align:center;transform:scaleX(1.12);transform-origin:center 0;-webkit-text-stroke:0.1px #000;">ft</div>
<div style="position:absolute;top:1105.82px;font-size:17.7px;line-height:17.7px;white-space:nowrap;color:#000;left:1747.00px;-webkit-text-stroke:0.1px #000;">in</div>
<div style="position:absolute;top:1105.82px;font-size:17.7px;line-height:17.7px;white-space:nowrap;color:#000;left:1520.00px;width:600px;text-align:center;-webkit-text-stroke:0.1px #000;">=</div>
<div style="position:absolute;top:1105.82px;font-size:17.7px;line-height:17.7px;white-space:nowrap;color:#000;right:400.30px;-webkit-text-stroke:0.1px #000;">0.00</div>
<div style="position:absolute;top:1105.82px;font-size:17.7px;line-height:17.7px;white-space:nowrap;color:#000;left:1997.00px;-webkit-text-stroke:0.1px #000;">cf</div>
<div style="position:absolute;top:1105.82px;font-size:17.7px;line-height:17.7px;white-space:nowrap;color:#000;right:228.30px;-webkit-text-stroke:0.1px #000;">0.00</div>
<div style="position:absolute;top:1105.82px;font-size:17.7px;line-height:17.7px;white-space:nowrap;color:#000;left:2169.00px;-webkit-text-stroke:0.1px #000;">cy</div>
<div style="position:absolute;top:1133.82px;font-size:17.7px;line-height:17.7px;white-space:nowrap;color:#000;left:-208.00px;width:600px;text-align:center;-webkit-text-stroke:0.1px #000;">25</div>
<div style="position:absolute;top:1133.82px;font-size:17.7px;line-height:17.7px;white-space:nowrap;color:#000;left:221.00px;width:600px;text-align:center;transform:scaleX(1.12);transform-origin:center 0;-webkit-text-stroke:0.1px #000;">ft</div>
<div style="position:absolute;top:1133.82px;font-size:17.7px;line-height:17.7px;white-space:nowrap;color:#000;left:613.00px;-webkit-text-stroke:0.1px #000;">in</div>
<div style="position:absolute;top:1135.38px;font-size:15.5px;line-height:15.5px;white-space:nowrap;color:#000;left:461.50px;width:600px;text-align:center;-webkit-text-stroke:0.1px #000;">x</div>
<div style="position:absolute;top:1133.82px;font-size:17.7px;line-height:17.7px;white-space:nowrap;color:#000;left:589.00px;width:600px;text-align:center;transform:scaleX(1.12);transform-origin:center 0;-webkit-text-stroke:0.1px #000;">ft</div>
<div style="position:absolute;top:1133.82px;font-size:17.7px;line-height:17.7px;white-space:nowrap;color:#000;left:981.00px;-webkit-text-stroke:0.1px #000;">in</div>
<div style="position:absolute;top:1133.82px;font-size:17.7px;line-height:17.7px;white-space:nowrap;color:#000;left:754.00px;width:600px;text-align:center;-webkit-text-stroke:0.1px #000;">=</div>
<div style="position:absolute;top:1133.82px;font-size:17.7px;line-height:17.7px;white-space:nowrap;color:#000;right:1185.30px;-webkit-text-stroke:0.1px #000;">0.00</div>
<div style="position:absolute;top:1133.82px;font-size:17.7px;line-height:17.7px;white-space:nowrap;color:#000;left:1212.00px;-webkit-text-stroke:0.1px #000;">sf</div>
<div style="position:absolute;top:1133.82px;font-size:17.7px;line-height:17.7px;white-space:nowrap;color:#000;right:1012.30px;-webkit-text-stroke:0.1px #000;">0.00</div>
<div style="position:absolute;top:1133.82px;font-size:17.7px;line-height:17.7px;white-space:nowrap;color:#000;left:1385.00px;-webkit-text-stroke:0.1px #000;">sy</div>
<div style="position:absolute;top:1135.38px;font-size:15.5px;line-height:15.5px;white-space:nowrap;color:#000;left:1227.50px;width:600px;text-align:center;-webkit-text-stroke:0.1px #000;">x</div>
<div style="position:absolute;top:1133.82px;font-size:17.7px;line-height:17.7px;white-space:nowrap;color:#000;left:1355.00px;width:600px;text-align:center;transform:scaleX(1.12);transform-origin:center 0;-webkit-text-stroke:0.1px #000;">ft</div>
<div style="position:absolute;top:1133.82px;font-size:17.7px;line-height:17.7px;white-space:nowrap;color:#000;left:1747.00px;-webkit-text-stroke:0.1px #000;">in</div>
<div style="position:absolute;top:1133.82px;font-size:17.7px;line-height:17.7px;white-space:nowrap;color:#000;left:1520.00px;width:600px;text-align:center;-webkit-text-stroke:0.1px #000;">=</div>
<div style="position:absolute;top:1133.82px;font-size:17.7px;line-height:17.7px;white-space:nowrap;color:#000;right:400.30px;-webkit-text-stroke:0.1px #000;">0.00</div>
<div style="position:absolute;top:1133.82px;font-size:17.7px;line-height:17.7px;white-space:nowrap;color:#000;left:1997.00px;-webkit-text-stroke:0.1px #000;">cf</div>
<div style="position:absolute;top:1133.82px;font-size:17.7px;line-height:17.7px;white-space:nowrap;color:#000;right:228.30px;-webkit-text-stroke:0.1px #000;">0.00</div>
<div style="position:absolute;top:1133.82px;font-size:17.7px;line-height:17.7px;white-space:nowrap;color:#000;left:2169.00px;-webkit-text-stroke:0.1px #000;">cy</div>
<div style="position:absolute;top:1161.82px;font-size:17.7px;line-height:17.7px;white-space:nowrap;color:#000;left:221.00px;width:600px;text-align:center;transform:scaleX(1.12);transform-origin:center 0;-webkit-text-stroke:0.1px #000;">ft</div>
<div style="position:absolute;top:1161.82px;font-size:17.7px;line-height:17.7px;white-space:nowrap;color:#000;left:613.00px;-webkit-text-stroke:0.1px #000;">in</div>
<div style="position:absolute;top:1163.38px;font-size:15.5px;line-height:15.5px;white-space:nowrap;color:#000;left:461.50px;width:600px;text-align:center;-webkit-text-stroke:0.1px #000;">x</div>
<div style="position:absolute;top:1161.82px;font-size:17.7px;line-height:17.7px;white-space:nowrap;color:#000;left:589.00px;width:600px;text-align:center;transform:scaleX(1.12);transform-origin:center 0;-webkit-text-stroke:0.1px #000;">ft</div>
<div style="position:absolute;top:1161.82px;font-size:17.7px;line-height:17.7px;white-space:nowrap;color:#000;left:981.00px;-webkit-text-stroke:0.1px #000;">in</div>
<div style="position:absolute;top:1161.82px;font-size:17.7px;line-height:17.7px;white-space:nowrap;color:#000;left:754.00px;width:600px;text-align:center;-webkit-text-stroke:0.1px #000;">=</div>
<div style="position:absolute;top:1161.82px;font-size:17.7px;line-height:17.7px;white-space:nowrap;color:#000;right:1185.30px;-webkit-text-stroke:0.1px #000;">0.00</div>
<div style="position:absolute;top:1161.82px;font-size:17.7px;line-height:17.7px;white-space:nowrap;color:#000;left:1212.00px;-webkit-text-stroke:0.1px #000;">sf</div>
<div style="position:absolute;top:1161.82px;font-size:17.7px;line-height:17.7px;white-space:nowrap;color:#000;right:1012.30px;-webkit-text-stroke:0.1px #000;">0.00</div>
<div style="position:absolute;top:1161.82px;font-size:17.7px;line-height:17.7px;white-space:nowrap;color:#000;left:1385.00px;-webkit-text-stroke:0.1px #000;">sy</div>
<div style="position:absolute;top:1163.38px;font-size:15.5px;line-height:15.5px;white-space:nowrap;color:#000;left:1227.50px;width:600px;text-align:center;-webkit-text-stroke:0.1px #000;">x</div>
<div style="position:absolute;top:1161.82px;font-size:17.7px;line-height:17.7px;white-space:nowrap;color:#000;left:1355.00px;width:600px;text-align:center;transform:scaleX(1.12);transform-origin:center 0;-webkit-text-stroke:0.1px #000;">ft</div>
<div style="position:absolute;top:1161.82px;font-size:17.7px;line-height:17.7px;white-space:nowrap;color:#000;left:1747.00px;-webkit-text-stroke:0.1px #000;">in</div>
<div style="position:absolute;top:1161.82px;font-size:17.7px;line-height:17.7px;white-space:nowrap;color:#000;left:1520.00px;width:600px;text-align:center;-webkit-text-stroke:0.1px #000;">=</div>
<div style="position:absolute;top:1161.82px;font-size:17.7px;line-height:17.7px;white-space:nowrap;color:#000;right:400.30px;-webkit-text-stroke:0.1px #000;">0.00</div>
<div style="position:absolute;top:1161.82px;font-size:17.7px;line-height:17.7px;white-space:nowrap;color:#000;left:1997.00px;-webkit-text-stroke:0.1px #000;">cf</div>
<div style="position:absolute;top:1161.82px;font-size:17.7px;line-height:17.7px;white-space:nowrap;color:#000;right:228.30px;-webkit-text-stroke:0.1px #000;">0.00</div>
<div style="position:absolute;top:1161.82px;font-size:17.7px;line-height:17.7px;white-space:nowrap;color:#000;left:2169.00px;-webkit-text-stroke:0.1px #000;">cy</div>
<div style="position:absolute;top:1189.82px;font-size:17.7px;line-height:17.7px;white-space:nowrap;color:#000;left:221.00px;width:600px;text-align:center;transform:scaleX(1.12);transform-origin:center 0;-webkit-text-stroke:0.1px #000;">ft</div>
<div style="position:absolute;top:1189.82px;font-size:17.7px;line-height:17.7px;white-space:nowrap;color:#000;left:613.00px;-webkit-text-stroke:0.1px #000;">in</div>
<div style="position:absolute;top:1191.38px;font-size:15.5px;line-height:15.5px;white-space:nowrap;color:#000;left:461.50px;width:600px;text-align:center;-webkit-text-stroke:0.1px #000;">x</div>
<div style="position:absolute;top:1189.82px;font-size:17.7px;line-height:17.7px;white-space:nowrap;color:#000;left:589.00px;width:600px;text-align:center;transform:scaleX(1.12);transform-origin:center 0;-webkit-text-stroke:0.1px #000;">ft</div>
<div style="position:absolute;top:1189.82px;font-size:17.7px;line-height:17.7px;white-space:nowrap;color:#000;left:981.00px;-webkit-text-stroke:0.1px #000;">in</div>
<div style="position:absolute;top:1189.82px;font-size:17.7px;line-height:17.7px;white-space:nowrap;color:#000;left:754.00px;width:600px;text-align:center;-webkit-text-stroke:0.1px #000;">=</div>
<div style="position:absolute;top:1189.82px;font-size:17.7px;line-height:17.7px;white-space:nowrap;color:#000;right:1185.30px;-webkit-text-stroke:0.1px #000;">0.00</div>
<div style="position:absolute;top:1189.82px;font-size:17.7px;line-height:17.7px;white-space:nowrap;color:#000;left:1212.00px;-webkit-text-stroke:0.1px #000;">sf</div>
<div style="position:absolute;top:1189.82px;font-size:17.7px;line-height:17.7px;white-space:nowrap;color:#000;right:1012.30px;-webkit-text-stroke:0.1px #000;">0.00</div>
<div style="position:absolute;top:1189.82px;font-size:17.7px;line-height:17.7px;white-space:nowrap;color:#000;left:1385.00px;-webkit-text-stroke:0.1px #000;">sy</div>
<div style="position:absolute;top:1191.38px;font-size:15.5px;line-height:15.5px;white-space:nowrap;color:#000;left:1227.50px;width:600px;text-align:center;-webkit-text-stroke:0.1px #000;">x</div>
<div style="position:absolute;top:1189.82px;font-size:17.7px;line-height:17.7px;white-space:nowrap;color:#000;left:1355.00px;width:600px;text-align:center;transform:scaleX(1.12);transform-origin:center 0;-webkit-text-stroke:0.1px #000;">ft</div>
<div style="position:absolute;top:1189.82px;font-size:17.7px;line-height:17.7px;white-space:nowrap;color:#000;left:1747.00px;-webkit-text-stroke:0.1px #000;">in</div>
<div style="position:absolute;top:1189.82px;font-size:17.7px;line-height:17.7px;white-space:nowrap;color:#000;left:1520.00px;width:600px;text-align:center;-webkit-text-stroke:0.1px #000;">=</div>
<div style="position:absolute;top:1189.82px;font-size:17.7px;line-height:17.7px;white-space:nowrap;color:#000;right:400.30px;-webkit-text-stroke:0.1px #000;">0.00</div>
<div style="position:absolute;top:1189.82px;font-size:17.7px;line-height:17.7px;white-space:nowrap;color:#000;left:1997.00px;-webkit-text-stroke:0.1px #000;">cf</div>
<div style="position:absolute;top:1189.82px;font-size:17.7px;line-height:17.7px;white-space:nowrap;color:#000;right:228.30px;-webkit-text-stroke:0.1px #000;">0.00</div>
<div style="position:absolute;top:1189.82px;font-size:17.7px;line-height:17.7px;white-space:nowrap;color:#000;left:2169.00px;-webkit-text-stroke:0.1px #000;">cy</div>
<div style="position:absolute;top:1217.82px;font-size:17.7px;line-height:17.7px;white-space:nowrap;color:#000;left:221.00px;width:600px;text-align:center;transform:scaleX(1.12);transform-origin:center 0;-webkit-text-stroke:0.1px #000;">ft</div>
<div style="position:absolute;top:1217.82px;font-size:17.7px;line-height:17.7px;white-space:nowrap;color:#000;left:613.00px;-webkit-text-stroke:0.1px #000;">in</div>
<div style="position:absolute;top:1219.38px;font-size:15.5px;line-height:15.5px;white-space:nowrap;color:#000;left:461.50px;width:600px;text-align:center;-webkit-text-stroke:0.1px #000;">x</div>
<div style="position:absolute;top:1217.82px;font-size:17.7px;line-height:17.7px;white-space:nowrap;color:#000;left:589.00px;width:600px;text-align:center;transform:scaleX(1.12);transform-origin:center 0;-webkit-text-stroke:0.1px #000;">ft</div>
<div style="position:absolute;top:1217.82px;font-size:17.7px;line-height:17.7px;white-space:nowrap;color:#000;left:981.00px;-webkit-text-stroke:0.1px #000;">in</div>
<div style="position:absolute;top:1217.82px;font-size:17.7px;line-height:17.7px;white-space:nowrap;color:#000;left:754.00px;width:600px;text-align:center;-webkit-text-stroke:0.1px #000;">=</div>
<div style="position:absolute;top:1217.82px;font-size:17.7px;line-height:17.7px;white-space:nowrap;color:#000;right:1185.30px;-webkit-text-stroke:0.1px #000;">0.00</div>
<div style="position:absolute;top:1217.82px;font-size:17.7px;line-height:17.7px;white-space:nowrap;color:#000;left:1212.00px;-webkit-text-stroke:0.1px #000;">sf</div>
<div style="position:absolute;top:1217.82px;font-size:17.7px;line-height:17.7px;white-space:nowrap;color:#000;right:1012.30px;-webkit-text-stroke:0.1px #000;">0.00</div>
<div style="position:absolute;top:1217.82px;font-size:17.7px;line-height:17.7px;white-space:nowrap;color:#000;left:1385.00px;-webkit-text-stroke:0.1px #000;">sy</div>
<div style="position:absolute;top:1219.38px;font-size:15.5px;line-height:15.5px;white-space:nowrap;color:#000;left:1227.50px;width:600px;text-align:center;-webkit-text-stroke:0.1px #000;">x</div>
<div style="position:absolute;top:1217.82px;font-size:17.7px;line-height:17.7px;white-space:nowrap;color:#000;left:1355.00px;width:600px;text-align:center;transform:scaleX(1.12);transform-origin:center 0;-webkit-text-stroke:0.1px #000;">ft</div>
<div style="position:absolute;top:1217.82px;font-size:17.7px;line-height:17.7px;white-space:nowrap;color:#000;left:1747.00px;-webkit-text-stroke:0.1px #000;">in</div>
<div style="position:absolute;top:1217.82px;font-size:17.7px;line-height:17.7px;white-space:nowrap;color:#000;left:1520.00px;width:600px;text-align:center;-webkit-text-stroke:0.1px #000;">=</div>
<div style="position:absolute;top:1217.82px;font-size:17.7px;line-height:17.7px;white-space:nowrap;color:#000;right:400.30px;-webkit-text-stroke:0.1px #000;">0.00</div>
<div style="position:absolute;top:1217.82px;font-size:17.7px;line-height:17.7px;white-space:nowrap;color:#000;left:1997.00px;-webkit-text-stroke:0.1px #000;">cf</div>
<div style="position:absolute;top:1217.82px;font-size:17.7px;line-height:17.7px;white-space:nowrap;color:#000;right:228.30px;-webkit-text-stroke:0.1px #000;">0.00</div>
<div style="position:absolute;top:1217.82px;font-size:17.7px;line-height:17.7px;white-space:nowrap;color:#000;left:2169.00px;-webkit-text-stroke:0.1px #000;">cy</div>
<div style="position:absolute;top:1245.82px;font-size:17.7px;line-height:17.7px;white-space:nowrap;color:#000;left:221.00px;width:600px;text-align:center;transform:scaleX(1.12);transform-origin:center 0;-webkit-text-stroke:0.1px #000;">ft</div>
<div style="position:absolute;top:1245.82px;font-size:17.7px;line-height:17.7px;white-space:nowrap;color:#000;left:613.00px;-webkit-text-stroke:0.1px #000;">in</div>
<div style="position:absolute;top:1247.38px;font-size:15.5px;line-height:15.5px;white-space:nowrap;color:#000;left:461.50px;width:600px;text-align:center;-webkit-text-stroke:0.1px #000;">x</div>
<div style="position:absolute;top:1245.82px;font-size:17.7px;line-height:17.7px;white-space:nowrap;color:#000;left:589.00px;width:600px;text-align:center;transform:scaleX(1.12);transform-origin:center 0;-webkit-text-stroke:0.1px #000;">ft</div>
<div style="position:absolute;top:1245.82px;font-size:17.7px;line-height:17.7px;white-space:nowrap;color:#000;left:981.00px;-webkit-text-stroke:0.1px #000;">in</div>
<div style="position:absolute;top:1245.82px;font-size:17.7px;line-height:17.7px;white-space:nowrap;color:#000;left:754.00px;width:600px;text-align:center;-webkit-text-stroke:0.1px #000;">=</div>
<div style="position:absolute;top:1245.82px;font-size:17.7px;line-height:17.7px;white-space:nowrap;color:#000;right:1185.30px;-webkit-text-stroke:0.1px #000;">0.00</div>
<div style="position:absolute;top:1245.82px;font-size:17.7px;line-height:17.7px;white-space:nowrap;color:#000;left:1212.00px;-webkit-text-stroke:0.1px #000;">sf</div>
<div style="position:absolute;top:1245.82px;font-size:17.7px;line-height:17.7px;white-space:nowrap;color:#000;right:1012.30px;-webkit-text-stroke:0.1px #000;">0.00</div>
<div style="position:absolute;top:1245.82px;font-size:17.7px;line-height:17.7px;white-space:nowrap;color:#000;left:1385.00px;-webkit-text-stroke:0.1px #000;">sy</div>
<div style="position:absolute;top:1247.38px;font-size:15.5px;line-height:15.5px;white-space:nowrap;color:#000;left:1227.50px;width:600px;text-align:center;-webkit-text-stroke:0.1px #000;">x</div>
<div style="position:absolute;top:1245.82px;font-size:17.7px;line-height:17.7px;white-space:nowrap;color:#000;left:1355.00px;width:600px;text-align:center;transform:scaleX(1.12);transform-origin:center 0;-webkit-text-stroke:0.1px #000;">ft</div>
<div style="position:absolute;top:1245.82px;font-size:17.7px;line-height:17.7px;white-space:nowrap;color:#000;left:1747.00px;-webkit-text-stroke:0.1px #000;">in</div>
<div style="position:absolute;top:1245.82px;font-size:17.7px;line-height:17.7px;white-space:nowrap;color:#000;left:1520.00px;width:600px;text-align:center;-webkit-text-stroke:0.1px #000;">=</div>
<div style="position:absolute;top:1245.82px;font-size:17.7px;line-height:17.7px;white-space:nowrap;color:#000;right:400.30px;-webkit-text-stroke:0.1px #000;">0.00</div>
<div style="position:absolute;top:1245.82px;font-size:17.7px;line-height:17.7px;white-space:nowrap;color:#000;left:1997.00px;-webkit-text-stroke:0.1px #000;">cf</div>
<div style="position:absolute;top:1245.82px;font-size:17.7px;line-height:17.7px;white-space:nowrap;color:#000;right:228.30px;-webkit-text-stroke:0.1px #000;">0.00</div>
<div style="position:absolute;top:1245.82px;font-size:17.7px;line-height:17.7px;white-space:nowrap;color:#000;left:2169.00px;-webkit-text-stroke:0.1px #000;">cy</div>
<div style="position:absolute;top:1273.82px;font-size:17.7px;line-height:17.7px;white-space:nowrap;color:#000;left:221.00px;width:600px;text-align:center;transform:scaleX(1.12);transform-origin:center 0;-webkit-text-stroke:0.1px #000;">ft</div>
<div style="position:absolute;top:1273.82px;font-size:17.7px;line-height:17.7px;white-space:nowrap;color:#000;left:613.00px;-webkit-text-stroke:0.1px #000;">in</div>
<div style="position:absolute;top:1275.38px;font-size:15.5px;line-height:15.5px;white-space:nowrap;color:#000;left:461.50px;width:600px;text-align:center;-webkit-text-stroke:0.1px #000;">x</div>
<div style="position:absolute;top:1273.82px;font-size:17.7px;line-height:17.7px;white-space:nowrap;color:#000;left:589.00px;width:600px;text-align:center;transform:scaleX(1.12);transform-origin:center 0;-webkit-text-stroke:0.1px #000;">ft</div>
<div style="position:absolute;top:1273.82px;font-size:17.7px;line-height:17.7px;white-space:nowrap;color:#000;left:981.00px;-webkit-text-stroke:0.1px #000;">in</div>
<div style="position:absolute;top:1273.82px;font-size:17.7px;line-height:17.7px;white-space:nowrap;color:#000;left:754.00px;width:600px;text-align:center;-webkit-text-stroke:0.1px #000;">=</div>
<div style="position:absolute;top:1273.82px;font-size:17.7px;line-height:17.7px;white-space:nowrap;color:#000;right:1185.30px;-webkit-text-stroke:0.1px #000;">0.00</div>
<div style="position:absolute;top:1273.82px;font-size:17.7px;line-height:17.7px;white-space:nowrap;color:#000;left:1212.00px;-webkit-text-stroke:0.1px #000;">sf</div>
<div style="position:absolute;top:1273.82px;font-size:17.7px;line-height:17.7px;white-space:nowrap;color:#000;right:1012.30px;-webkit-text-stroke:0.1px #000;">0.00</div>
<div style="position:absolute;top:1273.82px;font-size:17.7px;line-height:17.7px;white-space:nowrap;color:#000;left:1385.00px;-webkit-text-stroke:0.1px #000;">sy</div>
<div style="position:absolute;top:1275.38px;font-size:15.5px;line-height:15.5px;white-space:nowrap;color:#000;left:1227.50px;width:600px;text-align:center;-webkit-text-stroke:0.1px #000;">x</div>
<div style="position:absolute;top:1273.82px;font-size:17.7px;line-height:17.7px;white-space:nowrap;color:#000;left:1355.00px;width:600px;text-align:center;transform:scaleX(1.12);transform-origin:center 0;-webkit-text-stroke:0.1px #000;">ft</div>
<div style="position:absolute;top:1273.82px;font-size:17.7px;line-height:17.7px;white-space:nowrap;color:#000;left:1747.00px;-webkit-text-stroke:0.1px #000;">in</div>
<div style="position:absolute;top:1273.82px;font-size:17.7px;line-height:17.7px;white-space:nowrap;color:#000;left:1520.00px;width:600px;text-align:center;-webkit-text-stroke:0.1px #000;">=</div>
<div style="position:absolute;top:1273.82px;font-size:17.7px;line-height:17.7px;white-space:nowrap;color:#000;right:400.30px;-webkit-text-stroke:0.1px #000;">0.00</div>
<div style="position:absolute;top:1273.82px;font-size:17.7px;line-height:17.7px;white-space:nowrap;color:#000;left:1997.00px;-webkit-text-stroke:0.1px #000;">cf</div>
<div style="position:absolute;top:1273.82px;font-size:17.7px;line-height:17.7px;white-space:nowrap;color:#000;right:228.30px;-webkit-text-stroke:0.1px #000;">0.00</div>
<div style="position:absolute;top:1273.82px;font-size:17.7px;line-height:17.7px;white-space:nowrap;color:#000;left:2169.00px;-webkit-text-stroke:0.1px #000;">cy</div>
<div style="position:absolute;top:1301.82px;font-size:17.7px;line-height:17.7px;white-space:nowrap;color:#000;left:221.00px;width:600px;text-align:center;transform:scaleX(1.12);transform-origin:center 0;-webkit-text-stroke:0.1px #000;">ft</div>
<div style="position:absolute;top:1301.82px;font-size:17.7px;line-height:17.7px;white-space:nowrap;color:#000;left:613.00px;-webkit-text-stroke:0.1px #000;">in</div>
<div style="position:absolute;top:1303.38px;font-size:15.5px;line-height:15.5px;white-space:nowrap;color:#000;left:461.50px;width:600px;text-align:center;-webkit-text-stroke:0.1px #000;">x</div>
<div style="position:absolute;top:1301.82px;font-size:17.7px;line-height:17.7px;white-space:nowrap;color:#000;left:589.00px;width:600px;text-align:center;transform:scaleX(1.12);transform-origin:center 0;-webkit-text-stroke:0.1px #000;">ft</div>
<div style="position:absolute;top:1301.82px;font-size:17.7px;line-height:17.7px;white-space:nowrap;color:#000;left:981.00px;-webkit-text-stroke:0.1px #000;">in</div>
<div style="position:absolute;top:1301.82px;font-size:17.7px;line-height:17.7px;white-space:nowrap;color:#000;left:754.00px;width:600px;text-align:center;-webkit-text-stroke:0.1px #000;">=</div>
<div style="position:absolute;top:1301.82px;font-size:17.7px;line-height:17.7px;white-space:nowrap;color:#000;right:1185.30px;-webkit-text-stroke:0.1px #000;">0.00</div>
<div style="position:absolute;top:1301.82px;font-size:17.7px;line-height:17.7px;white-space:nowrap;color:#000;left:1212.00px;-webkit-text-stroke:0.1px #000;">sf</div>
<div style="position:absolute;top:1301.82px;font-size:17.7px;line-height:17.7px;white-space:nowrap;color:#000;right:1012.30px;-webkit-text-stroke:0.1px #000;">0.00</div>
<div style="position:absolute;top:1301.82px;font-size:17.7px;line-height:17.7px;white-space:nowrap;color:#000;left:1385.00px;-webkit-text-stroke:0.1px #000;">sy</div>
<div style="position:absolute;top:1303.38px;font-size:15.5px;line-height:15.5px;white-space:nowrap;color:#000;left:1227.50px;width:600px;text-align:center;-webkit-text-stroke:0.1px #000;">x</div>
<div style="position:absolute;top:1301.82px;font-size:17.7px;line-height:17.7px;white-space:nowrap;color:#000;left:1355.00px;width:600px;text-align:center;transform:scaleX(1.12);transform-origin:center 0;-webkit-text-stroke:0.1px #000;">ft</div>
<div style="position:absolute;top:1301.82px;font-size:17.7px;line-height:17.7px;white-space:nowrap;color:#000;left:1747.00px;-webkit-text-stroke:0.1px #000;">in</div>
<div style="position:absolute;top:1301.82px;font-size:17.7px;line-height:17.7px;white-space:nowrap;color:#000;left:1520.00px;width:600px;text-align:center;-webkit-text-stroke:0.1px #000;">=</div>
<div style="position:absolute;top:1301.82px;font-size:17.7px;line-height:17.7px;white-space:nowrap;color:#000;right:400.30px;-webkit-text-stroke:0.1px #000;">0.00</div>
<div style="position:absolute;top:1301.82px;font-size:17.7px;line-height:17.7px;white-space:nowrap;color:#000;left:1997.00px;-webkit-text-stroke:0.1px #000;">cf</div>
<div style="position:absolute;top:1301.82px;font-size:17.7px;line-height:17.7px;white-space:nowrap;color:#000;right:228.30px;-webkit-text-stroke:0.1px #000;">0.00</div>
<div style="position:absolute;top:1301.82px;font-size:17.7px;line-height:17.7px;white-space:nowrap;color:#000;left:2169.00px;-webkit-text-stroke:0.1px #000;">cy</div>
<div style="position:absolute;top:1329.82px;font-size:17.7px;line-height:17.7px;white-space:nowrap;color:#000;left:221.00px;width:600px;text-align:center;transform:scaleX(1.12);transform-origin:center 0;-webkit-text-stroke:0.1px #000;">ft</div>
<div style="position:absolute;top:1329.82px;font-size:17.7px;line-height:17.7px;white-space:nowrap;color:#000;left:613.00px;-webkit-text-stroke:0.1px #000;">in</div>
<div style="position:absolute;top:1331.38px;font-size:15.5px;line-height:15.5px;white-space:nowrap;color:#000;left:461.50px;width:600px;text-align:center;-webkit-text-stroke:0.1px #000;">x</div>
<div style="position:absolute;top:1329.82px;font-size:17.7px;line-height:17.7px;white-space:nowrap;color:#000;left:589.00px;width:600px;text-align:center;transform:scaleX(1.12);transform-origin:center 0;-webkit-text-stroke:0.1px #000;">ft</div>
<div style="position:absolute;top:1329.82px;font-size:17.7px;line-height:17.7px;white-space:nowrap;color:#000;left:981.00px;-webkit-text-stroke:0.1px #000;">in</div>
<div style="position:absolute;top:1329.82px;font-size:17.7px;line-height:17.7px;white-space:nowrap;color:#000;left:754.00px;width:600px;text-align:center;-webkit-text-stroke:0.1px #000;">=</div>
<div style="position:absolute;top:1329.82px;font-size:17.7px;line-height:17.7px;white-space:nowrap;color:#000;right:1185.30px;-webkit-text-stroke:0.1px #000;">0.00</div>
<div style="position:absolute;top:1329.82px;font-size:17.7px;line-height:17.7px;white-space:nowrap;color:#000;left:1212.00px;-webkit-text-stroke:0.1px #000;">sf</div>
<div style="position:absolute;top:1329.82px;font-size:17.7px;line-height:17.7px;white-space:nowrap;color:#000;right:1012.30px;-webkit-text-stroke:0.1px #000;">0.00</div>
<div style="position:absolute;top:1329.82px;font-size:17.7px;line-height:17.7px;white-space:nowrap;color:#000;left:1385.00px;-webkit-text-stroke:0.1px #000;">sy</div>
<div style="position:absolute;top:1331.38px;font-size:15.5px;line-height:15.5px;white-space:nowrap;color:#000;left:1227.50px;width:600px;text-align:center;-webkit-text-stroke:0.1px #000;">x</div>
<div style="position:absolute;top:1329.82px;font-size:17.7px;line-height:17.7px;white-space:nowrap;color:#000;left:1355.00px;width:600px;text-align:center;transform:scaleX(1.12);transform-origin:center 0;-webkit-text-stroke:0.1px #000;">ft</div>
<div style="position:absolute;top:1329.82px;font-size:17.7px;line-height:17.7px;white-space:nowrap;color:#000;left:1747.00px;-webkit-text-stroke:0.1px #000;">in</div>
<div style="position:absolute;top:1329.82px;font-size:17.7px;line-height:17.7px;white-space:nowrap;color:#000;left:1520.00px;width:600px;text-align:center;-webkit-text-stroke:0.1px #000;">=</div>
<div style="position:absolute;top:1329.82px;font-size:17.7px;line-height:17.7px;white-space:nowrap;color:#000;right:400.30px;-webkit-text-stroke:0.1px #000;">0.00</div>
<div style="position:absolute;top:1329.82px;font-size:17.7px;line-height:17.7px;white-space:nowrap;color:#000;left:1997.00px;-webkit-text-stroke:0.1px #000;">cf</div>
<div style="position:absolute;top:1329.82px;font-size:17.7px;line-height:17.7px;white-space:nowrap;color:#000;right:228.30px;-webkit-text-stroke:0.1px #000;">0.00</div>
<div style="position:absolute;top:1329.82px;font-size:17.7px;line-height:17.7px;white-space:nowrap;color:#000;left:2169.00px;-webkit-text-stroke:0.1px #000;">cy</div>
<div style="position:absolute;top:1357.82px;font-size:17.7px;line-height:17.7px;white-space:nowrap;color:#000;left:221.00px;width:600px;text-align:center;transform:scaleX(1.12);transform-origin:center 0;-webkit-text-stroke:0.1px #000;">ft</div>
<div style="position:absolute;top:1357.82px;font-size:17.7px;line-height:17.7px;white-space:nowrap;color:#000;left:613.00px;-webkit-text-stroke:0.1px #000;">in</div>
<div style="position:absolute;top:1359.38px;font-size:15.5px;line-height:15.5px;white-space:nowrap;color:#000;left:461.50px;width:600px;text-align:center;-webkit-text-stroke:0.1px #000;">x</div>
<div style="position:absolute;top:1357.82px;font-size:17.7px;line-height:17.7px;white-space:nowrap;color:#000;left:589.00px;width:600px;text-align:center;transform:scaleX(1.12);transform-origin:center 0;-webkit-text-stroke:0.1px #000;">ft</div>
<div style="position:absolute;top:1357.82px;font-size:17.7px;line-height:17.7px;white-space:nowrap;color:#000;left:981.00px;-webkit-text-stroke:0.1px #000;">in</div>
<div style="position:absolute;top:1357.82px;font-size:17.7px;line-height:17.7px;white-space:nowrap;color:#000;left:754.00px;width:600px;text-align:center;-webkit-text-stroke:0.1px #000;">=</div>
<div style="position:absolute;top:1357.82px;font-size:17.7px;line-height:17.7px;white-space:nowrap;color:#000;right:1185.30px;-webkit-text-stroke:0.1px #000;">0.00</div>
<div style="position:absolute;top:1357.82px;font-size:17.7px;line-height:17.7px;white-space:nowrap;color:#000;left:1212.00px;-webkit-text-stroke:0.1px #000;">sf</div>
<div style="position:absolute;top:1357.82px;font-size:17.7px;line-height:17.7px;white-space:nowrap;color:#000;right:1012.30px;-webkit-text-stroke:0.1px #000;">0.00</div>
<div style="position:absolute;top:1357.82px;font-size:17.7px;line-height:17.7px;white-space:nowrap;color:#000;left:1385.00px;-webkit-text-stroke:0.1px #000;">sy</div>
<div style="position:absolute;top:1359.38px;font-size:15.5px;line-height:15.5px;white-space:nowrap;color:#000;left:1227.50px;width:600px;text-align:center;-webkit-text-stroke:0.1px #000;">x</div>
<div style="position:absolute;top:1357.82px;font-size:17.7px;line-height:17.7px;white-space:nowrap;color:#000;left:1355.00px;width:600px;text-align:center;transform:scaleX(1.12);transform-origin:center 0;-webkit-text-stroke:0.1px #000;">ft</div>
<div style="position:absolute;top:1357.82px;font-size:17.7px;line-height:17.7px;white-space:nowrap;color:#000;left:1747.00px;-webkit-text-stroke:0.1px #000;">in</div>
<div style="position:absolute;top:1357.82px;font-size:17.7px;line-height:17.7px;white-space:nowrap;color:#000;left:1520.00px;width:600px;text-align:center;-webkit-text-stroke:0.1px #000;">=</div>
<div style="position:absolute;top:1357.82px;font-size:17.7px;line-height:17.7px;white-space:nowrap;color:#000;right:400.30px;-webkit-text-stroke:0.1px #000;">0.00</div>
<div style="position:absolute;top:1357.82px;font-size:17.7px;line-height:17.7px;white-space:nowrap;color:#000;left:1997.00px;-webkit-text-stroke:0.1px #000;">cf</div>
<div style="position:absolute;top:1357.82px;font-size:17.7px;line-height:17.7px;white-space:nowrap;color:#000;right:228.30px;-webkit-text-stroke:0.1px #000;">0.00</div>
<div style="position:absolute;top:1357.82px;font-size:17.7px;line-height:17.7px;white-space:nowrap;color:#000;left:2169.00px;-webkit-text-stroke:0.1px #000;">cy</div>
<div style="position:absolute;top:1385.82px;font-size:17.7px;line-height:17.7px;white-space:nowrap;color:#000;left:221.00px;width:600px;text-align:center;transform:scaleX(1.12);transform-origin:center 0;-webkit-text-stroke:0.1px #000;">ft</div>
<div style="position:absolute;top:1385.82px;font-size:17.7px;line-height:17.7px;white-space:nowrap;color:#000;left:613.00px;-webkit-text-stroke:0.1px #000;">in</div>
<div style="position:absolute;top:1387.38px;font-size:15.5px;line-height:15.5px;white-space:nowrap;color:#000;left:461.50px;width:600px;text-align:center;-webkit-text-stroke:0.1px #000;">x</div>
<div style="position:absolute;top:1385.82px;font-size:17.7px;line-height:17.7px;white-space:nowrap;color:#000;left:589.00px;width:600px;text-align:center;transform:scaleX(1.12);transform-origin:center 0;-webkit-text-stroke:0.1px #000;">ft</div>
<div style="position:absolute;top:1385.82px;font-size:17.7px;line-height:17.7px;white-space:nowrap;color:#000;left:981.00px;-webkit-text-stroke:0.1px #000;">in</div>
<div style="position:absolute;top:1385.82px;font-size:17.7px;line-height:17.7px;white-space:nowrap;color:#000;left:754.00px;width:600px;text-align:center;-webkit-text-stroke:0.1px #000;">=</div>
<div style="position:absolute;top:1385.82px;font-size:17.7px;line-height:17.7px;white-space:nowrap;color:#000;right:1185.30px;-webkit-text-stroke:0.1px #000;">0.00</div>
<div style="position:absolute;top:1385.82px;font-size:17.7px;line-height:17.7px;white-space:nowrap;color:#000;left:1212.00px;-webkit-text-stroke:0.1px #000;">sf</div>
<div style="position:absolute;top:1385.82px;font-size:17.7px;line-height:17.7px;white-space:nowrap;color:#000;right:1012.30px;-webkit-text-stroke:0.1px #000;">0.00</div>
<div style="position:absolute;top:1385.82px;font-size:17.7px;line-height:17.7px;white-space:nowrap;color:#000;left:1385.00px;-webkit-text-stroke:0.1px #000;">sy</div>
<div style="position:absolute;top:1387.38px;font-size:15.5px;line-height:15.5px;white-space:nowrap;color:#000;left:1227.50px;width:600px;text-align:center;-webkit-text-stroke:0.1px #000;">x</div>
<div style="position:absolute;top:1385.82px;font-size:17.7px;line-height:17.7px;white-space:nowrap;color:#000;left:1355.00px;width:600px;text-align:center;transform:scaleX(1.12);transform-origin:center 0;-webkit-text-stroke:0.1px #000;">ft</div>
<div style="position:absolute;top:1385.82px;font-size:17.7px;line-height:17.7px;white-space:nowrap;color:#000;left:1747.00px;-webkit-text-stroke:0.1px #000;">in</div>
<div style="position:absolute;top:1385.82px;font-size:17.7px;line-height:17.7px;white-space:nowrap;color:#000;left:1520.00px;width:600px;text-align:center;-webkit-text-stroke:0.1px #000;">=</div>
<div style="position:absolute;top:1385.82px;font-size:17.7px;line-height:17.7px;white-space:nowrap;color:#000;right:400.30px;-webkit-text-stroke:0.1px #000;">0.00</div>
<div style="position:absolute;top:1385.82px;font-size:17.7px;line-height:17.7px;white-space:nowrap;color:#000;left:1997.00px;-webkit-text-stroke:0.1px #000;">cf</div>
<div style="position:absolute;top:1385.82px;font-size:17.7px;line-height:17.7px;white-space:nowrap;color:#000;right:228.30px;-webkit-text-stroke:0.1px #000;">0.00</div>
<div style="position:absolute;top:1385.82px;font-size:17.7px;line-height:17.7px;white-space:nowrap;color:#000;left:2169.00px;-webkit-text-stroke:0.1px #000;">cy</div>
<div style="position:absolute;top:1413.82px;font-size:17.7px;line-height:17.7px;white-space:nowrap;color:#000;left:221.00px;width:600px;text-align:center;transform:scaleX(1.12);transform-origin:center 0;-webkit-text-stroke:0.1px #000;">ft</div>
<div style="position:absolute;top:1413.82px;font-size:17.7px;line-height:17.7px;white-space:nowrap;color:#000;left:613.00px;-webkit-text-stroke:0.1px #000;">in</div>
<div style="position:absolute;top:1415.38px;font-size:15.5px;line-height:15.5px;white-space:nowrap;color:#000;left:461.50px;width:600px;text-align:center;-webkit-text-stroke:0.1px #000;">x</div>
<div style="position:absolute;top:1413.82px;font-size:17.7px;line-height:17.7px;white-space:nowrap;color:#000;left:589.00px;width:600px;text-align:center;transform:scaleX(1.12);transform-origin:center 0;-webkit-text-stroke:0.1px #000;">ft</div>
<div style="position:absolute;top:1413.82px;font-size:17.7px;line-height:17.7px;white-space:nowrap;color:#000;left:981.00px;-webkit-text-stroke:0.1px #000;">in</div>
<div style="position:absolute;top:1413.82px;font-size:17.7px;line-height:17.7px;white-space:nowrap;color:#000;left:754.00px;width:600px;text-align:center;-webkit-text-stroke:0.1px #000;">=</div>
<div style="position:absolute;top:1413.82px;font-size:17.7px;line-height:17.7px;white-space:nowrap;color:#000;right:1185.30px;-webkit-text-stroke:0.1px #000;">0.00</div>
<div style="position:absolute;top:1413.82px;font-size:17.7px;line-height:17.7px;white-space:nowrap;color:#000;left:1212.00px;-webkit-text-stroke:0.1px #000;">sf</div>
<div style="position:absolute;top:1413.82px;font-size:17.7px;line-height:17.7px;white-space:nowrap;color:#000;right:1012.30px;-webkit-text-stroke:0.1px #000;">0.00</div>
<div style="position:absolute;top:1413.82px;font-size:17.7px;line-height:17.7px;white-space:nowrap;color:#000;left:1385.00px;-webkit-text-stroke:0.1px #000;">sy</div>
<div style="position:absolute;top:1415.38px;font-size:15.5px;line-height:15.5px;white-space:nowrap;color:#000;left:1227.50px;width:600px;text-align:center;-webkit-text-stroke:0.1px #000;">x</div>
<div style="position:absolute;top:1413.82px;font-size:17.7px;line-height:17.7px;white-space:nowrap;color:#000;left:1355.00px;width:600px;text-align:center;transform:scaleX(1.12);transform-origin:center 0;-webkit-text-stroke:0.1px #000;">ft</div>
<div style="position:absolute;top:1413.82px;font-size:17.7px;line-height:17.7px;white-space:nowrap;color:#000;left:1747.00px;-webkit-text-stroke:0.1px #000;">in</div>
<div style="position:absolute;top:1413.82px;font-size:17.7px;line-height:17.7px;white-space:nowrap;color:#000;left:1520.00px;width:600px;text-align:center;-webkit-text-stroke:0.1px #000;">=</div>
<div style="position:absolute;top:1413.82px;font-size:17.7px;line-height:17.7px;white-space:nowrap;color:#000;right:400.30px;-webkit-text-stroke:0.1px #000;">0.00</div>
<div style="position:absolute;top:1413.82px;font-size:17.7px;line-height:17.7px;white-space:nowrap;color:#000;left:1997.00px;-webkit-text-stroke:0.1px #000;">cf</div>
<div style="position:absolute;top:1413.82px;font-size:17.7px;line-height:17.7px;white-space:nowrap;color:#000;right:228.30px;-webkit-text-stroke:0.1px #000;">0.00</div>
<div style="position:absolute;top:1413.82px;font-size:17.7px;line-height:17.7px;white-space:nowrap;color:#000;left:2169.00px;-webkit-text-stroke:0.1px #000;">cy</div>
<div style="position:absolute;top:1441.82px;font-size:17.7px;line-height:17.7px;white-space:nowrap;color:#000;left:221.00px;width:600px;text-align:center;transform:scaleX(1.12);transform-origin:center 0;-webkit-text-stroke:0.1px #000;">ft</div>
<div style="position:absolute;top:1441.82px;font-size:17.7px;line-height:17.7px;white-space:nowrap;color:#000;left:613.00px;-webkit-text-stroke:0.1px #000;">in</div>
<div style="position:absolute;top:1443.38px;font-size:15.5px;line-height:15.5px;white-space:nowrap;color:#000;left:461.50px;width:600px;text-align:center;-webkit-text-stroke:0.1px #000;">x</div>
<div style="position:absolute;top:1441.82px;font-size:17.7px;line-height:17.7px;white-space:nowrap;color:#000;left:589.00px;width:600px;text-align:center;transform:scaleX(1.12);transform-origin:center 0;-webkit-text-stroke:0.1px #000;">ft</div>
<div style="position:absolute;top:1441.82px;font-size:17.7px;line-height:17.7px;white-space:nowrap;color:#000;left:981.00px;-webkit-text-stroke:0.1px #000;">in</div>
<div style="position:absolute;top:1441.82px;font-size:17.7px;line-height:17.7px;white-space:nowrap;color:#000;left:754.00px;width:600px;text-align:center;-webkit-text-stroke:0.1px #000;">=</div>
<div style="position:absolute;top:1441.82px;font-size:17.7px;line-height:17.7px;white-space:nowrap;color:#000;right:1185.30px;-webkit-text-stroke:0.1px #000;">0.00</div>
<div style="position:absolute;top:1441.82px;font-size:17.7px;line-height:17.7px;white-space:nowrap;color:#000;left:1212.00px;-webkit-text-stroke:0.1px #000;">sf</div>
<div style="position:absolute;top:1441.82px;font-size:17.7px;line-height:17.7px;white-space:nowrap;color:#000;right:1012.30px;-webkit-text-stroke:0.1px #000;">0.00</div>
<div style="position:absolute;top:1441.82px;font-size:17.7px;line-height:17.7px;white-space:nowrap;color:#000;left:1385.00px;-webkit-text-stroke:0.1px #000;">sy</div>
<div style="position:absolute;top:1443.38px;font-size:15.5px;line-height:15.5px;white-space:nowrap;color:#000;left:1227.50px;width:600px;text-align:center;-webkit-text-stroke:0.1px #000;">x</div>
<div style="position:absolute;top:1441.82px;font-size:17.7px;line-height:17.7px;white-space:nowrap;color:#000;left:1355.00px;width:600px;text-align:center;transform:scaleX(1.12);transform-origin:center 0;-webkit-text-stroke:0.1px #000;">ft</div>
<div style="position:absolute;top:1441.82px;font-size:17.7px;line-height:17.7px;white-space:nowrap;color:#000;left:1747.00px;-webkit-text-stroke:0.1px #000;">in</div>
<div style="position:absolute;top:1441.82px;font-size:17.7px;line-height:17.7px;white-space:nowrap;color:#000;left:1520.00px;width:600px;text-align:center;-webkit-text-stroke:0.1px #000;">=</div>
<div style="position:absolute;top:1441.82px;font-size:17.7px;line-height:17.7px;white-space:nowrap;color:#000;right:400.30px;-webkit-text-stroke:0.1px #000;">0.00</div>
<div style="position:absolute;top:1441.82px;font-size:17.7px;line-height:17.7px;white-space:nowrap;color:#000;left:1997.00px;-webkit-text-stroke:0.1px #000;">cf</div>
<div style="position:absolute;top:1441.82px;font-size:17.7px;line-height:17.7px;white-space:nowrap;color:#000;right:228.30px;-webkit-text-stroke:0.1px #000;">0.00</div>
<div style="position:absolute;top:1441.82px;font-size:17.7px;line-height:17.7px;white-space:nowrap;color:#000;left:2169.00px;-webkit-text-stroke:0.1px #000;">cy</div>
<div style="position:absolute;top:1469.82px;font-size:17.7px;line-height:17.7px;white-space:nowrap;color:#000;left:221.00px;width:600px;text-align:center;transform:scaleX(1.12);transform-origin:center 0;-webkit-text-stroke:0.1px #000;">ft</div>
<div style="position:absolute;top:1469.82px;font-size:17.7px;line-height:17.7px;white-space:nowrap;color:#000;left:613.00px;-webkit-text-stroke:0.1px #000;">in</div>
<div style="position:absolute;top:1471.38px;font-size:15.5px;line-height:15.5px;white-space:nowrap;color:#000;left:461.50px;width:600px;text-align:center;-webkit-text-stroke:0.1px #000;">x</div>
<div style="position:absolute;top:1469.82px;font-size:17.7px;line-height:17.7px;white-space:nowrap;color:#000;left:589.00px;width:600px;text-align:center;transform:scaleX(1.12);transform-origin:center 0;-webkit-text-stroke:0.1px #000;">ft</div>
<div style="position:absolute;top:1469.82px;font-size:17.7px;line-height:17.7px;white-space:nowrap;color:#000;left:981.00px;-webkit-text-stroke:0.1px #000;">in</div>
<div style="position:absolute;top:1469.82px;font-size:17.7px;line-height:17.7px;white-space:nowrap;color:#000;left:754.00px;width:600px;text-align:center;-webkit-text-stroke:0.1px #000;">=</div>
<div style="position:absolute;top:1469.82px;font-size:17.7px;line-height:17.7px;white-space:nowrap;color:#000;right:1185.30px;-webkit-text-stroke:0.1px #000;">0.00</div>
<div style="position:absolute;top:1469.82px;font-size:17.7px;line-height:17.7px;white-space:nowrap;color:#000;left:1212.00px;-webkit-text-stroke:0.1px #000;">sf</div>
<div style="position:absolute;top:1469.82px;font-size:17.7px;line-height:17.7px;white-space:nowrap;color:#000;right:1012.30px;-webkit-text-stroke:0.1px #000;">0.00</div>
<div style="position:absolute;top:1469.82px;font-size:17.7px;line-height:17.7px;white-space:nowrap;color:#000;left:1385.00px;-webkit-text-stroke:0.1px #000;">sy</div>
<div style="position:absolute;top:1471.38px;font-size:15.5px;line-height:15.5px;white-space:nowrap;color:#000;left:1227.50px;width:600px;text-align:center;-webkit-text-stroke:0.1px #000;">x</div>
<div style="position:absolute;top:1469.82px;font-size:17.7px;line-height:17.7px;white-space:nowrap;color:#000;left:1355.00px;width:600px;text-align:center;transform:scaleX(1.12);transform-origin:center 0;-webkit-text-stroke:0.1px #000;">ft</div>
<div style="position:absolute;top:1469.82px;font-size:17.7px;line-height:17.7px;white-space:nowrap;color:#000;left:1747.00px;-webkit-text-stroke:0.1px #000;">in</div>
<div style="position:absolute;top:1469.82px;font-size:17.7px;line-height:17.7px;white-space:nowrap;color:#000;left:1520.00px;width:600px;text-align:center;-webkit-text-stroke:0.1px #000;">=</div>
<div style="position:absolute;top:1469.82px;font-size:17.7px;line-height:17.7px;white-space:nowrap;color:#000;right:400.30px;-webkit-text-stroke:0.1px #000;">0.00</div>
<div style="position:absolute;top:1469.82px;font-size:17.7px;line-height:17.7px;white-space:nowrap;color:#000;left:1997.00px;-webkit-text-stroke:0.1px #000;">cf</div>
<div style="position:absolute;top:1469.82px;font-size:17.7px;line-height:17.7px;white-space:nowrap;color:#000;right:228.30px;-webkit-text-stroke:0.1px #000;">0.00</div>
<div style="position:absolute;top:1469.82px;font-size:17.7px;line-height:17.7px;white-space:nowrap;color:#000;left:2169.00px;-webkit-text-stroke:0.1px #000;">cy</div>
<div style="position:absolute;top:433.10px;font-size:17.6px;line-height:17.6px;white-space:nowrap;color:#000;font-weight:bold;text-decoration:underline;text-decoration-thickness:1.6px;text-underline-offset:1.5px;text-decoration-skip-ink:none;left:123.00px;">Foundation Walls - poured</div>
<div style="position:absolute;left:0px;top:1490px;width:2388px;height:118px;background:#F2F2F2;"></div>
<div style="position:absolute;left:0px;top:1490px;width:2388px;height:10px;background:linear-gradient(#EAEAEA,#F2F2F2);"></div>
<div style="position:absolute;left:78px;top:1491px;width:1.5px;height:65px;background:#C8C8C8;"></div>
<div style="position:absolute;left:843px;top:1491px;width:1.5px;height:65px;background:#C8C8C8;"></div>
<div style="position:absolute;left:935px;top:1491px;width:1.5px;height:65px;background:#C8C8C8;"></div>
<div style="position:absolute;left:335px;top:1490.5px;width:223px;height:66px;background:#fff;border:1px solid #D6D6D6;border-top:none;border-radius:0 0 6px 6px;box-shadow:0 2px 4px rgba(0,0,0,0.06)"></div>
<svg style="left:0;top:0" width="2388" height="1608"><path d="M126.5,1522 L126.5,1518.5 C126.5,1513.5 129.5,1511.2 133,1511.2 C136.5,1511.2 139.5,1513.5 139.5,1518.5 L139.5,1522" fill="none" stroke="#707070" stroke-width="3.2"/><rect x="123" y="1521.5" width="20" height="12.3" rx="2.2" fill="#707070"/></svg>
<svg style="left:0;top:0" width="2388" height="1608"><path d="M382.5,1522 L382.5,1518.5 C382.5,1513.5 385.5,1511.2 389,1511.2 C392.5,1511.2 395.5,1513.5 395.5,1518.5 L395.5,1522" fill="none" stroke="#707070" stroke-width="3.2"/><rect x="379" y="1521.5" width="20" height="12.3" rx="2.2" fill="#707070"/></svg>
<div style="position:absolute;top:1509.80px;font-size:28px;line-height:28px;white-space:nowrap;color:#6B6B6B;left:152.00px;">Calc Sheet</div>
<div style="position:absolute;top:1509.37px;font-size:28.5px;line-height:28.5px;white-space:nowrap;color:#1F7A47;left:405.00px;-webkit-text-stroke:0.5px #1F7A47;">Example</div>
<div style="position:absolute;top:1509.29px;font-size:28.6px;line-height:28.6px;white-space:nowrap;color:#6B6B6B;left:597.00px;">Instruction Page</div>
<svg style="left:0;top:0" width="2388" height="1608"><path d="M890,1509 L890,1536 M876,1522.5 L904,1522.5" stroke="#6B6B6B" stroke-width="2.6"/></svg>
<div style="position:absolute;left:879px;top:1582px;width:630px;height:11px;background:#000;border-radius:5.5px"></div>
</body></html>
